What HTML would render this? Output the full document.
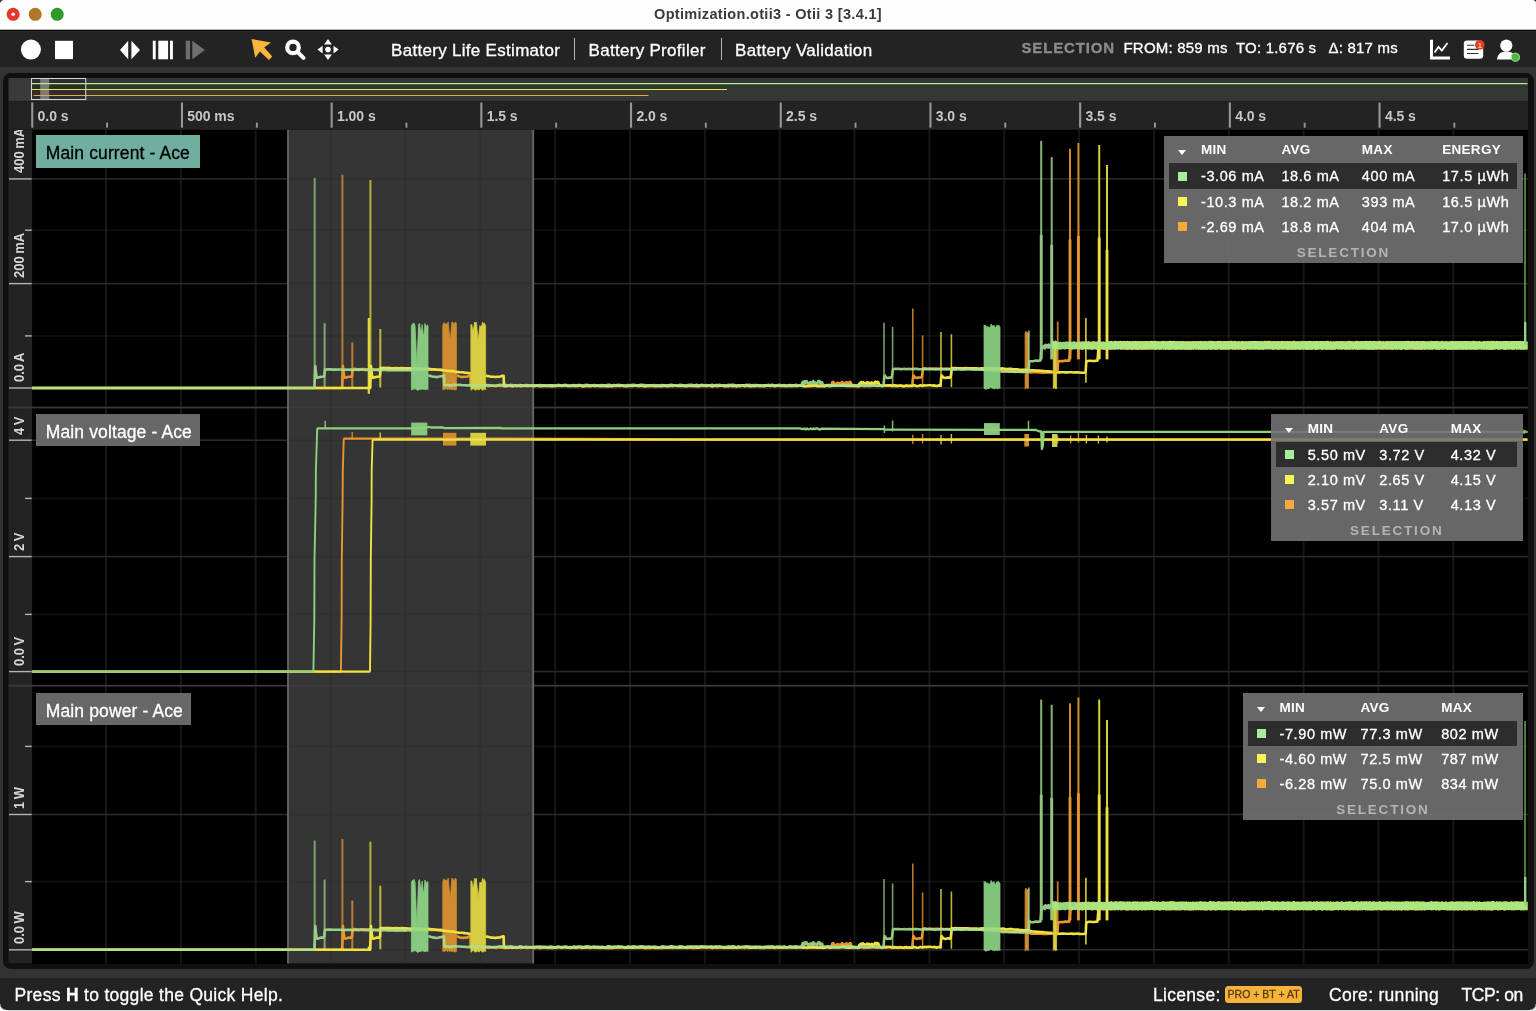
<!DOCTYPE html>
<html><head><meta charset="utf-8"><title>Optimization.otii3 - Otii 3 [3.4.1]</title>
<style>
html,body{margin:0;padding:0}
body{width:1536px;height:1011px;overflow:hidden;background:#333;font-family:"Liberation Sans",sans-serif;position:relative;color:#fff}
.abs{position:absolute}
#wrap{position:absolute;left:0;top:0;width:1536px;height:1011px;will-change:transform}
#titlebar{position:absolute;left:0;top:0;width:1536px;height:30px;background:#fdfdfd;box-sizing:border-box;border-bottom:1px solid #b6b6b6}
#title{position:absolute;left:0;top:6px;width:1536px;text-align:center;font-weight:bold;font-size:14.5px;line-height:16px;color:#3b3b3b;letter-spacing:0.32px}
.tl{position:absolute;top:8px;width:12.6px;height:12.6px;border-radius:50%}
#toolbar{position:absolute;left:0;top:30px;width:1536px;height:36.5px;background:#232323;border-top:1px solid #0a0a0a;box-sizing:border-box}
.nav{position:absolute;top:41px;font-size:17px;line-height:20px;color:#fff;white-space:nowrap;letter-spacing:0.3px}
.sep{position:absolute;top:37.5px;width:1.3px;height:22px;background:#b4b4b4}
.nav,.st,.sel,.clabel,.legend .v{-webkit-text-stroke:0.3px currentColor}
.sel{position:absolute;top:39px;font-size:15px;line-height:18px;color:#fff;white-space:nowrap;letter-spacing:0.2px}
#panel{position:absolute;left:3.4px;top:72.7px;width:1530.2px;height:896.2px;background:#101010;border-radius:8px}
#inner{position:absolute;left:8.5px;top:78px;width:1519.5px;height:885.5px;background:#000;overflow:hidden}
#status{position:absolute;left:0;top:978px;width:1536px;height:31.5px;background:#232323}
#bottomline{position:absolute;left:0;top:1009.5px;width:1536px;height:1.5px;background:#d8d8d8}
.st{position:absolute;top:985px;font-size:17.5px;line-height:20px;color:#fff;white-space:nowrap;letter-spacing:0.3px}
.tick{position:absolute;font-size:14px;font-weight:bold;color:#c8c8c8;line-height:14px;white-space:nowrap;letter-spacing:-0.05px}
.ylab{position:absolute;font-size:13px;font-weight:bold;color:#d6d6d6;line-height:14px;white-space:nowrap;transform-origin:0 0;transform:rotate(-90deg) scaleY(1.07);letter-spacing:0px;word-spacing:-1.1px}
#ywrap{position:absolute;left:8.5px;top:129.8px;width:23.2px;height:833.7px;overflow:hidden}
.clabel{position:absolute;height:32.2px;line-height:32.6px;padding-top:1.5px;font-size:17.5px;letter-spacing:0.12px;color:#fff;background:#676767;white-space:nowrap;padding-left:9.5px;box-sizing:border-box}
.legend{position:absolute;background:rgba(114,114,114,0.9);height:126.8px}
.legend .hd{position:absolute;top:6.3px;font-size:13.5px;font-weight:bold;line-height:16px;color:#fff;white-space:nowrap;letter-spacing:0.3px}
.legend .v{position:absolute;font-size:14.5px;line-height:18px;color:#fff;white-space:nowrap;letter-spacing:0.6px}
.legend .row{position:absolute;left:5.2px;height:25.2px;background:#2d2d2d}
.legend .sq{position:absolute;left:14px;width:9px;height:9px}
.legend .selt{position:absolute;left:0;width:100%;text-align:center;top:109.2px;font-size:13.5px;line-height:16px;font-weight:bold;color:#b4b4b4;letter-spacing:1.8px}
.caret{position:absolute;left:14.2px;top:14px;width:0;height:0;border-left:4.5px solid transparent;border-right:4.5px solid transparent;border-top:5px solid #fff}
</style></head>
<body>
<div id="wrap">
<div id="titlebar"><svg class="abs" style="left:0;top:0" width="80" height="30"><circle cx="13.15" cy="14.3" r="6.5" fill="#e8362a"/><circle cx="13.15" cy="14.3" r="1.8" fill="#fff"/><circle cx="35.2" cy="14.3" r="6.5" fill="#b0762a"/><circle cx="57.2" cy="14.3" r="6.5" fill="#2f9a2a"/></svg><div id="title">Optimization.otii3 - Otii 3 [3.4.1]</div><svg class="abs" style="left:0;top:0" width="8" height="8"><path d="M0 0H4.5A4.5 4.5 0 0 0 0 3.5Z" fill="#333"/></svg><svg class="abs" style="left:1528px;top:0" width="8" height="8"><path d="M8 0H5A3.2 3.2 0 0 1 8 2.6Z" fill="#333"/></svg></div>
<div id="toolbar"></div>
<svg class="abs" style="left:0;top:30px" width="360" height="37" viewBox="0 30 360 37">
<circle cx="30.9" cy="49.6" r="10" fill="#fff"/>
<rect x="55" y="40.8" width="18" height="18.3" fill="#fff"/>
<path d="M120 50L128.2 40.7V59.3Z M140 50L131.4 40.7V59.3Z" fill="#fff"/>
<rect x="152.8" y="40.7" width="2.9" height="18.6" fill="#fff"/><rect x="158.3" y="40.7" width="9.8" height="18.6" fill="#fff"/><rect x="170" y="40.7" width="2.9" height="18.6" fill="#fff"/>
<rect x="185.8" y="40.7" width="4.2" height="18.6" fill="#6f6f6f"/><path d="M192.3 40.7L205 50L192.3 59.3Z" fill="#6f6f6f"/>
<path d="M251.6 39L271 42.6L264.2 47.6L272.3 56.6L268.9 60.1L260 51.6L255.2 57.8Z" fill="#f9b43c"/>
<circle cx="293" cy="47.4" r="5.75" fill="none" stroke="#fff" stroke-width="4.2"/><path d="M297.4 51.8L303.5 57.9" stroke="#fff" stroke-width="4" stroke-linecap="round"/>
<g fill="#fff"><circle cx="328" cy="49.6" r="2.8"/><path d="M328 39L331.9 44.6H324.1Z"/><path d="M328 60.1L331.9 54.6H324.1Z"/><path d="M317.5 49.6L322.6 45.7V53.5Z"/><path d="M338.6 49.6L333.5 45.7V53.5Z"/></g>
</svg>
<div class="nav" style="left:391px">Battery Life Estimator</div><div class="sep" style="left:574px"></div><div class="nav" style="left:588.5px">Battery Profiler</div><div class="sep" style="left:720.5px"></div><div class="nav" style="left:735px">Battery Validation</div>
<div class="sel" style="left:1021.5px;color:#8c8c8c;font-weight:bold;letter-spacing:0.85px">SELECTION</div><div class="sel" style="left:1123.5px">FROM: 859 ms</div><div class="sel" style="left:1236px">TO: 1.676 s</div><div class="sel" style="left:1328.5px">Δ: 817 ms</div>
<svg class="abs" style="left:1420px;top:30px" width="116" height="37" viewBox="1420 30 116 37">
<path d="M1431.5 39.7V58H1450" fill="none" stroke="#fff" stroke-width="3"/>
<path d="M1434.5 52.5L1438.5 47L1441.8 50.5L1447.5 43" fill="none" stroke="#fff" stroke-width="1.8"/>
<rect x="1463.8" y="40.4" width="19.4" height="18.4" rx="3.2" fill="#fff"/>
<path d="M1467 45.3H1474.5M1467 49.4H1478.5M1467 53.5H1478.5" stroke="#333" stroke-width="1.1"/>
<circle cx="1479.8" cy="44.8" r="4.8" fill="#e8382c"/>
<text x="1479.8" y="47.6" font-size="7.5" font-weight="bold" fill="#ffd9a0" text-anchor="middle" font-family="Liberation Sans, sans-serif">1</text>
<circle cx="1506.3" cy="45.6" r="6.1" fill="#fff"/>
<path d="M1497 59.4C1497.5 54 1501 51.4 1506.3 51.4C1511.6 51.4 1515.5 54 1516.5 59.4Z" fill="#fff"/>
<circle cx="1515.4" cy="57.2" r="4.1" fill="#4cb848" stroke="#a8e4a0" stroke-width="0.9"/>
</svg>
<div id="panel"></div>
<div id="inner"></div>
<svg class="abs" style="left:0;top:0" width="1536" height="1011" viewBox="0 0 1536 1011">
<defs><clipPath id="c1"><rect x="31.7" y="129.8" width="1496.3" height="277.5"/></clipPath><clipPath id="c2"><rect x="31.7" y="408" width="1496.3" height="277.5"/></clipPath><clipPath id="c3"><rect x="31.7" y="686" width="1496.3" height="277.5"/></clipPath></defs>
<rect x="8.5" y="78" width="1519.5" height="23.2" fill="#3a3a3a"/><rect x="31.5" y="78" width="1496.5" height="23.2" fill="#353735"/><rect x="31.5" y="84" width="1496.5" height="4.2" fill="#2d3a2b"/><rect x="31.5" y="89.3" width="695.5" height="3" fill="#38382c"/><rect x="31.3" y="78.2" width="54.5" height="21.6" fill="#000" fill-opacity="0.17"/><rect x="40.2" y="78.5" width="9" height="21" fill="#8c8c8c" fill-opacity="0.8"/><path d="M31.5 83.6H1527.5" stroke="#b6e6a6" stroke-width="1.05"/><path d="M31.5 89.4H727" stroke="#ebe25c" stroke-width="1.05"/><path d="M33.6 95.4H648.5" stroke="#e8a644" stroke-width="1.05"/><rect x="31.5" y="78.5" width="54.2" height="21" fill="none" stroke="#d2d2d2" stroke-width="1.05"/>
<rect x="8.5" y="101.2" width="1519.5" height="28.6" fill="#232323"/><rect x="31.2" y="102.5" width="2.1" height="25.2" fill="#969696"/><rect x="106.1" y="122.6" width="1.9" height="5.1" fill="#969696"/><rect x="180.9" y="102.5" width="2.1" height="25.2" fill="#969696"/><rect x="255.9" y="122.6" width="1.9" height="5.1" fill="#969696"/><rect x="330.6" y="102.5" width="2.1" height="25.2" fill="#969696"/><rect x="405.5" y="122.6" width="1.9" height="5.1" fill="#969696"/><rect x="480.3" y="102.5" width="2.1" height="25.2" fill="#969696"/><rect x="555.2" y="122.6" width="1.9" height="5.1" fill="#969696"/><rect x="630" y="102.5" width="2.1" height="25.2" fill="#969696"/><rect x="704.9" y="122.6" width="1.9" height="5.1" fill="#969696"/><rect x="779.7" y="102.5" width="2.1" height="25.2" fill="#969696"/><rect x="854.6" y="122.6" width="1.9" height="5.1" fill="#969696"/><rect x="929.4" y="102.5" width="2.1" height="25.2" fill="#969696"/><rect x="1004.3" y="122.6" width="1.9" height="5.1" fill="#969696"/><rect x="1079.1" y="102.5" width="2.1" height="25.2" fill="#969696"/><rect x="1154" y="122.6" width="1.9" height="5.1" fill="#969696"/><rect x="1228.8" y="102.5" width="2.1" height="25.2" fill="#969696"/><rect x="1303.7" y="122.6" width="1.9" height="5.1" fill="#969696"/><rect x="1378.5" y="102.5" width="2.1" height="25.2" fill="#969696"/><rect x="1453.4" y="122.6" width="1.9" height="5.1" fill="#969696"/>
<rect x="8.5" y="129.8" width="23.2" height="833.7" fill="#232323"/><rect x="288.3" y="129.8" width="244.9" height="833.7" fill="#353535"/><rect x="30.2" y="129.8" width="2" height="833.7" fill="#2c2c2c" fill-opacity="0.52"/><rect x="105" y="129.8" width="2" height="833.7" fill="#2c2c2c" fill-opacity="0.52"/><rect x="179.9" y="129.8" width="2" height="833.7" fill="#2c2c2c" fill-opacity="0.52"/><rect x="254.7" y="129.8" width="2" height="833.7" fill="#2c2c2c" fill-opacity="0.52"/><rect x="329.6" y="129.8" width="2" height="833.7" fill="#2c2c2c" fill-opacity="0.52"/><rect x="404.4" y="129.8" width="2" height="833.7" fill="#2c2c2c" fill-opacity="0.52"/><rect x="479.3" y="129.8" width="2" height="833.7" fill="#2c2c2c" fill-opacity="0.52"/><rect x="554.1" y="129.8" width="2" height="833.7" fill="#2c2c2c" fill-opacity="0.52"/><rect x="629" y="129.8" width="2" height="833.7" fill="#2c2c2c" fill-opacity="0.52"/><rect x="703.9" y="129.8" width="2" height="833.7" fill="#2c2c2c" fill-opacity="0.52"/><rect x="778.7" y="129.8" width="2" height="833.7" fill="#2c2c2c" fill-opacity="0.52"/><rect x="853.5" y="129.8" width="2" height="833.7" fill="#2c2c2c" fill-opacity="0.52"/><rect x="928.4" y="129.8" width="2" height="833.7" fill="#2c2c2c" fill-opacity="0.52"/><rect x="1003.2" y="129.8" width="2" height="833.7" fill="#2c2c2c" fill-opacity="0.52"/><rect x="1078.1" y="129.8" width="2" height="833.7" fill="#2c2c2c" fill-opacity="0.52"/><rect x="1153" y="129.8" width="2" height="833.7" fill="#2c2c2c" fill-opacity="0.52"/><rect x="1227.8" y="129.8" width="2" height="833.7" fill="#2c2c2c" fill-opacity="0.52"/><rect x="1302.6" y="129.8" width="2" height="833.7" fill="#2c2c2c" fill-opacity="0.52"/><rect x="1377.5" y="129.8" width="2" height="833.7" fill="#2c2c2c" fill-opacity="0.52"/><rect x="1452.3" y="129.8" width="2" height="833.7" fill="#2c2c2c" fill-opacity="0.52"/><rect x="31.7" y="178.1" width="256.6" height="1.6" fill="#2c2c2c" fill-opacity="0.95"/><rect x="288.3" y="178.1" width="244.9" height="1.6" fill="#2f2f2f" fill-opacity="0.8"/><rect x="533.2" y="178.1" width="994.8" height="1.6" fill="#2c2c2c" fill-opacity="0.95"/><rect x="31.7" y="282.8" width="256.6" height="1.6" fill="#2c2c2c" fill-opacity="0.95"/><rect x="288.3" y="282.8" width="244.9" height="1.6" fill="#2f2f2f" fill-opacity="0.8"/><rect x="533.2" y="282.8" width="994.8" height="1.6" fill="#2c2c2c" fill-opacity="0.95"/><rect x="31.7" y="387.2" width="256.6" height="1.6" fill="#2c2c2c" fill-opacity="0.95"/><rect x="288.3" y="387.2" width="244.9" height="1.6" fill="#2f2f2f" fill-opacity="0.8"/><rect x="533.2" y="387.2" width="994.8" height="1.6" fill="#2c2c2c" fill-opacity="0.95"/><rect x="31.7" y="439.4" width="256.6" height="1.6" fill="#2c2c2c" fill-opacity="0.95"/><rect x="288.3" y="439.4" width="244.9" height="1.6" fill="#2f2f2f" fill-opacity="0.8"/><rect x="533.2" y="439.4" width="994.8" height="1.6" fill="#2c2c2c" fill-opacity="0.95"/><rect x="31.7" y="555.8" width="256.6" height="1.6" fill="#2c2c2c" fill-opacity="0.95"/><rect x="288.3" y="555.8" width="244.9" height="1.6" fill="#2f2f2f" fill-opacity="0.8"/><rect x="533.2" y="555.8" width="994.8" height="1.6" fill="#2c2c2c" fill-opacity="0.95"/><rect x="31.7" y="670.8" width="256.6" height="1.6" fill="#2c2c2c" fill-opacity="0.95"/><rect x="288.3" y="670.8" width="244.9" height="1.6" fill="#2f2f2f" fill-opacity="0.8"/><rect x="533.2" y="670.8" width="994.8" height="1.6" fill="#2c2c2c" fill-opacity="0.95"/><rect x="31.7" y="813.7" width="256.6" height="1.6" fill="#2c2c2c" fill-opacity="0.95"/><rect x="288.3" y="813.7" width="244.9" height="1.6" fill="#2f2f2f" fill-opacity="0.8"/><rect x="533.2" y="813.7" width="994.8" height="1.6" fill="#2c2c2c" fill-opacity="0.95"/><rect x="31.7" y="949" width="256.6" height="1.6" fill="#2c2c2c" fill-opacity="0.95"/><rect x="288.3" y="949" width="244.9" height="1.6" fill="#2f2f2f" fill-opacity="0.8"/><rect x="533.2" y="949" width="994.8" height="1.6" fill="#2c2c2c" fill-opacity="0.95"/><rect x="31.7" y="229.4" width="1496.3" height="1.6" fill="#2c2c2c" fill-opacity="0.38"/><rect x="31.7" y="335.1" width="1496.3" height="1.6" fill="#2c2c2c" fill-opacity="0.38"/><rect x="31.7" y="497.6" width="1496.3" height="1.6" fill="#2c2c2c" fill-opacity="0.38"/><rect x="31.7" y="613.6" width="1496.3" height="1.6" fill="#2c2c2c" fill-opacity="0.38"/><rect x="31.7" y="745.6" width="1496.3" height="1.6" fill="#2c2c2c" fill-opacity="0.38"/><rect x="31.7" y="880.8" width="1496.3" height="1.6" fill="#2c2c2c" fill-opacity="0.38"/><rect x="9" y="178.2" width="22.7" height="1.4" fill="#b4b4b4"/><rect x="9" y="282.9" width="22.7" height="1.4" fill="#b4b4b4"/><rect x="9" y="387.3" width="22.7" height="1.4" fill="#b4b4b4"/><rect x="9" y="439.5" width="22.7" height="1.4" fill="#b4b4b4"/><rect x="9" y="555.9" width="22.7" height="1.4" fill="#b4b4b4"/><rect x="9" y="670.9" width="22.7" height="1.4" fill="#b4b4b4"/><rect x="9" y="813.8" width="22.7" height="1.4" fill="#b4b4b4"/><rect x="9" y="949.1" width="22.7" height="1.4" fill="#b4b4b4"/><rect x="25" y="229.5" width="6.7" height="1.4" fill="#b4b4b4"/><rect x="25" y="335.2" width="6.7" height="1.4" fill="#b4b4b4"/><rect x="25" y="497.7" width="6.7" height="1.4" fill="#b4b4b4"/><rect x="25" y="613.7" width="6.7" height="1.4" fill="#b4b4b4"/><rect x="25" y="745.7" width="6.7" height="1.4" fill="#b4b4b4"/><rect x="25" y="880.9" width="6.7" height="1.4" fill="#b4b4b4"/><rect x="8.5" y="406.6" width="1519.5" height="1.8" fill="#3a3a3a"/><rect x="8.5" y="684.8" width="1519.5" height="1.8" fill="#3a3a3a"/>
<rect x="287.1" y="129.8" width="1.8" height="833.7" fill="#686868"/><rect x="532.3" y="129.8" width="1.8" height="833.7" fill="#686868"/>
<g clip-path="url(#c1)"><g opacity="1"><path d="M442.8 389.6L442.8 325.6L443.7 322.8L444.6 323L445.5 324.2L446.4 323.9L447.3 324L448.2 322L449.1 331.3L450 339.2L450.9 334.1L451.8 322.2L452.7 322.1L453.6 324.2L454.5 323.7L455.4 322L456.3 322.9L456.4 325.3L456.4 389.6L456.4 389.5L455.3 389.9L454.2 389.8L453.1 389.1L452 390L450.9 388.7L449.8 389.9L448.7 388.7L447.6 389.8L446.5 388.6L445.4 389.1L444.3 389.4L443.2 389.4Z" fill="#cf8d30" stroke="#cf8d30" stroke-width="0.8" stroke-linejoin="round"/><path d="M1025.1 388.5L1025.1 333.1L1026 331.1L1026.9 333.8L1027.8 332.2L1028.4 334.2L1028.4 388.5L1028.4 388.4L1027.3 388.3L1026.2 387.6L1025.1 389.2Z" fill="#cf8d30" stroke="#cf8d30" stroke-width="0.8" stroke-linejoin="round"/><path d="M342.4 388V174.8" stroke="#e8962e" stroke-width="2.1" stroke-opacity="0.68"/><path d="M352.3 387.5V342.5" stroke="#e8962e" stroke-width="2.0" stroke-opacity="0.75"/><path d="M912.8 387V308.6" stroke="#e8962e" stroke-width="1.6" stroke-opacity="0.8"/><path d="M922.6 387V335.2" stroke="#e8962e" stroke-width="1.6" stroke-opacity="0.8"/><path d="M1057.7 368.1V321.6" stroke="#e8962e" stroke-width="1.7" stroke-opacity="0.85"/><path d="M1070 359.3V148.7" stroke="#e8962e" stroke-width="2.0" stroke-opacity="0.9"/><path d="M1070 359.3V239.6" stroke="#e8962e" stroke-width="2.9" stroke-opacity="0.95"/><path d="M1078.4 359.3V142.9" stroke="#e8962e" stroke-width="2.0" stroke-opacity="0.9"/><path d="M1078.4 359.3V236.1" stroke="#e8962e" stroke-width="2.9" stroke-opacity="0.95"/><path d="M31.7 388L342.1 388L342.5 377.6L343 366.1L343.6 372.3L344.3 376.5L345 377.8L346.9 377.3L348.9 376.8L350.9 376.8L352 376L352.6 369.1L353.9 368.9L355.9 369L357.9 369.4L360 369.4L362 369.1L364 369.1L366 369.2L368 369.3L370.1 369.2L372.1 369.3L374.1 369.3L376.1 369.5L378.1 369.4L380.2 369.4L382.2 369.3L384.2 369.2L386.2 369.2L388.2 369.4L390.3 369.5L392.3 369.6L394.3 369.7L396.3 369.7L398.3 369.5L400.4 369.6L402.4 369.6L404.4 369.4L406.4 369.6L408.5 369.6L410.5 369.7L412.5 369.9L414.5 369.7L416.5 369.8L418.6 369.7L420.6 369.5L422.6 369.7L424.6 369.9L426.6 369.6L428.7 369.7L430.7 369.7L432.7 369.7L434.7 369.7L436.7 369.7L438.8 369.9L440.8 369.7L442.8 369.7M456.7 375.4L458.2 376L459.7 376.5L461.3 376.9L462.8 377L464.3 376.8L465.8 376.8L467.4 376.6L468.9 375.9L470.4 375.4L470.8 386L472.4 385.6L474.4 386.3L476.4 385.7L478.4 386.4L480.4 385.8L482.4 386.2L484.4 386.2L486.4 385.6L488.4 386.3L490.4 385.9L492.4 385.6L494.4 386.2L496.4 386.2L498.4 385.6L500.4 386L502.4 385.8L504.4 386.4L506.4 386.1L508.4 386.3L510.4 385.8L512.4 386.4L514.4 385.5L516.4 386.4L518.5 385.7L520.5 386.4L522.5 386.2L524.5 385.7L526.5 386.3L528.5 386.3L530.5 385.8L532.5 386.1L534.5 386.4L536.5 385.5L538.5 386.3L540.5 386.4L542.5 386.1L544.5 385.9L546.5 385.7L548.5 386.3L550.5 386.1L552.5 386.4L554.5 386L556.5 385.7L558.5 385.7L560.5 385.6L562.5 385.7L564.5 385.6L566.5 385.8L568.5 386L570.5 386.2L572.5 385.8L574.5 386.1L576.5 386.3L578.5 386L580.5 385.6L582.5 386.3L584.5 385.9L586.5 386.1L588.5 385.9L590.5 386.3L592.5 385.5L594.5 386.2L596.5 385.9L598.5 386L600.5 386.4L602.5 385.9L604.5 386.3L606.5 386.4L608.6 386.4L610.6 386.3L612.6 386.3L614.6 385.8L616.6 386L618.6 385.5L620.6 385.6L622.6 385.5L624.6 386.2L626.6 386L628.6 386.2L630.6 385.9L632.6 385.8L634.6 385.7L636.6 385.8L638.6 386.2L640.6 386L642.6 385.9L644.6 386.4L646.6 386.4L648.6 386L650.6 386.3L652.6 385.8L654.6 386.2L656.6 386.3L658.6 386.3L660.6 386.2L662.6 386.2L664.6 385.9L666.6 386L668.6 386.1L670.6 385.8L672.6 386.2L674.6 385.6L676.6 385.5L678.6 385.7L680.6 386L682.6 386L684.6 385.9L686.6 386.4L688.6 386L690.6 385.9L692.6 386.3L694.6 386.3L696.7 385.7L698.7 386.1L700.7 385.9L702.7 385.6L704.7 385.9L706.7 386.2L708.7 385.5L710.7 386.1L712.7 386.4L714.7 385.8L716.7 386.3L718.7 386.1L720.7 385.6L722.7 385.8L724.7 386.4L726.7 386L728.7 386L730.7 386L732.7 386.2L734.7 385.9L736.7 386.4L738.7 386.2L740.7 386.1L742.7 385.6L744.7 386.4L746.7 385.7L748.7 386.3L750.7 385.9L752.7 386.1L754.7 386L756.7 385.7L758.7 386.1L760.7 386.3L762.7 386.3L764.7 386.4L766.7 385.6L768.7 385.8L770.7 385.5L772.7 385.8L774.7 386.4L776.7 385.8L778.7 385.7L780.7 385.8L782.7 386L784.7 386.1L786.8 386L788.8 385.7L790.8 386.2L792.8 385.9L794.8 386L796.8 385.5L798.8 385.7L800.8 385.6L802.8 385.6L804.8 386.2L806.8 386.2L808.8 386L810.8 386.2L812.8 386L814.8 385.8L816.8 385.6L818.8 385.9L820.8 385.7L822.8 386.3L824.8 386.1L826.8 385.5L828.8 386.3L830.8 386L830.8 384.7L831.6 384.6L832.4 382.1L833.2 381.8L834 382.9L834.8 384.5L835.6 384L836.4 384.2L837.2 382.8L838 382.8L838.8 383.5L839.6 383.3L840.4 384.6L841.2 383.2L842 381.9L842.8 382.5L843.6 384.6L844.4 383.3L845.2 382.7L846 384.1L846.8 382.1L847.6 383.5L848.4 382.7L849.2 383.7L850 381.8L850.8 382.5L851.8 385.9L853.8 386.3L855.8 386L857.8 386.4L859.9 385.9L861.9 385.6L863.9 386.3L865.9 386L867.9 386L869.9 386.1L872 385.8L874 385.6L876 385.8L878 386L880 385.5L882 386.1L884.1 385.7L886.1 385.8L888.1 385.7L890.1 385.6L892.1 386.2L894.1 385.8L896.2 386.1L898.2 385.8L900.2 385.5L902.2 385.8L904.2 386.4L906.2 386L908.3 385.8L910.3 385.6L912.3 385.8L913 377.6L913.6 375.5L914.8 377.3L915.8 377.7L917.1 377.9L918.4 377.5L919.8 377.5L921.1 377.5L922 376.5L922.9 369.2L923.3 368.4L925.4 368.5L927.4 368.8L929.5 368.5L931.5 368.6L933.6 368.8L935.7 368.6L937.7 368.7L939.8 368.9L941.9 368.7L943.9 369L946 368.8L948 368.9L950.1 369L952.2 368.9L954.2 369L956.3 369.1L958.4 368.8L960.4 369.2L962.5 369.2L964.5 369.1L966.6 368.9L968.7 369L970.7 369L972.8 369.1L974.8 369.1L976.9 369.3L978.9 369.5L981 369.5L983 369.8L985.1 369.9L987.2 369.8L989.2 370.1L991.3 370L993.4 370.1L995.4 370.4L997.5 370.4L999.5 370.5L1001.6 370.5L1003.7 371L1005.7 371.1L1007.8 371.1L1009.9 371.2L1011.9 371.4L1014 371.6L1016 371.5L1018.1 371.5L1020.2 371.8L1022.2 371.9L1024.3 372.1M1029.3 372.2L1031.3 372.4L1033.3 372.3L1035.3 372.3L1037.3 372.3L1039.3 372.5L1041.3 372.3L1043.3 372.6L1045.4 372.4L1047.4 372.5L1049.4 372.5L1051.4 372.4L1053.4 372.4L1055.4 372.5L1057.4 372.7L1058.1 361.4L1059.8 361.3L1061.2 361L1062.5 361.1L1063.9 361L1065.2 360.5L1066.6 361L1067.9 360.4L1069.3 360.6L1070.4 347.2L1071.3 347.2L1072 347.3L1072.6 348.2L1073.2 346.7L1073.9 347.7L1074.5 346.7L1075.2 347.2L1075.8 344.9L1076.5 344.8L1077.1 346.5L1077.8 345.7L1079 345.4" fill="none" stroke="#e8962e" stroke-width="2.6" stroke-linejoin="round"/>
</g><path d="M1079 341.1L1079.9 341.9L1080.8 341.8L1081.7 341.7L1082.6 341.3L1083.5 341.3L1084.4 341.6L1085.3 341.7L1086.2 341.1L1087.1 341.4L1088 341.3L1088.9 341.2L1089.8 341.3L1090.7 341.7L1091.6 341.4L1092.5 341.6L1093.4 341.1L1094.3 341.6L1095.2 341.8L1096.1 341.9L1097 341.7L1097.9 341.2L1098.8 341.3L1099.7 341.5L1100.6 341.2L1101.5 341.8L1102.4 341.9L1103.3 341.1L1104.2 341.9L1105.1 341.8L1106 341.8L1106.9 341.8L1107.8 341.4L1108.7 341.7L1109.6 342L1110.5 341.2L1111.4 341.3L1112.3 341.5L1113.2 341.7L1114.1 341.4L1115 341.1L1115.9 341.6L1116.8 341.7L1117.7 341.5L1118.6 341.5L1119.5 341.1L1120.4 341.6L1121.3 341.5L1122.2 341.9L1123.1 341.9L1124 341.4L1124.9 341.9L1125.8 341.3L1126.7 341.9L1127.6 341.9L1128.5 341.4L1129.4 341.1L1130.3 342L1131.2 341.8L1132.1 341.5L1133 341.5L1133.9 341.8L1134.8 341.2L1135.7 341.4L1136.6 341.9L1137.5 341.9L1138.4 341.9L1139.3 342L1140.2 341.7L1141.1 341.2L1142 341.3L1142.9 341.2L1143.8 341.9L1144.7 341.4L1145.6 341.7L1146.5 341.6L1147.4 341.6L1148.3 341.3L1149.2 341.6L1150.1 341.3L1151 341.8L1151.9 341.4L1152.8 342L1153.7 341.8L1154.6 341.5L1155.5 341.4L1156.4 341.4L1157.3 342L1158.2 341.2L1159.1 341.5L1160 341.8L1160.9 341.4L1161.8 341.8L1162.7 341.1L1163.6 341.6L1164.5 341.8L1165.4 341.4L1166.3 341.2L1167.2 341.6L1168.1 341.3L1169 341.4L1169.9 341.4L1170.8 341.2L1171.7 341.7L1172.6 341.7L1173.5 341.2L1174.4 341.3L1175.3 341.3L1176.2 341.6L1177.1 341.6L1178 341.8L1178.9 341.8L1179.8 341.5L1180.7 341.9L1181.6 341.2L1182.5 341.4L1183.4 341.2L1184.3 341.7L1185.2 341.2L1186.1 342L1187 341.8L1187.9 341.7L1188.8 341.3L1189.7 341.6L1190.6 341.2L1191.5 341.5L1192.4 341.9L1193.3 341.7L1194.2 341.5L1195.1 341.4L1196 341.3L1196.9 341.9L1197.8 341.1L1198.7 341.8L1199.6 341.2L1200.5 341.4L1201.4 341.8L1202.3 342L1203.2 341.9L1204.1 341.7L1205 341.1L1205.9 341.6L1206.8 341.8L1207.7 341.5L1208.6 341.9L1209.5 341.4L1210.4 341.4L1211.3 341.5L1212.2 341.5L1213.1 341.3L1214 341.4L1214.9 341.8L1215.8 341.6L1216.7 341.9L1217.6 341.5L1218.5 341.4L1219.4 341.9L1220.3 341.9L1221.2 341.6L1222.1 341.7L1223 341.6L1223.9 341.7L1224.8 341.2L1225.7 341.9L1226.6 341.7L1227.5 341.4L1228.4 341.2L1229.3 341.1L1230.2 341.7L1231.1 342L1232 341.1L1232.9 341.2L1233.8 341.5L1234.7 341.6L1235.6 341.3L1236.5 342L1237.4 341.1L1238.3 341.4L1239.2 341.2L1240.1 341.8L1241 341.2L1241.9 341.2L1242.8 341.5L1243.7 341.8L1244.6 342L1245.5 341.5L1246.4 341.4L1247.3 341.5L1248.2 341.6L1249.1 341.9L1250 341.6L1250.9 341.1L1251.8 341.5L1252.7 341.6L1253.6 341.3L1254.5 341.9L1255.4 341.9L1256.3 342L1257.2 341.1L1258.1 341.5L1259 341.6L1259.9 341.6L1260.8 341.8L1261.7 341.1L1262.6 341.4L1263.5 341.7L1264.4 341.1L1265.3 341.5L1266.2 341.8L1267.1 341.7L1268 341.6L1268.9 341.5L1269.8 341.6L1270.7 341.3L1271.6 341.5L1272.5 341.3L1273.4 341.1L1274.3 341.5L1275.2 341.6L1276.1 341.1L1277 341.4L1277.9 341.4L1278.8 341.3L1279.7 341.9L1280.6 341.4L1281.5 341.6L1282.4 341.3L1283.3 341.2L1284.2 341.6L1285.1 341.3L1286 341.4L1286.9 341.6L1287.8 341.6L1288.7 341.1L1289.6 341.5L1290.5 341.9L1291.4 341.7L1292.3 341.5L1293.2 341.2L1294.1 341.9L1295 342L1295.9 341.3L1296.8 341.7L1297.7 341.2L1298.6 341.2L1299.5 341.5L1300.4 341.4L1301.3 341.7L1302.2 341.5L1303.1 341.6L1304 341.5L1304.9 341.8L1305.8 341.1L1306.7 341.8L1307.6 341.3L1308.5 341.5L1309.4 341.2L1310.3 341.5L1311.2 341.6L1312.1 341.7L1313 341.8L1313.9 341.2L1314.8 341.4L1315.7 341.9L1316.6 341.4L1317.5 341.9L1318.4 341.8L1319.3 341.6L1320.2 342L1321.1 341.7L1322 341.6L1322.9 341.1L1323.8 341.3L1324.7 341.6L1325.6 342L1326.5 341.6L1327.4 341.3L1328.3 341.3L1329.2 342L1330.1 341.8L1331 341.9L1331.9 341.6L1332.8 342L1333.7 341.3L1334.6 341.8L1335.5 341.4L1336.4 341.4L1337.3 341.9L1338.2 342L1339.1 341.9L1340 341.5L1340.9 341.1L1341.8 341.4L1342.7 341.1L1343.6 341.8L1344.5 342L1345.4 341.4L1346.3 341.2L1347.2 341.9L1348.1 341.1L1349 341.6L1349.9 342L1350.8 341.1L1351.7 341.2L1352.6 341.7L1353.5 341.9L1354.4 341.5L1355.3 341.5L1356.2 341.1L1357.1 341.3L1358 341.7L1358.9 341.8L1359.8 341.6L1360.7 341.2L1361.6 341.1L1362.5 341.7L1363.4 341.1L1364.3 342L1365.2 341.7L1366.1 341.3L1367 341.8L1367.9 341.2L1368.8 341.2L1369.7 341.9L1370.6 341.4L1371.5 341.5L1372.4 341.5L1373.3 341.6L1374.2 341.9L1375.1 341.7L1376 341.5L1376.9 341.8L1377.8 341.7L1378.7 341.9L1379.6 341.1L1380.5 341.9L1381.4 341.9L1382.3 341.6L1383.2 341.6L1384.1 341.2L1385 342L1385.9 341.7L1386.8 341.9L1387.7 341.8L1388.6 341.8L1389.5 341.3L1390.4 341.6L1391.3 341.2L1392.2 341.1L1393.1 341.3L1394 341.5L1394.9 341.5L1395.8 342L1396.7 341.1L1397.6 341.6L1398.5 341.2L1399.4 341.6L1400.3 341.9L1401.2 341.3L1402.1 341.1L1403 341.1L1403.9 341.5L1404.8 341.9L1405.7 341.3L1406.6 341.5L1407.5 341.4L1408.4 341.3L1409.3 341.5L1410.2 341.5L1411.1 341.1L1412 341.3L1412.9 341.1L1413.8 341.2L1414.7 341.8L1415.6 341.8L1416.5 341.4L1417.4 341.2L1418.3 341.3L1419.2 341.7L1420.1 341.1L1421 341.6L1421.9 342L1422.8 341.1L1423.7 341.4L1424.6 342L1425.5 341.6L1426.4 341.7L1427.3 341.9L1428.2 341.7L1429.1 341.9L1430 341.6L1430.9 341.1L1431.8 342L1432.7 341.1L1433.6 341.3L1434.5 341.1L1435.4 341.4L1436.3 341.9L1437.2 341.8L1438.1 341.2L1439 341.2L1439.9 342L1440.8 342L1441.7 341.1L1442.6 341.9L1443.5 341.4L1444.4 341.6L1445.3 341.2L1446.2 341.3L1447.1 342L1448 341.8L1448.9 341.8L1449.8 341.4L1450.7 341.2L1451.6 341.1L1452.5 341.4L1453.4 341.4L1454.3 341.8L1455.2 341.3L1456.1 341.9L1457 341.8L1457.9 341.8L1458.8 341.2L1459.7 341.4L1460.6 341.3L1461.5 341.1L1462.4 341.7L1463.3 341.6L1464.2 341.4L1465.1 341.1L1466 341.1L1466.9 341.4L1467.8 341.5L1468.7 341.8L1469.6 341.9L1470.5 341.4L1471.4 341.9L1472.3 341.7L1473.2 341.6L1474.1 341.7L1475 341.9L1475.9 341.6L1476.8 342L1477.7 342L1478.6 341.7L1479.5 341.1L1480.4 341.8L1481.3 342L1482.2 341.9L1483.1 341.5L1484 341.1L1484.9 341.3L1485.8 341.2L1486.7 341.2L1487.6 341.3L1488.5 341.5L1489.4 341.3L1490.3 341.3L1491.2 341.3L1492.1 341.4L1493 342L1493.9 341.4L1494.8 341.6L1495.7 341.5L1496.6 341.1L1497.5 341.7L1498.4 341.2L1499.3 341.3L1500.2 341.9L1501.1 341.6L1502 341.2L1502.9 341.8L1503.8 341.2L1504.7 341.5L1505.6 341.2L1506.5 341.6L1507.4 341.7L1508.3 341.6L1509.2 341.3L1510.1 341.4L1511 341.3L1511.9 341.4L1512.8 342L1513.7 341.5L1514.6 341.9L1515.5 341.3L1516.4 341.1L1517.3 341.2L1518.2 341.9L1519.1 341.2L1520 341.8L1520.9 341.7L1521.8 341.3L1522.7 341.9L1523.6 342L1524.5 341.2L1525.4 341.8L1526.3 341.8L1527.2 341.7L1527.4 341.5L1527.4 349.6L1527.2 350L1526.3 349.7L1525.4 349.4L1524.5 349.3L1523.6 349.9L1522.7 349.5L1521.8 349.5L1520.9 349.7L1520 349.5L1519.1 349.4L1518.2 349.5L1517.3 349.3L1516.4 349.4L1515.5 349.3L1514.6 349.8L1513.7 349.7L1512.8 349.5L1511.9 349.3L1511 349.7L1510.1 349.3L1509.2 349.5L1508.3 349.7L1507.4 349.4L1506.5 349.5L1505.6 349.7L1504.7 349.9L1503.8 349.8L1502.9 349.5L1502 349.2L1501.1 349.3L1500.2 349.9L1499.3 349.3L1498.4 349.9L1497.5 350.1L1496.6 349.3L1495.7 349.3L1494.8 349.5L1493.9 349.2L1493 350L1492.1 350.1L1491.2 350L1490.3 349.8L1489.4 349.4L1488.5 349.9L1487.6 349.6L1486.7 350L1485.8 349.3L1484.9 350L1484 349.4L1483.1 349.5L1482.2 349.6L1481.3 350L1480.4 349.3L1479.5 349.4L1478.6 349.4L1477.7 350L1476.8 349.3L1475.9 349.8L1475 349.6L1474.1 349.8L1473.2 349.9L1472.3 349.5L1471.4 349.9L1470.5 349.7L1469.6 349.7L1468.7 349.5L1467.8 349.5L1466.9 350L1466 349.7L1465.1 349.5L1464.2 349.8L1463.3 349.5L1462.4 350L1461.5 350.1L1460.6 349.2L1459.7 349.8L1458.8 349.6L1457.9 350L1457 349.9L1456.1 349.7L1455.2 349.9L1454.3 350L1453.4 349.3L1452.5 349.9L1451.6 349.6L1450.7 350.1L1449.8 350L1448.9 349.5L1448 349.9L1447.1 349.9L1446.2 349.6L1445.3 349.3L1444.4 349.9L1443.5 349.5L1442.6 349.5L1441.7 349.3L1440.8 349.6L1439.9 349.9L1439 350.1L1438.1 349.4L1437.2 349.4L1436.3 350.1L1435.4 349.6L1434.5 349.3L1433.6 349.7L1432.7 349.5L1431.8 349.8L1430.9 349.6L1430 349.3L1429.1 349.4L1428.2 349.5L1427.3 349.5L1426.4 349.5L1425.5 349.9L1424.6 349.8L1423.7 349.3L1422.8 349.7L1421.9 349.8L1421 349.9L1420.1 349.5L1419.2 349.8L1418.3 349.9L1417.4 350.1L1416.5 349.7L1415.6 350.1L1414.7 349.9L1413.8 349.6L1412.9 349.6L1412 349.3L1411.1 349.4L1410.2 349.8L1409.3 349.3L1408.4 350.1L1407.5 349.9L1406.6 349.4L1405.7 350L1404.8 350.1L1403.9 349.3L1403 349.3L1402.1 349.7L1401.2 349.4L1400.3 349.9L1399.4 349.5L1398.5 349.6L1397.6 350L1396.7 349.3L1395.8 350.1L1394.9 349.8L1394 349.6L1393.1 349.8L1392.2 350L1391.3 349.4L1390.4 349.7L1389.5 349.8L1388.6 349.6L1387.7 349.9L1386.8 349.9L1385.9 349.8L1385 349.4L1384.1 349.9L1383.2 349.5L1382.3 350.1L1381.4 349.8L1380.5 350L1379.6 349.3L1378.7 349.2L1377.8 349.9L1376.9 349.6L1376 349.4L1375.1 349.7L1374.2 349.9L1373.3 349.7L1372.4 349.9L1371.5 349.8L1370.6 349.5L1369.7 349.5L1368.8 349.4L1367.9 350L1367 349.6L1366.1 349.9L1365.2 349.7L1364.3 349.5L1363.4 349.5L1362.5 349.9L1361.6 349.5L1360.7 349.8L1359.8 349.5L1358.9 349.7L1358 350L1357.1 349.9L1356.2 349.6L1355.3 350L1354.4 349.3L1353.5 349.8L1352.6 349.3L1351.7 349.3L1350.8 350L1349.9 349.5L1349 349.8L1348.1 349.5L1347.2 349.4L1346.3 349.4L1345.4 349.4L1344.5 350.1L1343.6 349.6L1342.7 349.4L1341.8 349.8L1340.9 349.2L1340 349.3L1339.1 349.4L1338.2 350L1337.3 349.3L1336.4 349.3L1335.5 349.4L1334.6 349.5L1333.7 350L1332.8 349.8L1331.9 349.9L1331 349.6L1330.1 349.7L1329.2 349.3L1328.3 349.8L1327.4 349.6L1326.5 350L1325.6 350L1324.7 349.2L1323.8 349.3L1322.9 350L1322 350L1321.1 349.6L1320.2 349.3L1319.3 349.3L1318.4 349.9L1317.5 349.4L1316.6 350.1L1315.7 349.9L1314.8 349.4L1313.9 349.3L1313 349.5L1312.1 349.9L1311.2 349.7L1310.3 350L1309.4 349.6L1308.5 349.9L1307.6 349.9L1306.7 349.4L1305.8 349.9L1304.9 349.3L1304 349.6L1303.1 349.9L1302.2 349.4L1301.3 349.3L1300.4 350L1299.5 349.9L1298.6 349.5L1297.7 349.2L1296.8 349.7L1295.9 350.1L1295 349.7L1294.1 350.1L1293.2 349.7L1292.3 349.7L1291.4 350L1290.5 349.3L1289.6 349.4L1288.7 349.8L1287.8 350L1286.9 350.1L1286 349.5L1285.1 349.3L1284.2 349.5L1283.3 349.6L1282.4 349.7L1281.5 349.2L1280.6 349.7L1279.7 349.5L1278.8 349.8L1277.9 349.8L1277 349.4L1276.1 349.8L1275.2 349.2L1274.3 349.5L1273.4 350L1272.5 349.5L1271.6 349.3L1270.7 349.7L1269.8 349.2L1268.9 349.6L1268 349.5L1267.1 349.3L1266.2 349.4L1265.3 349.5L1264.4 349.6L1263.5 349.3L1262.6 350.1L1261.7 349.3L1260.8 349.4L1259.9 349.9L1259 349.7L1258.1 349.9L1257.2 349.5L1256.3 349.5L1255.4 349.8L1254.5 349.6L1253.6 349.5L1252.7 349.2L1251.8 349.7L1250.9 349.6L1250 349.8L1249.1 349.7L1248.2 349.3L1247.3 349.6L1246.4 350.1L1245.5 349.9L1244.6 349.7L1243.7 349.9L1242.8 350.1L1241.9 350L1241 349.7L1240.1 349.4L1239.2 350.1L1238.3 349.8L1237.4 349.3L1236.5 349.6L1235.6 350L1234.7 349.7L1233.8 349.5L1232.9 350L1232 349.4L1231.1 349.5L1230.2 349.3L1229.3 350.1L1228.4 349.6L1227.5 349.4L1226.6 349.2L1225.7 349.4L1224.8 349.5L1223.9 349.8L1223 349.2L1222.1 349.5L1221.2 350L1220.3 349.5L1219.4 349.6L1218.5 349.2L1217.6 349.5L1216.7 349.8L1215.8 350L1214.9 350.1L1214 349.4L1213.1 349.6L1212.2 349.6L1211.3 350L1210.4 349.7L1209.5 350.1L1208.6 349.2L1207.7 349.3L1206.8 349.9L1205.9 349.8L1205 349.8L1204.1 349.7L1203.2 349.5L1202.3 349.5L1201.4 349.9L1200.5 349.6L1199.6 349.6L1198.7 349.5L1197.8 349.2L1196.9 349.8L1196 349.3L1195.1 349.7L1194.2 349.3L1193.3 350.1L1192.4 349.5L1191.5 350L1190.6 350.1L1189.7 349.7L1188.8 349.8L1187.9 349.9L1187 349.8L1186.1 349.3L1185.2 349.8L1184.3 349.9L1183.4 349.5L1182.5 349.5L1181.6 349.9L1180.7 349.5L1179.8 349.8L1178.9 349.7L1178 349.7L1177.1 349.9L1176.2 349.8L1175.3 349.7L1174.4 349.5L1173.5 349.9L1172.6 349.6L1171.7 349.6L1170.8 349.9L1169.9 349.9L1169 350L1168.1 349.7L1167.2 349.7L1166.3 349.6L1165.4 349.9L1164.5 349.3L1163.6 349.8L1162.7 349.3L1161.8 349.2L1160.9 349.6L1160 350L1159.1 350.1L1158.2 349.3L1157.3 349.4L1156.4 349.7L1155.5 349.4L1154.6 349.5L1153.7 349.9L1152.8 349.6L1151.9 349.5L1151 349.5L1150.1 349.2L1149.2 349.9L1148.3 349.6L1147.4 349.4L1146.5 349.7L1145.6 349.8L1144.7 349.9L1143.8 349.3L1142.9 350L1142 349.6L1141.1 349.3L1140.2 349.5L1139.3 349.9L1138.4 349.9L1137.5 350L1136.6 349.7L1135.7 349.3L1134.8 349.6L1133.9 349.3L1133 350.1L1132.1 350L1131.2 349.7L1130.3 349.3L1129.4 349.5L1128.5 350L1127.6 350L1126.7 349.8L1125.8 350.1L1124.9 349.8L1124 349.3L1123.1 349.2L1122.2 349.2L1121.3 350.1L1120.4 349.7L1119.5 349.3L1118.6 349.2L1117.7 349.6L1116.8 349.3L1115.9 349.5L1115 349.7L1114.1 349.7L1113.2 349.4L1112.3 349.3L1111.4 350L1110.5 349.7L1109.6 350L1108.7 349.4L1107.8 349.8L1106.9 349.9L1106 349.8L1105.1 349.7L1104.2 349.9L1103.3 350L1102.4 349.8L1101.5 349.5L1100.6 349.8L1099.7 349.9L1098.8 349.7L1097.9 349.3L1097 349.8L1096.1 350.1L1095.2 349.2L1094.3 349.3L1093.4 349.8L1092.5 350L1091.6 349.8L1090.7 349.5L1089.8 349.2L1088.9 349.2L1088 349.4L1087.1 349.2L1086.2 349.6L1085.3 349.3L1084.4 349.3L1083.5 349.5L1082.6 349.9L1081.7 349.8L1080.8 349.5L1079.9 349.9L1079 349.8Z" fill="#e8a030" fill-opacity="1"/><g opacity="1"><path d="M470.9 389.6L470.9 324.5L471.8 324.7L472.7 329.9L473.6 329.9L474.5 322.1L475.4 323.1L476.3 322L477.2 330.7L478.1 340.5L479 333.6L479.9 325.6L480.8 326.5L481.7 326L482.6 322.1L483.5 323.7L484.4 323L485.3 325.4L485.6 325.3L485.6 389.6L485.6 388.8L484.5 389.3L483.4 389.8L482.3 390.2L481.2 388.8L480.1 388.5L479 390.2L477.9 388.9L476.8 389.6L475.7 390.1L474.6 389.8L473.5 388.9L472.4 388.8L471.3 390.3Z" fill="#d6cd40" stroke="#d6cd40" stroke-width="0.8" stroke-linejoin="round"/><path d="M1053.3 388.5L1053.3 340.7L1054.2 341.7L1055.1 340.8L1056 341L1056.6 341.5L1056.6 388.5L1056.6 387.9L1055.5 389L1054.4 387.5L1053.3 388.4Z" fill="#d6cd40" stroke="#d6cd40" stroke-width="0.8" stroke-linejoin="round"/><path d="M368.8 393.7V318" stroke="#efe343" stroke-width="2.2" stroke-opacity="0.95"/><path d="M370.4 388V180" stroke="#efe343" stroke-width="2.1" stroke-opacity="0.68"/><path d="M380.3 387.5V329" stroke="#efe343" stroke-width="2.0" stroke-opacity="0.75"/><path d="M941 387V332.1" stroke="#efe343" stroke-width="1.6" stroke-opacity="0.8"/><path d="M951.4 387V334.2" stroke="#efe343" stroke-width="1.6" stroke-opacity="0.8"/><path d="M1085.9 382.8V318" stroke="#efe343" stroke-width="1.7" stroke-opacity="0.85"/><path d="M1099.2 359.3V145" stroke="#efe343" stroke-width="2.0" stroke-opacity="0.9"/><path d="M1099.2 359.3V237.4" stroke="#efe343" stroke-width="2.9" stroke-opacity="0.95"/><path d="M1107 359.3V164.9" stroke="#efe343" stroke-width="2.0" stroke-opacity="0.9"/><path d="M1107 359.3V249.7" stroke="#efe343" stroke-width="2.9" stroke-opacity="0.95"/><path d="M31.7 388L370.1 388L370.5 377.6L371 366.1L371.6 372.3L372.3 376.5L373 377.8L374.9 377.3L376.9 376.8L378.9 376.8L380 376L380.6 367.9L381.9 368L383.9 367.9L385.9 368L387.9 367.9L389.9 368L391.9 368.2L393.9 368.3L395.9 368L397.9 368.3L399.9 368.3L401.9 368L403.9 368.3L406 368.2L408 368.4L410 368.3L412 368.6L414 368.4L416 368.3L418 368.5L420 368.5L422 368.5L424 368.8L426 368.6L428 368.7L430 369L432 369.3L434 369.2L436 369.6L438 369.7L440 369.8L442 370.1L444 370.3L446 370.7L448.1 370.7L450.1 371.1L452.2 371.1L454.3 371.4L456.4 371.9L458.4 372.1L460.5 372.3L462.6 372.2L464.7 372.6L466.8 372.8L468.8 373.1L470.9 373.3M485.9 375.4L487.5 376.1L489.1 376.2L490.7 376.7L492.3 376.7L493.9 376.8L495.6 377L497.2 376.7L498.8 376.7L500.4 376.5L502 375.9L503.6 375.7L504 385.6L505.6 385.9L507.6 385.7L509.6 385.5L511.6 386L513.6 386.1L515.6 385.3L517.6 385.8L519.7 385.2L521.7 385.3L523.7 385.8L525.7 385.7L527.7 385.6L529.7 385.5L531.7 385.6L533.7 385.6L535.7 385.5L537.7 385.2L539.7 385.6L541.7 385.7L543.8 385.4L545.8 385.9L547.8 385.8L549.8 385.2L551.8 385.6L553.8 385.6L555.8 386.1L557.8 385.7L559.8 385.6L561.8 386.1L563.8 385.5L565.8 385.5L567.8 386.1L569.9 385.5L571.9 385.7L573.9 385.5L575.9 385.8L577.9 385.5L579.9 385.4L581.9 386.1L583.9 386.1L585.9 385.5L587.9 385.2L589.9 385.9L591.9 385.7L593.9 385.6L596 385.8L598 385.8L600 385.8L602 385.8L604 385.6L606 385.8L608 385.8L610 385.4L612 386.1L614 385.6L616 385.4L618 385.8L620.1 385.9L622.1 385.4L624.1 385.9L626.1 385.9L628.1 385.7L630.1 385.5L632.1 386L634.1 385.8L636.1 385.8L638.1 385.3L640.1 385.7L642.1 385.3L644.1 386L646.2 385.8L648.2 385.5L650.2 385.3L652.2 385.7L654.2 385.9L656.2 386L658.2 385.6L660.2 385.9L662.2 385.4L664.2 385.3L666.2 385.9L668.2 385.9L670.3 385.4L672.3 385.5L674.3 385.4L676.3 385.8L678.3 386L680.3 385.8L682.3 385.4L684.3 385.9L686.3 385.8L688.3 385.7L690.3 385.7L692.3 385.7L694.3 385.3L696.4 386L698.4 386.1L700.4 385.2L702.4 385.3L704.4 385.2L706.4 385.7L708.4 385.2L710.4 385.2L712.4 385.9L714.4 385.4L716.4 385.3L718.4 385.5L720.5 385.6L722.5 385.8L724.5 385.8L726.5 385.9L728.5 386.1L730.5 385.6L732.5 385.8L734.5 385.4L736.5 386.1L738.5 385.3L740.5 385.5L742.5 385.3L744.5 385.3L746.6 385.3L748.6 385.6L750.6 386.1L752.6 385.4L754.6 386L756.6 385.8L758.6 385.5L760.6 385.6L762.6 385.7L764.6 385.2L766.6 385.5L768.6 385.8L770.6 385.9L772.7 385.3L774.7 385.7L776.7 385.4L778.7 385.8L780.7 385.9L782.7 385.6L784.7 385.4L786.7 386L788.7 385.4L790.7 385.3L792.7 385.4L794.7 385.3L796.8 386.1L798.8 385.5L800.8 385.3L802.8 386.1L804.8 385.9L806.8 385.9L808.8 385.6L810.8 385.7L812.8 385.7L814.8 385.4L816.8 386.1L818.8 386.1L820.8 386L822.9 386L824.9 386.1L826.9 385.2L828.9 385.3L830.9 386L832.9 385.6L834.9 385.8L836.9 385.8L838.9 385.8L840.9 385.5L842.9 385.6L844.9 385.8L847 385.9L849 385.8L851 386L853 385.6L855 385.4L857 385.8L859 386L859 384L859.8 383.4L860.6 382.7L861.4 382.2L862.2 383.4L863 382.1L863.8 382.7L864.6 383.3L865.4 383.4L866.2 383L867 382.4L867.8 383.3L868.6 382.4L869.4 383.2L870.2 383.8L871 382.9L871.8 382.4L872.6 384.4L873.4 383.3L874.2 383.3L875 381.8L875.8 381.7L876.6 383.4L877.4 381.8L878.2 382.1L879 383.8L880 385.7L882 386L884 385.4L886 385.5L888.1 385.3L890.1 385.4L892.1 385.5L894.1 385.4L896.1 385.6L898.1 386L900.2 385.6L902.2 386.1L904.2 386L906.2 385.4L908.2 386.1L910.2 386L912.3 386L914.3 385.3L916.3 386L918.3 386.1L920.3 385.3L922.4 386L924.4 385.3L926.4 385.5L928.4 385.3L930.4 385.2L932.4 385.6L934.5 385.4L936.5 386.1L938.5 385.4L940.5 385.6L941.2 377.6L941.8 375.5L943 377.3L944 377.7L945.5 377.9L947 377.6L948.4 377.4L949.9 377.7L950.8 376.5L951.7 369.2L951.5 368.2L953.6 368.1L955.6 368L957.7 368.3L959.8 368.3L961.8 368.3L963.9 368.2L965.9 368.1L968 368.3L970.1 368.3L972.1 368.4L974.2 368.4L976.2 368.4L978.3 368.5L980.4 368.4L982.4 368.2L984.5 368.5L986.6 368.4L988.6 368.6L990.7 368.4L992.8 368.4L994.8 368.5L996.9 368.6L998.9 368.6L1001 368.6L1003 368.4L1005.1 368.9L1007.1 369L1009.2 368.9L1011.2 368.9L1013.3 369.2L1015.4 369.4L1017.4 369.4L1019.5 369.7L1021.6 369.8L1023.6 369.9L1025.7 369.9L1027.8 370.1L1029.8 370.3L1031.9 370.2L1033.9 370.2L1036 370.6L1038.1 370.6L1040.1 370.8L1042.2 370.7L1044.2 371L1046.3 371.2L1048.4 371.4L1050.4 371.6L1052.5 371.5M1057.5 372.3L1059.5 372.4L1061.5 372.2L1063.5 372.2L1065.5 372.4L1067.5 372.4L1069.5 372.3L1071.5 372.3L1073.6 372.5L1075.6 372.4L1077.6 372.3L1079.6 372.5L1081.6 372.7L1083.6 372.7L1085.6 372.5L1086.3 361.4L1088 361L1089.4 360.7L1090.7 360.7L1092.1 361L1093.4 361L1094.8 360.9L1096.1 360.8L1097.5 360.4L1098.6 347.2L1099.5 345.4L1100.1 345.2L1100.8 347.5L1101.4 345.2L1102 347.2L1102.6 346.8L1103.3 345.6L1103.9 347.9L1104.5 347.8L1105.1 345.1L1105.8 347L1106.4 346.7L1107.6 345.4" fill="none" stroke="#efe343" stroke-width="2.6" stroke-linejoin="round"/>
</g><path d="M1107.6 341.1L1108.5 341.6L1109.4 341.2L1110.3 341.5L1111.2 340.8L1112.1 341.1L1113 341.4L1113.9 341.5L1114.8 340.8L1115.7 340.8L1116.6 340.9L1117.5 341.4L1118.4 341L1119.3 341.4L1120.2 340.8L1121.1 341.1L1122 341.2L1122.9 341L1123.8 341.1L1124.7 341L1125.6 341.5L1126.5 341L1127.4 340.8L1128.3 341.3L1129.2 341.1L1130.1 341L1131 341.4L1131.9 341.6L1132.8 340.9L1133.7 341L1134.6 341.4L1135.5 340.8L1136.4 341.2L1137.3 340.9L1138.2 341.3L1139.1 341.1L1140 341.3L1140.9 341.5L1141.8 341.6L1142.7 340.9L1143.6 341.5L1144.5 341.3L1145.4 340.9L1146.3 341.1L1147.2 341.3L1148.1 341.2L1149 341.5L1149.9 340.9L1150.8 340.9L1151.7 340.8L1152.6 341.1L1153.5 341.1L1154.4 341L1155.3 340.8L1156.2 341.1L1157.1 341.7L1158 341L1158.9 341.2L1159.8 341.5L1160.7 341.6L1161.6 341L1162.5 341.1L1163.4 340.8L1164.3 340.9L1165.2 341.6L1166.1 341.4L1167 341.1L1167.9 341.4L1168.8 341L1169.7 340.8L1170.6 340.8L1171.5 341L1172.4 340.9L1173.3 340.8L1174.2 340.9L1175.1 341.6L1176 341.6L1176.9 341.5L1177.8 341L1178.7 341.3L1179.6 341.4L1180.5 340.9L1181.4 341.5L1182.3 341L1183.2 341.3L1184.1 341.1L1185 341.7L1185.9 340.9L1186.8 341.2L1187.7 341.5L1188.6 341.3L1189.5 341.6L1190.4 341.5L1191.3 341.6L1192.2 341.2L1193.1 341L1194 341.3L1194.9 341.6L1195.8 341.4L1196.7 341.2L1197.6 341.1L1198.5 341.5L1199.4 341L1200.3 340.9L1201.2 340.8L1202.1 341.4L1203 340.9L1203.9 341.3L1204.8 341L1205.7 341.1L1206.6 341.6L1207.5 341.5L1208.4 341.6L1209.3 340.8L1210.2 340.7L1211.1 340.9L1212 340.8L1212.9 341.4L1213.8 340.8L1214.7 341.4L1215.6 341.5L1216.5 341.3L1217.4 340.8L1218.3 341L1219.2 340.9L1220.1 340.8L1221 341.3L1221.9 340.9L1222.8 341.4L1223.7 341L1224.6 341L1225.5 341.2L1226.4 341L1227.3 341.2L1228.2 341L1229.1 341.4L1230 341.1L1230.9 340.8L1231.8 340.8L1232.7 341.3L1233.6 341.6L1234.5 340.8L1235.4 341.1L1236.3 341.6L1237.2 341.4L1238.1 341.5L1239 341.1L1239.9 341.4L1240.8 341.4L1241.7 341.3L1242.6 341.1L1243.5 341.2L1244.4 341.5L1245.3 340.9L1246.2 341.6L1247.1 341.5L1248 341.6L1248.9 341.4L1249.8 341.1L1250.7 340.9L1251.6 341.3L1252.5 341.2L1253.4 340.9L1254.3 340.9L1255.2 341.1L1256.1 341L1257 341.3L1257.9 341.6L1258.8 341L1259.7 341L1260.6 341.5L1261.5 340.7L1262.4 341.2L1263.3 341.4L1264.2 340.8L1265.1 340.8L1266 341.1L1266.9 341.2L1267.8 340.8L1268.7 340.8L1269.6 340.9L1270.5 340.7L1271.4 341.4L1272.3 341.5L1273.2 341L1274.1 341.2L1275 341.6L1275.9 341.4L1276.8 341.3L1277.7 341L1278.6 341.6L1279.5 341.3L1280.4 341.5L1281.3 341L1282.2 340.7L1283.1 341.3L1284 341.4L1284.9 341.2L1285.8 341.3L1286.7 341.4L1287.6 340.8L1288.5 341.4L1289.4 340.9L1290.3 341.5L1291.2 341.2L1292.1 341.6L1293 340.9L1293.9 340.7L1294.8 340.7L1295.7 341.5L1296.6 341.2L1297.5 341.6L1298.4 341.6L1299.3 341.4L1300.2 341.3L1301.1 341.6L1302 341.1L1302.9 340.8L1303.8 341.4L1304.7 340.9L1305.6 341.2L1306.5 341.1L1307.4 341.5L1308.3 341L1309.2 340.8L1310.1 341L1311 340.9L1311.9 341.3L1312.8 341.5L1313.7 341L1314.6 341.1L1315.5 341.3L1316.4 340.9L1317.3 340.8L1318.2 341.4L1319.1 341.3L1320 340.9L1320.9 341.1L1321.8 341.1L1322.7 341.2L1323.6 341L1324.5 341.6L1325.4 341.3L1326.3 340.8L1327.2 341L1328.1 340.8L1329 341.3L1329.9 341.4L1330.8 340.8L1331.7 341.4L1332.6 341.4L1333.5 341.4L1334.4 341.6L1335.3 341.5L1336.2 341.2L1337.1 340.9L1338 340.9L1338.9 341.4L1339.8 341.6L1340.7 341.2L1341.6 341.1L1342.5 341.4L1343.4 341.5L1344.3 341.5L1345.2 341L1346.1 341.5L1347 340.9L1347.9 341.5L1348.8 340.8L1349.7 340.8L1350.6 341.3L1351.5 341.3L1352.4 341.4L1353.3 341.5L1354.2 341.3L1355.1 341.6L1356 340.8L1356.9 340.7L1357.8 341.3L1358.7 341.2L1359.6 341.4L1360.5 341.3L1361.4 340.9L1362.3 341.2L1363.2 341.2L1364.1 340.9L1365 341.1L1365.9 340.9L1366.8 340.7L1367.7 341.5L1368.6 341.5L1369.5 340.7L1370.4 340.8L1371.3 341.6L1372.2 340.9L1373.1 341L1374 340.9L1374.9 341.1L1375.8 341.5L1376.7 341.4L1377.6 341.3L1378.5 341.3L1379.4 340.7L1380.3 340.8L1381.2 341.4L1382.1 341.4L1383 341.2L1383.9 341.3L1384.8 341.4L1385.7 341.2L1386.6 341.2L1387.5 340.7L1388.4 341.2L1389.3 341.6L1390.2 340.9L1391.1 341.6L1392 341.3L1392.9 341.3L1393.8 341.1L1394.7 341.2L1395.6 341L1396.5 341.4L1397.4 341.3L1398.3 341L1399.2 341.1L1400.1 341.4L1401 341.1L1401.9 341.6L1402.8 341.4L1403.7 341.1L1404.6 341.2L1405.5 340.9L1406.4 340.8L1407.3 341L1408.2 340.8L1409.1 341.2L1410 341.4L1410.9 340.9L1411.8 341.6L1412.7 341.3L1413.6 340.9L1414.5 341.4L1415.4 341.2L1416.3 341.1L1417.2 341.2L1418.1 340.7L1419 341.6L1419.9 340.9L1420.8 341.6L1421.7 341.2L1422.6 340.8L1423.5 341.3L1424.4 341.1L1425.3 341.5L1426.2 341.6L1427.1 341.6L1428 341.2L1428.9 341.6L1429.8 341.2L1430.7 341.1L1431.6 340.7L1432.5 341.2L1433.4 341.4L1434.3 341.5L1435.2 341.1L1436.1 340.9L1437 340.8L1437.9 341.5L1438.8 341.2L1439.7 341.5L1440.6 341.5L1441.5 340.8L1442.4 340.8L1443.3 341.5L1444.2 341.6L1445.1 341.3L1446 340.9L1446.9 341.3L1447.8 341.5L1448.7 341.4L1449.6 341.3L1450.5 341.4L1451.4 341.1L1452.3 341L1453.2 341L1454.1 341.5L1455 341.3L1455.9 341.1L1456.8 341.2L1457.7 340.9L1458.6 341.2L1459.5 341.4L1460.4 341L1461.3 340.9L1462.2 341.3L1463.1 341.2L1464 341L1464.9 341L1465.8 341.6L1466.7 340.9L1467.6 341.1L1468.5 341.2L1469.4 341.1L1470.3 341.5L1471.2 340.9L1472.1 341.4L1473 340.8L1473.9 340.7L1474.8 341L1475.7 341.6L1476.6 341L1477.5 341.2L1478.4 341.4L1479.3 341.1L1480.2 341.6L1481.1 341.4L1482 341.5L1482.9 341.5L1483.8 341.1L1484.7 341.6L1485.6 341.5L1486.5 341.5L1487.4 341.1L1488.3 340.8L1489.2 341.3L1490.1 341.4L1491 340.8L1491.9 340.8L1492.8 341.2L1493.7 340.7L1494.6 341.1L1495.5 341.5L1496.4 340.7L1497.3 341L1498.2 341.6L1499.1 340.9L1500 341.2L1500.9 341.3L1501.8 341.5L1502.7 341.4L1503.6 341.3L1504.5 341L1505.4 341L1506.3 340.9L1507.2 341.1L1508.1 341.3L1509 341.5L1509.9 341.5L1510.8 341.2L1511.7 340.9L1512.6 341.3L1513.5 341.1L1514.4 340.8L1515.3 341.5L1516.2 341L1517.1 341L1518 341.1L1518.9 341.1L1519.8 341.5L1520.7 340.8L1521.6 341.6L1522.5 340.9L1523.4 341.2L1524.3 341.1L1525.2 341L1526.1 341.4L1527 341.5L1527.4 341.2L1527.4 349.2L1527 349.6L1526.1 349L1525.2 349.6L1524.3 349.4L1523.4 348.7L1522.5 349.3L1521.6 349.6L1520.7 349.5L1519.8 349.1L1518.9 349.5L1518 349L1517.1 349.5L1516.2 349.2L1515.3 348.7L1514.4 349.5L1513.5 348.9L1512.6 349.6L1511.7 349L1510.8 348.8L1509.9 348.9L1509 349L1508.1 349.6L1507.2 349.1L1506.3 349.4L1505.4 349.2L1504.5 349.2L1503.6 348.8L1502.7 349.2L1501.8 349L1500.9 348.9L1500 348.7L1499.1 349.4L1498.2 349L1497.3 348.8L1496.4 348.9L1495.5 349.4L1494.6 349.2L1493.7 349.5L1492.8 349.4L1491.9 349.2L1491 349.5L1490.1 349.4L1489.2 349.6L1488.3 349.2L1487.4 348.8L1486.5 349.6L1485.6 349.2L1484.7 349.2L1483.8 349.5L1482.9 349.3L1482 349.3L1481.1 349L1480.2 349.1L1479.3 349.3L1478.4 349L1477.5 349.1L1476.6 349.3L1475.7 349L1474.8 349.4L1473.9 348.9L1473 349.1L1472.1 348.8L1471.2 349.1L1470.3 349.6L1469.4 348.9L1468.5 349.2L1467.6 348.8L1466.7 349.2L1465.8 349.2L1464.9 349.1L1464 349.3L1463.1 349.5L1462.2 348.7L1461.3 348.7L1460.4 349.4L1459.5 348.8L1458.6 349.1L1457.7 348.8L1456.8 349.6L1455.9 349.1L1455 349.1L1454.1 348.9L1453.2 349.1L1452.3 349.4L1451.4 349.4L1450.5 349.2L1449.6 349.5L1448.7 349L1447.8 349.4L1446.9 349.3L1446 349.6L1445.1 348.8L1444.2 349.2L1443.3 349.5L1442.4 349.3L1441.5 349.5L1440.6 348.9L1439.7 348.8L1438.8 349.4L1437.9 349.6L1437 349L1436.1 348.8L1435.2 349.3L1434.3 349.1L1433.4 348.8L1432.5 349.5L1431.6 349L1430.7 349.4L1429.8 348.8L1428.9 349.4L1428 349.1L1427.1 348.8L1426.2 349L1425.3 349.3L1424.4 348.8L1423.5 349.3L1422.6 348.9L1421.7 349.3L1420.8 349.6L1419.9 348.7L1419 349.2L1418.1 349L1417.2 349.6L1416.3 349L1415.4 349.2L1414.5 349.3L1413.6 349.5L1412.7 349.6L1411.8 349.6L1410.9 349.1L1410 349.5L1409.1 348.8L1408.2 349.3L1407.3 349.5L1406.4 349.2L1405.5 348.9L1404.6 349L1403.7 348.8L1402.8 349.6L1401.9 349.3L1401 349.5L1400.1 349.3L1399.2 349.5L1398.3 348.8L1397.4 349.3L1396.5 349.2L1395.6 349.3L1394.7 348.8L1393.8 348.8L1392.9 349.4L1392 348.7L1391.1 348.8L1390.2 348.9L1389.3 349.2L1388.4 349.1L1387.5 349.2L1386.6 348.8L1385.7 349.2L1384.8 348.7L1383.9 349L1383 349L1382.1 349.5L1381.2 348.7L1380.3 348.9L1379.4 348.8L1378.5 349.1L1377.6 349.3L1376.7 349.2L1375.8 349.1L1374.9 349.2L1374 349.6L1373.1 349.2L1372.2 348.7L1371.3 348.8L1370.4 349.5L1369.5 349.3L1368.6 349.6L1367.7 349.4L1366.8 348.9L1365.9 349.5L1365 348.8L1364.1 349.5L1363.2 349.1L1362.3 349.1L1361.4 349.1L1360.5 348.9L1359.6 349.6L1358.7 349L1357.8 348.8L1356.9 349.4L1356 348.7L1355.1 349.5L1354.2 348.8L1353.3 349.5L1352.4 349.5L1351.5 348.7L1350.6 349.5L1349.7 349.1L1348.8 349.6L1347.9 348.9L1347 349.5L1346.1 349.6L1345.2 349L1344.3 348.7L1343.4 348.8L1342.5 348.7L1341.6 349.6L1340.7 349.4L1339.8 349.4L1338.9 348.7L1338 349.6L1337.1 349.1L1336.2 348.9L1335.3 349.6L1334.4 349.4L1333.5 348.7L1332.6 349.5L1331.7 349.3L1330.8 348.8L1329.9 349.4L1329 348.9L1328.1 349.5L1327.2 349.5L1326.3 348.7L1325.4 349.2L1324.5 349L1323.6 348.8L1322.7 349.4L1321.8 349.1L1320.9 349.6L1320 348.8L1319.1 348.8L1318.2 349.2L1317.3 349.5L1316.4 349.2L1315.5 349.2L1314.6 349.3L1313.7 348.7L1312.8 349.5L1311.9 349.2L1311 349.1L1310.1 348.8L1309.2 349.2L1308.3 348.8L1307.4 349.6L1306.5 349.4L1305.6 348.9L1304.7 348.9L1303.8 349.5L1302.9 348.9L1302 349L1301.1 349.2L1300.2 349.4L1299.3 348.9L1298.4 349.4L1297.5 349.1L1296.6 349.3L1295.7 349.6L1294.8 349.6L1293.9 348.9L1293 349.2L1292.1 349.5L1291.2 349.5L1290.3 349.1L1289.4 349.6L1288.5 349.4L1287.6 348.9L1286.7 349.2L1285.8 348.8L1284.9 349.1L1284 349.2L1283.1 349.5L1282.2 348.8L1281.3 348.7L1280.4 348.9L1279.5 349.6L1278.6 349.4L1277.7 349.4L1276.8 349L1275.9 349.2L1275 348.9L1274.1 349L1273.2 349.4L1272.3 349.6L1271.4 348.8L1270.5 348.8L1269.6 349.3L1268.7 349.2L1267.8 348.8L1266.9 349.3L1266 348.8L1265.1 348.7L1264.2 349L1263.3 349.5L1262.4 349.6L1261.5 349.3L1260.6 349.3L1259.7 349.1L1258.8 349.3L1257.9 349.1L1257 349.2L1256.1 349.6L1255.2 349.2L1254.3 349.5L1253.4 349.1L1252.5 349.5L1251.6 349.1L1250.7 348.8L1249.8 349L1248.9 348.9L1248 349.2L1247.1 348.8L1246.2 348.7L1245.3 349.5L1244.4 349.6L1243.5 349.5L1242.6 348.9L1241.7 348.9L1240.8 349.1L1239.9 348.7L1239 349.6L1238.1 349L1237.2 349.6L1236.3 349L1235.4 349.5L1234.5 349.5L1233.6 349.3L1232.7 349.3L1231.8 349L1230.9 349.2L1230 348.8L1229.1 348.9L1228.2 349.6L1227.3 348.9L1226.4 349.6L1225.5 349.5L1224.6 349.3L1223.7 349.1L1222.8 349.5L1221.9 349.2L1221 349.4L1220.1 349.3L1219.2 349.1L1218.3 349L1217.4 349.5L1216.5 349L1215.6 349.3L1214.7 348.8L1213.8 349.6L1212.9 349.1L1212 349.6L1211.1 348.8L1210.2 349.2L1209.3 349.5L1208.4 349L1207.5 349.6L1206.6 349.6L1205.7 349.6L1204.8 348.7L1203.9 349.6L1203 349.1L1202.1 349.4L1201.2 349.4L1200.3 349.2L1199.4 349.4L1198.5 349.6L1197.6 349.3L1196.7 349.5L1195.8 349.6L1194.9 348.7L1194 349.3L1193.1 349.6L1192.2 349.3L1191.3 349.6L1190.4 349.2L1189.5 349.5L1188.6 349.5L1187.7 349.5L1186.8 349.5L1185.9 349.5L1185 349.5L1184.1 349.4L1183.2 349.2L1182.3 349.3L1181.4 348.8L1180.5 349.3L1179.6 349.2L1178.7 349L1177.8 349.1L1176.9 349.2L1176 349.5L1175.1 349.6L1174.2 349.2L1173.3 349.2L1172.4 348.8L1171.5 349.3L1170.6 349L1169.7 349.1L1168.8 349.5L1167.9 348.8L1167 348.8L1166.1 349.6L1165.2 349.3L1164.3 349.1L1163.4 349.5L1162.5 348.7L1161.6 349.2L1160.7 349.2L1159.8 349.2L1158.9 349.2L1158 349.2L1157.1 348.9L1156.2 349L1155.3 349.2L1154.4 349.4L1153.5 348.7L1152.6 349.1L1151.7 349.3L1150.8 348.8L1149.9 349.6L1149 349.4L1148.1 349.1L1147.2 349.5L1146.3 349.5L1145.4 348.9L1144.5 348.9L1143.6 349.5L1142.7 349L1141.8 349.5L1140.9 349.4L1140 348.9L1139.1 348.9L1138.2 349.3L1137.3 349.3L1136.4 349.4L1135.5 349.6L1134.6 349.3L1133.7 349.3L1132.8 349.1L1131.9 349L1131 349.5L1130.1 349.2L1129.2 349.1L1128.3 349L1127.4 349.5L1126.5 349.5L1125.6 348.8L1124.7 349.1L1123.8 349.5L1122.9 349L1122 349.3L1121.1 349.5L1120.2 349L1119.3 348.9L1118.4 348.9L1117.5 349L1116.6 348.9L1115.7 349.3L1114.8 349.6L1113.9 348.8L1113 349L1112.1 349.5L1111.2 349.3L1110.3 349.1L1109.4 349.2L1108.5 349.3L1107.6 349Z" fill="#ece04a" fill-opacity="1"/><g opacity="0.89"><path d="M411.4 389.6L411.4 325.8L412.3 324L413.2 324L414.1 323L415 325.4L415.9 344.4L416.8 365L417.7 345.8L418.6 324.6L419.5 323.2L420.4 329.7L421.3 331.3L422.2 324.6L423.1 334.5L424 333.6L424.9 323.6L425.8 325.4L426.7 326.6L427.6 324.8L428 326.3L428 389.6L428 389.1L426.9 389.1L425.8 389.7L424.7 389.5L423.6 389.4L422.5 388.9L421.4 389.4L420.3 389.6L419.2 389.5L418.1 390.3L417 390.3L415.9 389.1L414.8 388.6L413.7 389.3L412.6 389.6L411.5 390Z" fill="#92dc8a" stroke="#92dc8a" stroke-width="0.8" stroke-linejoin="round"/><path d="M984 388.5L984 324.9L984.9 326L985.8 325.2L986.7 327.6L987.6 326.2L988.5 327.3L989.4 327.3L990.3 326.7L991.2 324L992.1 326L993 326L993.9 325L994.8 326.8L995.7 327.9L996.6 325.4L997.5 325.6L998.4 324.9L999.3 325.9L1000 326.9L1000 388.5L1000 388.1L998.9 388L997.8 388.9L996.7 388.4L995.6 388.4L994.5 388.9L993.4 388.6L992.3 388.3L991.2 387.6L990.1 387.6L989 388.8L987.9 388.1L986.8 389.2L985.7 389.2L984.6 388.4Z" fill="#92dc8a" stroke="#92dc8a" stroke-width="0.8" stroke-linejoin="round"/><path d="M314.7 388V178" stroke="#a8e294" stroke-width="2.1" stroke-opacity="0.68"/><path d="M324.6 387.5V323.2" stroke="#a8e294" stroke-width="2.0" stroke-opacity="0.75"/><path d="M884 387V322.7" stroke="#a8e294" stroke-width="1.6" stroke-opacity="0.8"/><path d="M892.6 387V326.9" stroke="#a8e294" stroke-width="1.6" stroke-opacity="0.8"/><path d="M1028.9 367.1V330.5" stroke="#a8e294" stroke-width="1.7" stroke-opacity="0.85"/><path d="M1041.2 359.3V140.9" stroke="#a8e294" stroke-width="2.0" stroke-opacity="0.9"/><path d="M1041.2 359.3V234.8" stroke="#a8e294" stroke-width="2.9" stroke-opacity="0.95"/><path d="M1051.7 359.3V157.1" stroke="#a8e294" stroke-width="2.0" stroke-opacity="0.9"/><path d="M1051.7 359.3V244.8" stroke="#a8e294" stroke-width="2.9" stroke-opacity="0.95"/><path d="M31.7 388L314.4 388L314.8 377.6L315.3 366.1L315.9 372.3L316.6 376.5L317.3 377.8L319.2 377.3L321.2 376.8L323.2 376.8L324.3 376L324.9 369.5L326.2 369.6L328.2 369.3L330.3 369.4L332.3 369.6L334.3 369.5L336.3 369.6L338.4 369.5L340.4 369.5L342.4 369.8L344.5 369.8L346.5 369.5L348.5 369.7L350.5 369.6L352.6 369.9L354.6 369.7L356.6 369.6L358.7 369.9L360.7 369.6L362.7 369.6L364.7 370L366.8 370L368.8 369.8L370.8 369.7L372.9 369.9L374.9 370L376.9 370L378.9 370.1L381 370.1L383 370L385 370L387.1 370.1L389.1 370.1L391.1 370.2L393.1 370.1L395.2 370.2L397.2 370.3L399.2 370L401.3 370.1L403.3 370.1L405.3 370.3L407.3 370L409.4 370.1L411.4 370.4M428.3 375.5L429.9 375.7L431.4 376.3L433 376.7L434.6 376.8L436.1 377.1L437.7 376.9L439.3 376.5L440.9 376.3L442.4 376L444 375.6L444.4 385.2L446 385.2L448 384.8L450 385.7L452 385L454 384.9L456 384.9L458 385L460 384.9L462 385.2L464 385.2L466 385.3L468 385.6L470 384.9L472 385.2L474 385.5L476 385.2L478 385.2L480 385.4L482 385.4L484 385.2L486 385.1L488 385.1L490 385.3L492 385.7L494 385.5L496 385.5L498 385.2L500 384.9L502 385L504 385L506 384.9L508 385.5L510 384.9L512 385.1L514 385.6L516 385.7L518 385.7L520 385L522 385.5L524 385.6L526 385.1L528 385.4L530 385.6L532 385.6L534 385.2L536 385.5L538 385.4L540 385L542 385.3L544 385.4L546 385.3L548 385.7L550 385.3L552 385.3L554 385.5L556 385.6L558 384.9L560 385.2L562 385.5L564 385.1L566 384.9L568 385.7L570 385.7L572 385.6L574 385L576 385.6L578 385L580 385.1L582 385.2L584 385.5L586 384.8L588 385L590 385.2L592 385.5L594 385.1L596 385.3L598 385.2L600 385.4L602 385.1L604 385.6L606 385.4L608 384.8L610 384.9L612 385.4L614 384.9L616 385.4L618 384.8L620 385L622 385.3L624 385.5L626 385.7L628 384.9L630 385.7L632 384.9L634 384.8L636 385.2L638 385.5L640 384.9L642 384.8L644 385L646 385.2L648 385.3L650 385.4L652 385.5L654 385.1L656 385.3L658 385.5L660 385.6L662 385.1L664 385.4L666 385.2L668 385.4L670 384.9L672 384.9L674 385.7L676 385.5L678 385.4L680 384.8L682 385L684 385.4L686 385.5L688 385.1L690 384.9L692 384.8L694 385.4L696 384.9L698 385.1L700 385.2L702 384.8L704 385.5L706 385L708 385.6L710 385.5L712 384.8L714 385.5L716 385L718 385.1L720 384.9L722 385.4L724 385.4L726 385.4L728 384.9L730 385.1L732 384.8L734 384.9L736 385.6L738 385.2L740 385.6L742 385.7L744 385.6L746 384.9L748 385L750 384.9L752 385.4L754 385.1L756 385L758 385.3L760 385.2L762 385.5L764 385.6L766 385.5L768 384.9L770 385.2L772 384.8L774 385.3L776 385.4L778 385L780 384.9L782 385.7L784 385.1L786 385.6L788 385.6L790 384.9L792 385.7L794 385.5L796 384.8L798 385.3L800 385.6L802 385.5L802 383.4L802.8 381.9L803.6 383.9L804.4 381.3L805.2 383L806 381.1L806.8 381.3L807.6 383.3L808.4 383.4L809.2 382.7L810 383.9L810.8 382.1L811.6 384.1L812.4 384.2L813.2 381.1L814 383.3L814.8 382.3L815.6 382.8L816.4 383.2L817.2 384L818 381.3L818.8 381.1L819.6 381.1L820.4 383.8L821.2 383.5L822 382.2L823 384.8L825 385.2L827 385.1L829 385.1L831.1 385.5L833.1 385.2L835.1 385.4L837.1 385.5L839.1 385.6L841.1 385.4L843.2 384.8L845.2 385.3L847.2 385.1L849.2 385.1L851.2 384.8L853.2 385.3L855.3 385.4L857.3 385.4L859.3 385.4L861.3 384.9L863.3 384.9L865.4 385.4L867.4 385.4L869.4 385.2L871.4 385.2L873.4 385.1L875.4 385.5L877.5 385.7L879.5 385.5L881.5 385.6L883.5 385.2L884.2 377.6L884.8 375.5L886 377.3L887 378L888.4 377.9L889.7 377.6L891.1 377.6L892 376.5L892.9 369.2L894.5 368.8L896.5 368.9L898.6 368.8L900.6 369.1L902.6 369L904.7 368.9L906.7 369.2L908.7 368.8L910.8 369.2L912.8 368.9L914.8 368.8L916.9 368.9L918.9 369.1L920.9 369.2L923 369.1L925 368.9L927 369.2L929.1 369L931.1 369.3L933.1 369L935.2 369.4L937.2 369.3L939.2 369L941.3 369.1L943.3 369L945.4 369.1L947.4 369.1L949.4 369.2L951.5 369.4L953.5 369.3L955.5 369.4L957.6 369.2L959.6 369.2L961.6 369.4L963.7 369.5L965.7 369.2L967.7 369.2L969.8 369.3L971.8 369.4L973.8 369.2L975.9 369.4L977.9 369.5L979.9 369.5L982 369.5L984 369.7M1000.5 371.4L1002.5 371.7L1004.5 371.5L1006.5 371.5L1008.5 371.8L1010.5 371.6L1012.5 371.6L1014.5 371.9L1016.6 371.8L1018.6 371.8L1020.6 371.9L1022.6 371.8L1024.6 371.8L1026.6 371.8L1028.6 372L1029.3 361.4L1031 361.3L1032.4 361.2L1033.7 361.1L1035.1 360.8L1036.4 360.6L1037.8 361L1039.1 360.5L1040.5 360.4L1041.6 347.2L1042.5 347.3L1043.1 346.6L1043.7 347.9L1044.3 345.8L1045 348.3L1045.6 344.8L1046.2 345.4L1046.8 346L1047.4 347.3L1048 344.9L1048.6 344.7L1049.3 347.6L1049.9 345.3L1050.5 345L1051.1 345.6L1052.3 345.4" fill="none" stroke="#a8e294" stroke-width="2.6" stroke-linejoin="round"/>
</g><path d="M1052.3 341.5L1053.2 341.3L1054.1 341.8L1055 341.8L1055.9 341.9L1056.8 341.3L1057.7 342.1L1058.6 341.8L1059.5 341.9L1060.4 341.5L1061.3 342L1062.2 342.2L1063.1 341.6L1064 342L1064.9 341.7L1065.8 341.6L1066.7 341.5L1067.6 341.4L1068.5 341.7L1069.4 341.4L1070.3 341.6L1071.2 341.9L1072.1 341.4L1073 341.5L1073.9 341.3L1074.8 341.3L1075.7 341.7L1076.6 341.9L1077.5 341.8L1078.4 342.2L1079.3 341.8L1080.2 341.8L1081.1 341.5L1082 341.6L1082.9 342L1083.8 341.9L1084.7 341.3L1085.6 341.7L1086.5 341.7L1087.4 341.8L1088.3 341.2L1089.2 342L1090.1 341.7L1091 342.2L1091.9 341.8L1092.8 341.4L1093.7 341.5L1094.6 341.5L1095.5 341.5L1096.4 341.6L1097.3 341.8L1098.2 341.6L1099.1 341.4L1100 341.5L1100.9 341.6L1101.8 341.9L1102.7 341.4L1103.6 342L1104.5 341.7L1105.4 342.1L1106.3 341.5L1107.2 341.8L1108.1 342.2L1109 341.3L1109.9 341.8L1110.8 341.6L1111.7 342L1112.6 341.9L1113.5 341.4L1114.4 341.8L1115.3 341.5L1116.2 341.6L1117.1 341.4L1118 341.6L1118.9 341.6L1119.8 341.4L1120.7 341.9L1121.6 341.3L1122.5 341.4L1123.4 341.3L1124.3 341.9L1125.2 341.5L1126.1 342L1127 342L1127.9 341.8L1128.8 341.5L1129.7 341.9L1130.6 342L1131.5 341.5L1132.4 341.5L1133.3 341.5L1134.2 341.9L1135.1 341.8L1136 342.1L1136.9 342.1L1137.8 341.3L1138.7 342.1L1139.6 341.4L1140.5 341.6L1141.4 341.4L1142.3 341.5L1143.2 341.8L1144.1 341.8L1145 342L1145.9 341.7L1146.8 342L1147.7 341.9L1148.6 341.3L1149.5 342.1L1150.4 341.4L1151.3 341.8L1152.2 341.3L1153.1 341.3L1154 342L1154.9 342.2L1155.8 341.6L1156.7 341.8L1157.6 341.7L1158.5 341.3L1159.4 342.1L1160.3 342.1L1161.2 342.1L1162.1 342.2L1163 341.5L1163.9 341.4L1164.8 341.8L1165.7 341.3L1166.6 341.9L1167.5 341.3L1168.4 341.8L1169.3 341.6L1170.2 342.1L1171.1 341.8L1172 341.3L1172.9 341.6L1173.8 341.5L1174.7 341.5L1175.6 341.3L1176.5 341.3L1177.4 341.4L1178.3 342.1L1179.2 341.7L1180.1 341.3L1181 341.7L1181.9 342.1L1182.8 341.5L1183.7 342.2L1184.6 342.1L1185.5 342.1L1186.4 341.8L1187.3 341.9L1188.2 341.4L1189.1 341.4L1190 341.8L1190.9 341.7L1191.8 341.9L1192.7 341.3L1193.6 342.1L1194.5 341.8L1195.4 341.5L1196.3 341.5L1197.2 341.3L1198.1 341.9L1199 341.8L1199.9 342.1L1200.8 341.6L1201.7 341.4L1202.6 341.9L1203.5 341.8L1204.4 341.5L1205.3 341.7L1206.2 341.3L1207.1 341.9L1208 341.3L1208.9 341.3L1209.8 341.3L1210.7 341.3L1211.6 341.4L1212.5 341.7L1213.4 341.2L1214.3 341.5L1215.2 341.8L1216.1 341.6L1217 341.7L1217.9 341.7L1218.8 342L1219.7 341.6L1220.6 342L1221.5 341.5L1222.4 342.1L1223.3 341.9L1224.2 341.9L1225.1 341.7L1226 342.1L1226.9 341.6L1227.8 341.4L1228.7 341.8L1229.6 341.5L1230.5 341.3L1231.4 341.4L1232.3 341.8L1233.2 341.7L1234.1 341.4L1235 341.4L1235.9 341.9L1236.8 341.5L1237.7 341.7L1238.6 341.8L1239.5 341.4L1240.4 342.1L1241.3 341.7L1242.2 341.9L1243.1 342.2L1244 341.9L1244.9 341.5L1245.8 341.7L1246.7 341.7L1247.6 341.7L1248.5 341.3L1249.4 341.6L1250.3 341.9L1251.2 341.6L1252.1 341.3L1253 341.6L1253.9 341.5L1254.8 341.8L1255.7 341.3L1256.6 341.5L1257.5 341.3L1258.4 341.8L1259.3 341.4L1260.2 341.5L1261.1 341.9L1262 342.1L1262.9 341.8L1263.8 342L1264.7 341.4L1265.6 341.9L1266.5 341.9L1267.4 341.5L1268.3 341.8L1269.2 341.7L1270.1 341.7L1271 341.5L1271.9 342.1L1272.8 342L1273.7 341.9L1274.6 341.3L1275.5 341.5L1276.4 342.1L1277.3 341.2L1278.2 341.7L1279.1 341.3L1280 342.1L1280.9 341.8L1281.8 342.1L1282.7 341.9L1283.6 341.4L1284.5 341.4L1285.4 342.1L1286.3 341.5L1287.2 341.7L1288.1 342.1L1289 342.1L1289.9 341.3L1290.8 341.7L1291.7 341.3L1292.6 341.9L1293.5 341.3L1294.4 342L1295.3 341.9L1296.2 342.2L1297.1 341.6L1298 341.3L1298.9 341.7L1299.8 341.5L1300.7 342L1301.6 341.5L1302.5 342.1L1303.4 341.6L1304.3 341.3L1305.2 341.6L1306.1 341.8L1307 341.5L1307.9 342L1308.8 341.7L1309.7 341.6L1310.6 341.3L1311.5 341.7L1312.4 341.9L1313.3 341.6L1314.2 341.3L1315.1 341.7L1316 342.1L1316.9 341.9L1317.8 341.7L1318.7 341.6L1319.6 342L1320.5 341.6L1321.4 341.8L1322.3 342.2L1323.2 341.6L1324.1 342L1325 341.3L1325.9 341.6L1326.8 342.2L1327.7 342L1328.6 341.5L1329.5 342.1L1330.4 341.5L1331.3 341.9L1332.2 342.1L1333.1 342L1334 341.3L1334.9 341.9L1335.8 341.9L1336.7 341.9L1337.6 341.8L1338.5 341.6L1339.4 341.6L1340.3 341.8L1341.2 341.6L1342.1 341.6L1343 341.8L1343.9 341.6L1344.8 342.1L1345.7 342L1346.6 341.8L1347.5 341.9L1348.4 341.7L1349.3 341.8L1350.2 341.8L1351.1 341.7L1352 341.4L1352.9 341.5L1353.8 341.9L1354.7 342L1355.6 342L1356.5 342L1357.4 341.4L1358.3 341.3L1359.2 341.4L1360.1 341.8L1361 341.6L1361.9 341.5L1362.8 341.6L1363.7 341.3L1364.6 341.6L1365.5 341.6L1366.4 341.7L1367.3 341.6L1368.2 341.3L1369.1 341.6L1370 341.7L1370.9 341.5L1371.8 342.1L1372.7 342L1373.6 341.8L1374.5 341.3L1375.4 341.6L1376.3 341.4L1377.2 341.4L1378.1 341.6L1379 342L1379.9 341.3L1380.8 341.3L1381.7 341.6L1382.6 341.5L1383.5 341.8L1384.4 341.9L1385.3 341.8L1386.2 341.6L1387.1 342.1L1388 341.3L1388.9 341.6L1389.8 341.9L1390.7 341.3L1391.6 341.3L1392.5 341.4L1393.4 341.5L1394.3 341.9L1395.2 341.6L1396.1 341.7L1397 341.7L1397.9 341.5L1398.8 341.8L1399.7 341.6L1400.6 341.4L1401.5 341.8L1402.4 342.2L1403.3 342L1404.2 341.5L1405.1 341.9L1406 341.3L1406.9 341.3L1407.8 341.8L1408.7 341.5L1409.6 341.7L1410.5 342.2L1411.4 341.3L1412.3 341.6L1413.2 342L1414.1 341.3L1415 342L1415.9 341.7L1416.8 341.4L1417.7 341.5L1418.6 341.5L1419.5 341.7L1420.4 341.4L1421.3 341.6L1422.2 341.7L1423.1 341.7L1424 342L1424.9 341.3L1425.8 341.9L1426.7 341.6L1427.6 341.5L1428.5 341.7L1429.4 341.7L1430.3 342L1431.2 341.8L1432.1 341.4L1433 342L1433.9 341.4L1434.8 341.6L1435.7 341.9L1436.6 341.9L1437.5 341.9L1438.4 342L1439.3 341.9L1440.2 341.4L1441.1 342L1442 341.4L1442.9 341.7L1443.8 342L1444.7 342.1L1445.6 342.1L1446.5 341.8L1447.4 341.6L1448.3 341.7L1449.2 341.9L1450.1 341.9L1451 341.2L1451.9 341.4L1452.8 341.5L1453.7 341.7L1454.6 341.4L1455.5 341.7L1456.4 341.4L1457.3 341.6L1458.2 341.9L1459.1 341.4L1460 341.4L1460.9 341.6L1461.8 341.4L1462.7 341.9L1463.6 341.7L1464.5 341.3L1465.4 341.4L1466.3 341.3L1467.2 341.5L1468.1 342.2L1469 342L1469.9 341.8L1470.8 341.6L1471.7 341.6L1472.6 341.3L1473.5 341.4L1474.4 341.5L1475.3 341.9L1476.2 341.4L1477.1 341.7L1478 342.1L1478.9 341.4L1479.8 341.3L1480.7 342.1L1481.6 342.1L1482.5 341.8L1483.4 341.6L1484.3 341.7L1485.2 342L1486.1 341.4L1487 341.4L1487.9 341.3L1488.8 341.4L1489.7 342L1490.6 341.9L1491.5 341.7L1492.4 341.4L1493.3 341.2L1494.2 341.4L1495.1 341.8L1496 341.7L1496.9 341.7L1497.8 341.7L1498.7 341.6L1499.6 342L1500.5 341.4L1501.4 341.4L1502.3 341.4L1503.2 341.2L1504.1 341.6L1505 341.6L1505.9 341.3L1506.8 341.8L1507.7 341.6L1508.6 341.7L1509.5 341.4L1510.4 341.7L1511.3 342.2L1512.2 341.9L1513.1 341.3L1514 342.1L1514.9 341.7L1515.8 341.2L1516.7 341.6L1517.6 342.1L1518.5 341.4L1519.4 341.3L1520.3 341.6L1521.2 342.1L1522.1 341.3L1523 342.1L1523.9 341.5L1524.8 342L1525.7 341.7L1526.6 341.9L1527.4 341.7L1527.4 349.3L1526.6 349L1525.7 349.1L1524.8 349.5L1523.9 349.6L1523 349.5L1522.1 349.6L1521.2 349.6L1520.3 349.2L1519.4 349.3L1518.5 349.6L1517.6 349.2L1516.7 349.8L1515.8 349L1514.9 349L1514 349.5L1513.1 349.7L1512.2 349.6L1511.3 349.7L1510.4 349L1509.5 349.4L1508.6 349.2L1507.7 349.3L1506.8 349.3L1505.9 349.5L1505 349.8L1504.1 349.7L1503.2 349.1L1502.3 349.4L1501.4 349.1L1500.5 349.5L1499.6 349.3L1498.7 349.5L1497.8 349.4L1496.9 348.9L1496 348.9L1495.1 349L1494.2 349.2L1493.3 349.1L1492.4 349.4L1491.5 348.9L1490.6 349.8L1489.7 349L1488.8 349.6L1487.9 349.4L1487 349.7L1486.1 348.9L1485.2 349.5L1484.3 349.3L1483.4 349.6L1482.5 348.9L1481.6 349.4L1480.7 349.2L1479.8 349L1478.9 349.3L1478 349.6L1477.1 349.4L1476.2 349.7L1475.3 349.7L1474.4 349.4L1473.5 348.9L1472.6 349.3L1471.7 349.2L1470.8 349.6L1469.9 349.4L1469 349.1L1468.1 349.7L1467.2 349.6L1466.3 349.7L1465.4 349.4L1464.5 349.1L1463.6 349.7L1462.7 349.6L1461.8 349.2L1460.9 349.7L1460 348.9L1459.1 349.5L1458.2 349.8L1457.3 349.1L1456.4 349.2L1455.5 349.5L1454.6 349.6L1453.7 349.7L1452.8 349.5L1451.9 349.6L1451 349.5L1450.1 349.2L1449.2 349.4L1448.3 349.7L1447.4 349.7L1446.5 349.2L1445.6 349.1L1444.7 349.1L1443.8 349.2L1442.9 349.4L1442 349.3L1441.1 349.4L1440.2 349.3L1439.3 349.6L1438.4 349.7L1437.5 349.4L1436.6 349.5L1435.7 349.7L1434.8 349.1L1433.9 349.1L1433 349.3L1432.1 349.5L1431.2 349.6L1430.3 349.4L1429.4 349.4L1428.5 349.4L1427.6 349.5L1426.7 348.9L1425.8 349.4L1424.9 349.5L1424 349.8L1423.1 348.9L1422.2 349.2L1421.3 349.4L1420.4 349.7L1419.5 349.6L1418.6 349.2L1417.7 349.1L1416.8 348.9L1415.9 349.4L1415 349.3L1414.1 348.9L1413.2 349.1L1412.3 349.5L1411.4 349L1410.5 349L1409.6 349.4L1408.7 348.9L1407.8 349.2L1406.9 349.8L1406 349L1405.1 349.7L1404.2 349.1L1403.3 349.1L1402.4 349.7L1401.5 349.7L1400.6 349.7L1399.7 348.9L1398.8 349.3L1397.9 349.6L1397 349.1L1396.1 349.4L1395.2 349.1L1394.3 348.9L1393.4 349.7L1392.5 349.6L1391.6 349.4L1390.7 349.8L1389.8 349.1L1388.9 349.3L1388 349.6L1387.1 349.2L1386.2 349.3L1385.3 349.1L1384.4 349L1383.5 349.5L1382.6 349.8L1381.7 348.9L1380.8 349.5L1379.9 349.5L1379 349.1L1378.1 349.5L1377.2 349.6L1376.3 349.6L1375.4 349.1L1374.5 349L1373.6 349.6L1372.7 349.3L1371.8 349.7L1370.9 349.8L1370 349.8L1369.1 349.8L1368.2 349.4L1367.3 349.4L1366.4 349.1L1365.5 349L1364.6 349.4L1363.7 348.9L1362.8 349.8L1361.9 349.1L1361 349.6L1360.1 349.7L1359.2 349.4L1358.3 349.7L1357.4 349.5L1356.5 349L1355.6 349L1354.7 348.9L1353.8 349.2L1352.9 349.8L1352 349.1L1351.1 349.3L1350.2 349.2L1349.3 349.7L1348.4 349.4L1347.5 349.6L1346.6 349.3L1345.7 349.6L1344.8 349.3L1343.9 349.3L1343 349L1342.1 349.3L1341.2 349.3L1340.3 349.2L1339.4 349L1338.5 349L1337.6 349L1336.7 348.9L1335.8 349.3L1334.9 349.2L1334 349.2L1333.1 349.4L1332.2 349.8L1331.3 349.6L1330.4 349.7L1329.5 349.7L1328.6 349.2L1327.7 349.6L1326.8 349.5L1325.9 349.3L1325 349.5L1324.1 349.2L1323.2 349.7L1322.3 349.5L1321.4 349.8L1320.5 349L1319.6 349.6L1318.7 349.2L1317.8 349.1L1316.9 349.7L1316 349.7L1315.1 349.5L1314.2 349.5L1313.3 349L1312.4 349.2L1311.5 349.8L1310.6 349.2L1309.7 349.6L1308.8 349.5L1307.9 349.5L1307 349.6L1306.1 349.5L1305.2 349.7L1304.3 349.3L1303.4 349.2L1302.5 349.6L1301.6 349.4L1300.7 349.5L1299.8 349L1298.9 349.4L1298 349.6L1297.1 348.9L1296.2 348.9L1295.3 349.3L1294.4 349.1L1293.5 349.3L1292.6 349.3L1291.7 348.9L1290.8 349.4L1289.9 349.6L1289 349.4L1288.1 349L1287.2 349L1286.3 349.5L1285.4 349.4L1284.5 349.2L1283.6 349L1282.7 349.4L1281.8 349.6L1280.9 349.2L1280 349.3L1279.1 348.9L1278.2 349.5L1277.3 349.3L1276.4 349.2L1275.5 349L1274.6 349.4L1273.7 349.4L1272.8 349.8L1271.9 348.9L1271 349.7L1270.1 348.9L1269.2 349.1L1268.3 349.1L1267.4 349.2L1266.5 349.3L1265.6 348.9L1264.7 349.3L1263.8 349.6L1262.9 349.8L1262 349.5L1261.1 349.4L1260.2 349.4L1259.3 349.5L1258.4 349.4L1257.5 349L1256.6 349L1255.7 349L1254.8 349.4L1253.9 349.3L1253 348.9L1252.1 349.7L1251.2 349.3L1250.3 349.3L1249.4 349.5L1248.5 349.4L1247.6 349L1246.7 349.3L1245.8 349.3L1244.9 348.9L1244 349L1243.1 349.7L1242.2 349.2L1241.3 349.6L1240.4 349L1239.5 349.3L1238.6 349L1237.7 349.3L1236.8 349.1L1235.9 349.6L1235 348.9L1234.1 349.1L1233.2 348.9L1232.3 349.2L1231.4 349L1230.5 349.2L1229.6 349.5L1228.7 349L1227.8 349.8L1226.9 349.6L1226 349L1225.1 349.7L1224.2 349.2L1223.3 349.7L1222.4 349.3L1221.5 349.8L1220.6 349.4L1219.7 349L1218.8 349.2L1217.9 349.6L1217 348.9L1216.1 349.4L1215.2 348.9L1214.3 349.1L1213.4 349.1L1212.5 349.3L1211.6 349.7L1210.7 348.9L1209.8 349L1208.9 348.9L1208 349.4L1207.1 349.7L1206.2 349.5L1205.3 349.7L1204.4 349.3L1203.5 349.5L1202.6 349.5L1201.7 349.2L1200.8 349.8L1199.9 349.5L1199 349.3L1198.1 349.7L1197.2 349L1196.3 349.3L1195.4 349L1194.5 348.9L1193.6 349.2L1192.7 349.3L1191.8 349.1L1190.9 349.5L1190 349.6L1189.1 349.5L1188.2 349L1187.3 349.7L1186.4 349.1L1185.5 349.8L1184.6 349.1L1183.7 349.3L1182.8 349L1181.9 349.4L1181 349.4L1180.1 349.8L1179.2 349.5L1178.3 349L1177.4 349.8L1176.5 349L1175.6 349.7L1174.7 349.6L1173.8 349.1L1172.9 349.1L1172 349.4L1171.1 349.6L1170.2 349.5L1169.3 349.3L1168.4 349.2L1167.5 349.2L1166.6 349.7L1165.7 349.2L1164.8 349.2L1163.9 349.2L1163 349.2L1162.1 349.2L1161.2 349.7L1160.3 349.5L1159.4 349L1158.5 349.8L1157.6 349L1156.7 349.7L1155.8 349.8L1154.9 349.7L1154 348.9L1153.1 349.1L1152.2 349.4L1151.3 349.3L1150.4 349.5L1149.5 349.1L1148.6 348.9L1147.7 349.2L1146.8 349.1L1145.9 349.3L1145 349L1144.1 349.6L1143.2 349.3L1142.3 349.7L1141.4 349.7L1140.5 349.5L1139.6 348.9L1138.7 349.1L1137.8 349.6L1136.9 349.2L1136 349.6L1135.1 349.3L1134.2 349.7L1133.3 349.1L1132.4 349.6L1131.5 349.5L1130.6 349.7L1129.7 349.3L1128.8 349.2L1127.9 348.9L1127 348.9L1126.1 349.2L1125.2 349.1L1124.3 349.4L1123.4 349.2L1122.5 349.8L1121.6 349.1L1120.7 349.6L1119.8 349L1118.9 349.6L1118 349.6L1117.1 349.6L1116.2 349.1L1115.3 349.6L1114.4 349.3L1113.5 349.3L1112.6 349.7L1111.7 349L1110.8 349.6L1109.9 349.2L1109 349.2L1108.1 349.3L1107.2 349.2L1106.3 349.4L1105.4 349.3L1104.5 349.4L1103.6 349L1102.7 349.3L1101.8 349.1L1100.9 349.5L1100 349L1099.1 349L1098.2 348.9L1097.3 349.2L1096.4 349.2L1095.5 349.2L1094.6 349.3L1093.7 349L1092.8 349.3L1091.9 349.4L1091 349.4L1090.1 349.5L1089.2 349.2L1088.3 349.5L1087.4 349.1L1086.5 349L1085.6 348.9L1084.7 349L1083.8 349.2L1082.9 349.8L1082 349.5L1081.1 349.3L1080.2 349.1L1079.3 349.5L1078.4 349.4L1077.5 349.3L1076.6 349.3L1075.7 349.3L1074.8 349.7L1073.9 349.1L1073 349.3L1072.1 349.7L1071.2 349.7L1070.3 349.4L1069.4 349.1L1068.5 349.3L1067.6 348.9L1066.7 349.1L1065.8 349.6L1064.9 349.5L1064 349.5L1063.1 349L1062.2 349.2L1061.3 349.4L1060.4 349.8L1059.5 349.6L1058.6 349.7L1057.7 349.2L1056.8 348.9L1055.9 349.7L1055 349.7L1054.1 349.1L1053.2 348.9L1052.3 349.4Z" fill="#a6e784" fill-opacity="0.93"/><path d="M1525 345V173.4" stroke="#5f9c4e" stroke-width="1.6"/><path d="M1525.2 345V322" stroke="#8fd47c" stroke-width="2.4"/></g>
<g clip-path="url(#c2)"><rect x="443" y="432.8" width="13.4" height="12.8" fill="#cf8d30"/><rect x="1024.3" y="434" width="4.7" height="12.5" fill="#cf8d30"/><path d="M340.9 671.6L341.6 620L341.8 560L342.6 500L342.8 470L343.8 438.6" fill="none" stroke="#e8962e" stroke-width="1.9" stroke-linejoin="round"/><path d="M31.7 671.6H341.3M343.6 438.6H456.5L700 439.5H1527.4" fill="none" stroke="#e8962e" stroke-width="2.4"/><path d="M352.2 432V438.6M912.8 434.8V444M922.6 434V443.5M1057.6 435.5V443.5M1070.7 435.5V443.5M1078.4 433V442.5" stroke="#e8962e" stroke-width="1.4" stroke-opacity="0.85" fill="none"/><rect x="470.3" y="432.8" width="15.7" height="12.8" fill="#d6cd40"/><rect x="1052" y="434" width="5.4" height="13" fill="#c3cf52"/><path d="M370 671.6L370.6 620L370.8 560L371.6 500L371.7 470L372.6 439.6" fill="none" stroke="#efe343" stroke-width="1.9" stroke-linejoin="round"/><path d="M31.7 671.6H370.4M372.4 439.6H1527.4" fill="none" stroke="#efe343" stroke-width="2.4"/><path d="M380.2 432.5V439.6M941 435V444.5M951.4 434V443.5M1086.4 435V443.5M1098.4 435.5V443.5M1107 436.5V442.5" stroke="#efe343" stroke-width="1.4" stroke-opacity="0.85" fill="none"/><rect x="411.2" y="422.6" width="16.1" height="12.8" fill="#84c67c"/><rect x="984" y="423.1" width="15.8" height="11.9" fill="#84c67c"/><path d="M313.4 671.6L314.3 620L314.5 560L315.7 500L315.9 470L317.2 428.4" fill="none" stroke="#8ed07c" stroke-width="1.9" stroke-linejoin="round"/><path d="M31.7 671.6H313.8M317 428.4L411.2 428.4L427.3 427.6L428.5 426.9L431 427.5L443 427.4L444.5 428.2L500 428L503 428.3L800 428.4L802 429L803 428.9L804.3 428.6L805.6 429.4L806.9 428.5L808.2 429.3L809.5 429L810.8 428.5L812.1 429.2L813.4 428.5L814.7 429.1L816 428.5L817.3 428.5L818.6 429.1L819.9 429.7L821.2 428.6L884 429.2L885.2 429.7L1028.9 429.8L1036 430L1039 431.3L1041.2 431.5L1041.9 449L1042.8 446L1043.6 431.8L1527.4 431.8" fill="none" stroke="#8ed07c" stroke-width="2.3" stroke-linejoin="round"/>
<path d="M325.2 421V428.4M884.4 425.5V433M892.6 420.5V431.5M1028.5 420.8V429.8" stroke="#8ed07c" stroke-width="1.5" stroke-opacity="0.9" fill="none"/><path d="M1523.5 429.3L1528 431.8L1523.5 434.3Z" fill="#7cc06c"/></g>
<g clip-path="url(#c3)"><g opacity="1"><path d="M442.8 951.5L442.8 882.1L443.7 879.1L444.6 879.3L445.5 880.6L446.4 880.2L447.3 880.4L448.2 878.2L449.1 888.3L450 896.8L450.9 891.3L451.8 878.4L452.7 878.3L453.6 880.6L454.5 880L455.4 878.2L456.3 879.2L456.4 881.8L456.4 951.5L456.4 951.4L455.3 951.9L454.2 951.7L453.1 951L452 952L450.9 950.5L449.8 951.8L448.7 950.5L447.6 951.7L446.5 950.5L445.4 950.9L444.3 951.4L443.2 951.3Z" fill="#cf8d30" stroke="#cf8d30" stroke-width="0.8" stroke-linejoin="round"/><path d="M1025.1 950.4L1025.1 890.3L1026 888.1L1026.9 891L1027.8 889.2L1028.4 891.4L1028.4 950.4L1028.4 950.3L1027.3 950.1L1026.2 949.4L1025.1 951.1Z" fill="#cf8d30" stroke="#cf8d30" stroke-width="0.8" stroke-linejoin="round"/><path d="M342.4 949.8V838.9" stroke="#e8962e" stroke-width="2.1" stroke-opacity="0.68"/><path d="M352.3 949.2V900.5" stroke="#e8962e" stroke-width="2.0" stroke-opacity="0.75"/><path d="M912.8 948.7V863.6" stroke="#e8962e" stroke-width="1.6" stroke-opacity="0.8"/><path d="M922.6 948.7V892.5" stroke="#e8962e" stroke-width="1.6" stroke-opacity="0.8"/><path d="M1057.7 929.3V881.5" stroke="#e8962e" stroke-width="1.7" stroke-opacity="0.85"/><path d="M1070 920.2V703.3" stroke="#e8962e" stroke-width="2.0" stroke-opacity="0.9"/><path d="M1070 920.2V797" stroke="#e8962e" stroke-width="2.9" stroke-opacity="0.95"/><path d="M1078.4 920.2V697.4" stroke="#e8962e" stroke-width="2.0" stroke-opacity="0.9"/><path d="M1078.4 920.2V793.3" stroke="#e8962e" stroke-width="2.9" stroke-opacity="0.95"/><path d="M31.7 949.8L342.1 949.8L342.5 938.5L343 926L343.6 932.8L344.3 937.3L345 938.7L346.9 938.2L348.9 937.6L350.9 937.6L352 936.8L352.6 929.3L353.9 929.1L355.9 929.2L357.9 929.6L360 929.6L362 929.3L364 929.3L366 929.4L368 929.6L370.1 929.4L372.1 929.5L374.1 929.5L376.1 929.7L378.1 929.6L380.2 929.6L382.2 929.5L384.2 929.4L386.2 929.4L388.2 929.6L390.3 929.7L392.3 929.8L394.3 929.9L396.3 930L398.3 929.8L400.4 929.9L402.4 929.9L404.4 929.6L406.4 929.8L408.5 929.8L410.5 930L412.5 930.1L414.5 930L416.5 930.1L418.6 929.9L420.6 929.7L422.6 929.9L424.6 930.2L426.6 929.9L428.7 929.9L430.7 930L432.7 929.9L434.7 930L436.7 930L438.8 930.2L440.8 929.9L442.8 930M456.7 936.1L458.2 936.7L459.7 937.4L461.3 937.8L462.8 937.9L464.3 937.7L465.8 937.6L467.4 937.5L468.9 936.6L470.4 936.1L470.8 947.6L472.4 947.2L474.4 947.9L476.4 947.3L478.4 948L480.4 947.4L482.4 947.8L484.4 947.9L486.4 947.2L488.4 948L490.4 947.6L492.4 947.2L494.4 947.8L496.4 947.9L498.4 947.2L500.4 947.7L502.4 947.4L504.4 948.1L506.4 947.7L508.4 947.9L510.4 947.4L512.4 948L514.4 947.1L516.4 948.1L518.5 947.4L520.5 948.1L522.5 947.8L524.5 947.3L526.5 947.9L528.5 947.9L530.5 947.4L532.5 947.7L534.5 948.1L536.5 947.1L538.5 947.9L540.5 948.1L542.5 947.7L544.5 947.5L546.5 947.3L548.5 948L550.5 947.8L552.5 948.1L554.5 947.6L556.5 947.3L558.5 947.3L560.5 947.2L562.5 947.3L564.5 947.2L566.5 947.4L568.5 947.6L570.5 947.9L572.5 947.4L574.5 947.8L576.5 948L578.5 947.6L580.5 947.2L582.5 948L584.5 947.5L586.5 947.7L588.5 947.6L590.5 948L592.5 947.1L594.5 947.8L596.5 947.5L598.5 947.7L600.5 948.1L602.5 947.5L604.5 948L606.5 948L608.6 948.1L610.6 947.9L612.6 948L614.6 947.5L616.6 947.6L618.6 947.1L620.6 947.1L622.6 947.1L624.6 947.9L626.6 947.6L628.6 947.8L630.6 947.5L632.6 947.5L634.6 947.3L636.6 947.4L638.6 947.8L640.6 947.7L642.6 947.6L644.6 948.1L646.6 948.1L648.6 947.7L650.6 948L652.6 947.4L654.6 947.9L656.6 948L658.6 947.9L660.6 947.9L662.6 947.9L664.6 947.6L666.6 947.6L668.6 947.8L670.6 947.4L672.6 947.9L674.6 947.2L676.6 947.1L678.6 947.4L680.6 947.7L682.6 947.6L684.6 947.5L686.6 948L688.6 947.7L690.6 947.6L692.6 947.9L694.6 948L696.7 947.3L698.7 947.7L700.7 947.6L702.7 947.2L704.7 947.5L706.7 947.8L708.7 947.1L710.7 947.7L712.7 948.1L714.7 947.4L716.7 948L718.7 947.8L720.7 947.2L722.7 947.4L724.7 948.1L726.7 947.6L728.7 947.7L730.7 947.6L732.7 947.9L734.7 947.5L736.7 948L738.7 947.8L740.7 947.7L742.7 947.1L744.7 948L746.7 947.3L748.7 947.9L750.7 947.5L752.7 947.7L754.7 947.6L756.7 947.3L758.7 947.7L760.7 948L762.7 948L764.7 948L766.7 947.2L768.7 947.4L770.7 947.1L772.7 947.4L774.7 948.1L776.7 947.4L778.7 947.3L780.7 947.4L782.7 947.6L784.7 947.7L786.8 947.6L788.8 947.3L790.8 947.8L792.8 947.6L794.8 947.6L796.8 947.1L798.8 947.3L800.8 947.1L802.8 947.2L804.8 947.8L806.8 947.9L808.8 947.6L810.8 947.8L812.8 947.7L814.8 947.4L816.8 947.2L818.8 947.5L820.8 947.3L822.8 948L824.8 947.7L826.8 947.1L828.8 947.9L830.8 947.7L830.8 946.2L831.6 946.2L832.4 943.4L833.2 943.1L834 944.3L834.8 946L835.6 945.4L836.4 945.7L837.2 944.2L838 944.1L838.8 945L839.6 944.7L840.4 946.1L841.2 944.6L842 943.2L842.8 943.9L843.6 946.1L844.4 944.7L845.2 944L846 945.6L846.8 943.4L847.6 944.9L848.4 944.1L849.2 945.1L850 943.1L850.8 943.8L851.8 947.5L853.8 948L855.8 947.6L857.8 948.1L859.9 947.5L861.9 947.2L863.9 947.9L865.9 947.6L867.9 947.6L869.9 947.7L872 947.4L874 947.1L876 947.4L878 947.6L880 947.1L882 947.8L884.1 947.3L886.1 947.4L888.1 947.3L890.1 947.2L892.1 947.9L894.1 947.5L896.2 947.7L898.2 947.4L900.2 947.1L902.2 947.5L904.2 948.1L906.2 947.6L908.3 947.4L910.3 947.2L912.3 947.4L913 938.5L913.6 936.2L914.8 938.2L915.8 938.6L917.1 938.9L918.4 938.4L919.8 938.4L921.1 938.4L922 937.3L922.9 929.4L923.3 928.6L925.4 928.6L927.4 929L929.5 928.7L931.5 928.7L933.6 929L935.7 928.8L937.7 928.9L939.8 929.1L941.9 928.8L943.9 929.2L946 929L948 929.1L950.1 929.2L952.2 929.1L954.2 929.1L956.3 929.3L958.4 929L960.4 929.4L962.5 929.4L964.5 929.2L966.6 929.1L968.7 929.2L970.7 929.2L972.8 929.3L974.8 929.3L976.9 929.5L978.9 929.7L981 929.7L983 930.1L985.1 930.2L987.2 930L989.2 930.4L991.3 930.3L993.4 930.4L995.4 930.7L997.5 930.7L999.5 930.8L1001.6 930.9L1003.7 931.3L1005.7 931.4L1007.8 931.5L1009.9 931.6L1011.9 931.8L1014 932L1016 931.9L1018.1 931.9L1020.2 932.3L1022.2 932.3L1024.3 932.5M1029.3 932.6L1031.3 933.8L1033.3 933.6L1035.3 933.6L1037.3 933.7L1039.3 933.8L1041.3 933.6L1043.3 934L1045.4 933.8L1047.4 933.9L1049.4 933.8L1051.4 933.7L1053.4 933.8L1055.4 933.8L1057.4 934L1058.1 922.4L1059.8 922.3L1061.2 922L1062.5 922.1L1063.9 922L1065.2 921.5L1066.6 922L1067.9 921.4L1069.3 921.6L1070.4 907.8L1071.3 907.8L1072 907.9L1072.6 908.8L1073.2 907.3L1073.9 908.3L1074.5 907.2L1075.2 907.7L1075.8 905.4L1076.5 905.3L1077.1 907L1077.8 906.2L1079 905.9" fill="none" stroke="#e8962e" stroke-width="2.6" stroke-linejoin="round"/>
</g><path d="M1079 901.5L1079.9 902.3L1080.8 902.3L1081.7 902.1L1082.6 901.7L1083.5 901.7L1084.4 902.1L1085.3 902.1L1086.2 901.5L1087.1 901.8L1088 901.7L1088.9 901.6L1089.8 901.7L1090.7 902.2L1091.6 901.8L1092.5 902.1L1093.4 901.5L1094.3 902L1095.2 902.3L1096.1 902.3L1097 902.1L1097.9 901.6L1098.8 901.7L1099.7 901.9L1100.6 901.6L1101.5 902.2L1102.4 902.3L1103.3 901.5L1104.2 902.3L1105.1 902.2L1106 902.2L1106.9 902.2L1107.8 901.8L1108.7 902.1L1109.6 902.4L1110.5 901.6L1111.4 901.7L1112.3 901.9L1113.2 902.1L1114.1 901.8L1115 901.5L1115.9 902L1116.8 902.1L1117.7 901.9L1118.6 901.9L1119.5 901.5L1120.4 902L1121.3 901.9L1122.2 902.3L1123.1 902.3L1124 901.8L1124.9 902.4L1125.8 901.7L1126.7 902.3L1127.6 902.3L1128.5 901.8L1129.4 901.5L1130.3 902.4L1131.2 902.2L1132.1 901.9L1133 902L1133.9 902.2L1134.8 901.6L1135.7 901.8L1136.6 902.3L1137.5 902.3L1138.4 902.3L1139.3 902.4L1140.2 902.1L1141.1 901.6L1142 901.7L1142.9 901.6L1143.8 902.3L1144.7 901.8L1145.6 902.1L1146.5 902L1147.4 902.1L1148.3 901.7L1149.2 902L1150.1 901.7L1151 902.2L1151.9 901.8L1152.8 902.4L1153.7 902.2L1154.6 901.9L1155.5 901.8L1156.4 901.8L1157.3 902.4L1158.2 901.6L1159.1 901.9L1160 902.3L1160.9 901.8L1161.8 902.3L1162.7 901.5L1163.6 902L1164.5 902.2L1165.4 901.8L1166.3 901.6L1167.2 902L1168.1 901.7L1169 901.8L1169.9 901.8L1170.8 901.6L1171.7 902.1L1172.6 902.1L1173.5 901.5L1174.4 901.7L1175.3 901.7L1176.2 902L1177.1 902L1178 902.3L1178.9 902.3L1179.8 901.9L1180.7 902.3L1181.6 901.6L1182.5 901.8L1183.4 901.6L1184.3 902.1L1185.2 901.6L1186.1 902.4L1187 902.2L1187.9 902.1L1188.8 901.7L1189.7 902L1190.6 901.6L1191.5 901.9L1192.4 902.3L1193.3 902.1L1194.2 901.9L1195.1 901.8L1196 901.7L1196.9 902.3L1197.8 901.5L1198.7 902.2L1199.6 901.6L1200.5 901.8L1201.4 902.2L1202.3 902.4L1203.2 902.3L1204.1 902.1L1205 901.5L1205.9 902L1206.8 902.2L1207.7 901.9L1208.6 902.4L1209.5 901.8L1210.4 901.8L1211.3 901.9L1212.2 901.9L1213.1 901.7L1214 901.8L1214.9 902.2L1215.8 902L1216.7 902.3L1217.6 901.9L1218.5 901.8L1219.4 902.3L1220.3 902.4L1221.2 902L1222.1 902.1L1223 902L1223.9 902.1L1224.8 901.5L1225.7 902.3L1226.6 902.1L1227.5 901.8L1228.4 901.6L1229.3 901.5L1230.2 902.1L1231.1 902.4L1232 901.5L1232.9 901.6L1233.8 901.9L1234.7 902L1235.6 901.7L1236.5 902.4L1237.4 901.5L1238.3 901.8L1239.2 901.6L1240.1 902.2L1241 901.6L1241.9 901.6L1242.8 901.9L1243.7 902.2L1244.6 902.4L1245.5 902L1246.4 901.8L1247.3 901.9L1248.2 902.1L1249.1 902.3L1250 902L1250.9 901.5L1251.8 901.9L1252.7 902L1253.6 901.7L1254.5 902.3L1255.4 902.3L1256.3 902.4L1257.2 901.5L1258.1 901.9L1259 902L1259.9 902L1260.8 902.2L1261.7 901.5L1262.6 901.8L1263.5 902.1L1264.4 901.5L1265.3 901.9L1266.2 902.2L1267.1 902.1L1268 902L1268.9 901.9L1269.8 902L1270.7 901.7L1271.6 902L1272.5 901.7L1273.4 901.5L1274.3 901.9L1275.2 902L1276.1 901.5L1277 901.8L1277.9 901.8L1278.8 901.7L1279.7 902.3L1280.6 901.8L1281.5 902L1282.4 901.7L1283.3 901.6L1284.2 902L1285.1 901.7L1286 901.8L1286.9 902.1L1287.8 902L1288.7 901.5L1289.6 901.9L1290.5 902.3L1291.4 902.1L1292.3 901.9L1293.2 901.6L1294.1 902.3L1295 902.4L1295.9 901.7L1296.8 902.1L1297.7 901.6L1298.6 901.6L1299.5 901.9L1300.4 901.8L1301.3 902.1L1302.2 901.9L1303.1 902L1304 902L1304.9 902.2L1305.8 901.5L1306.7 902.2L1307.6 901.7L1308.5 901.9L1309.4 901.6L1310.3 901.9L1311.2 902L1312.1 902.1L1313 902.2L1313.9 901.5L1314.8 901.8L1315.7 902.3L1316.6 901.8L1317.5 902.4L1318.4 902.2L1319.3 902.1L1320.2 902.4L1321.1 902.1L1322 902L1322.9 901.5L1323.8 901.7L1324.7 902L1325.6 902.4L1326.5 902L1327.4 901.7L1328.3 901.7L1329.2 902.4L1330.1 902.2L1331 902.3L1331.9 902L1332.8 902.4L1333.7 901.7L1334.6 902.2L1335.5 901.8L1336.4 901.8L1337.3 902.3L1338.2 902.4L1339.1 902.3L1340 902L1340.9 901.5L1341.8 901.8L1342.7 901.5L1343.6 902.3L1344.5 902.4L1345.4 901.8L1346.3 901.6L1347.2 902.3L1348.1 901.5L1349 902L1349.9 902.4L1350.8 901.5L1351.7 901.6L1352.6 902.1L1353.5 902.3L1354.4 901.9L1355.3 901.9L1356.2 901.5L1357.1 901.7L1358 902.1L1358.9 902.3L1359.8 902L1360.7 901.6L1361.6 901.5L1362.5 902.1L1363.4 901.5L1364.3 902.4L1365.2 902.1L1366.1 901.7L1367 902.2L1367.9 901.6L1368.8 901.6L1369.7 902.3L1370.6 901.8L1371.5 901.9L1372.4 902L1373.3 902L1374.2 902.3L1375.1 902.1L1376 901.9L1376.9 902.2L1377.8 902.1L1378.7 902.3L1379.6 901.5L1380.5 902.3L1381.4 902.3L1382.3 902L1383.2 902L1384.1 901.6L1385 902.4L1385.9 902.1L1386.8 902.3L1387.7 902.2L1388.6 902.2L1389.5 901.7L1390.4 902L1391.3 901.6L1392.2 901.5L1393.1 901.7L1394 901.9L1394.9 901.9L1395.8 902.4L1396.7 901.5L1397.6 902L1398.5 901.6L1399.4 902L1400.3 902.3L1401.2 901.7L1402.1 901.5L1403 901.5L1403.9 901.9L1404.8 902.3L1405.7 901.7L1406.6 901.9L1407.5 901.8L1408.4 901.7L1409.3 901.9L1410.2 901.9L1411.1 901.5L1412 901.7L1412.9 901.5L1413.8 901.6L1414.7 902.2L1415.6 902.2L1416.5 901.8L1417.4 901.6L1418.3 901.7L1419.2 902.1L1420.1 901.5L1421 902L1421.9 902.4L1422.8 901.5L1423.7 901.8L1424.6 902.4L1425.5 902L1426.4 902.1L1427.3 902.3L1428.2 902.2L1429.1 902.3L1430 902L1430.9 901.5L1431.8 902.4L1432.7 901.5L1433.6 901.7L1434.5 901.5L1435.4 901.8L1436.3 902.3L1437.2 902.2L1438.1 901.6L1439 901.6L1439.9 902.4L1440.8 902.4L1441.7 901.5L1442.6 902.3L1443.5 901.8L1444.4 902L1445.3 901.6L1446.2 901.7L1447.1 902.4L1448 902.2L1448.9 902.2L1449.8 901.8L1450.7 901.6L1451.6 901.5L1452.5 901.8L1453.4 901.8L1454.3 902.2L1455.2 901.7L1456.1 902.3L1457 902.3L1457.9 902.2L1458.8 901.6L1459.7 901.8L1460.6 901.7L1461.5 901.5L1462.4 902.1L1463.3 902L1464.2 901.9L1465.1 901.5L1466 901.5L1466.9 901.8L1467.8 901.9L1468.7 902.2L1469.6 902.3L1470.5 901.9L1471.4 902.3L1472.3 902.1L1473.2 902L1474.1 902.1L1475 902.3L1475.9 902L1476.8 902.4L1477.7 902.4L1478.6 902.2L1479.5 901.5L1480.4 902.2L1481.3 902.4L1482.2 902.3L1483.1 901.9L1484 901.5L1484.9 901.7L1485.8 901.6L1486.7 901.6L1487.6 901.7L1488.5 901.9L1489.4 901.7L1490.3 901.7L1491.2 901.7L1492.1 901.8L1493 902.4L1493.9 901.8L1494.8 902L1495.7 901.9L1496.6 901.5L1497.5 902.1L1498.4 901.6L1499.3 901.7L1500.2 902.3L1501.1 902L1502 901.6L1502.9 902.2L1503.8 901.6L1504.7 901.9L1505.6 901.6L1506.5 902L1507.4 902.1L1508.3 902L1509.2 901.7L1510.1 901.8L1511 901.7L1511.9 901.8L1512.8 902.4L1513.7 901.9L1514.6 902.3L1515.5 901.7L1516.4 901.5L1517.3 901.6L1518.2 902.3L1519.1 901.6L1520 902.2L1520.9 902.1L1521.8 901.7L1522.7 902.3L1523.6 902.4L1524.5 901.6L1525.4 902.2L1526.3 902.3L1527.2 902.1L1527.4 902L1527.4 910.3L1527.2 910.7L1526.3 910.3L1525.4 910L1524.5 909.9L1523.6 910.6L1522.7 910.2L1521.8 910.1L1520.9 910.4L1520 910.1L1519.1 910.1L1518.2 910.1L1517.3 910L1516.4 910.1L1515.5 909.9L1514.6 910.5L1513.7 910.4L1512.8 910.1L1511.9 909.9L1511 910.4L1510.1 909.9L1509.2 910.1L1508.3 910.4L1507.4 910L1506.5 910.1L1505.6 910.4L1504.7 910.6L1503.8 910.4L1502.9 910.2L1502 909.8L1501.1 910L1500.2 910.6L1499.3 909.9L1498.4 910.5L1497.5 910.7L1496.6 910L1495.7 910L1494.8 910.2L1493.9 909.8L1493 910.7L1492.1 910.8L1491.2 910.7L1490.3 910.5L1489.4 910L1488.5 910.5L1487.6 910.3L1486.7 910.7L1485.8 909.9L1484.9 910.6L1484 910.1L1483.1 910.2L1482.2 910.2L1481.3 910.7L1480.4 910L1479.5 910L1478.6 910L1477.7 910.7L1476.8 909.9L1475.9 910.5L1475 910.2L1474.1 910.5L1473.2 910.6L1472.3 910.2L1471.4 910.6L1470.5 910.3L1469.6 910.3L1468.7 910.2L1467.8 910.2L1466.9 910.7L1466 910.4L1465.1 910.2L1464.2 910.4L1463.3 910.1L1462.4 910.7L1461.5 910.7L1460.6 909.9L1459.7 910.5L1458.8 910.2L1457.9 910.7L1457 910.6L1456.1 910.3L1455.2 910.5L1454.3 910.7L1453.4 909.9L1452.5 910.5L1451.6 910.2L1450.7 910.8L1449.8 910.6L1448.9 910.1L1448 910.5L1447.1 910.5L1446.2 910.3L1445.3 909.9L1444.4 910.6L1443.5 910.1L1442.6 910.1L1441.7 909.9L1440.8 910.2L1439.9 910.5L1439 910.8L1438.1 910L1437.2 910.1L1436.3 910.8L1435.4 910.2L1434.5 909.9L1433.6 910.3L1432.7 910.2L1431.8 910.4L1430.9 910.2L1430 910L1429.1 910L1428.2 910.1L1427.3 910.1L1426.4 910.1L1425.5 910.6L1424.6 910.5L1423.7 909.9L1422.8 910.4L1421.9 910.4L1421 910.6L1420.1 910.2L1419.2 910.5L1418.3 910.6L1417.4 910.7L1416.5 910.4L1415.6 910.8L1414.7 910.5L1413.8 910.3L1412.9 910.2L1412 909.9L1411.1 910.1L1410.2 910.5L1409.3 909.9L1408.4 910.7L1407.5 910.6L1406.6 910.1L1405.7 910.6L1404.8 910.7L1403.9 909.9L1403 909.9L1402.1 910.4L1401.2 910.1L1400.3 910.6L1399.4 910.2L1398.5 910.3L1397.6 910.7L1396.7 909.9L1395.8 910.8L1394.9 910.5L1394 910.3L1393.1 910.5L1392.2 910.6L1391.3 910L1390.4 910.3L1389.5 910.5L1388.6 910.3L1387.7 910.5L1386.8 910.5L1385.9 910.5L1385 910L1384.1 910.6L1383.2 910.1L1382.3 910.8L1381.4 910.5L1380.5 910.6L1379.6 910L1378.7 909.9L1377.8 910.6L1376.9 910.2L1376 910.1L1375.1 910.4L1374.2 910.6L1373.3 910.4L1372.4 910.6L1371.5 910.5L1370.6 910.1L1369.7 910.1L1368.8 910.1L1367.9 910.7L1367 910.3L1366.1 910.6L1365.2 910.4L1364.3 910.1L1363.4 910.1L1362.5 910.6L1361.6 910.1L1360.7 910.5L1359.8 910.1L1358.9 910.4L1358 910.7L1357.1 910.6L1356.2 910.2L1355.3 910.7L1354.4 909.9L1353.5 910.5L1352.6 910L1351.7 909.9L1350.8 910.7L1349.9 910.2L1349 910.5L1348.1 910.1L1347.2 910.1L1346.3 910.1L1345.4 910.1L1344.5 910.8L1343.6 910.2L1342.7 910.1L1341.8 910.4L1340.9 909.9L1340 909.9L1339.1 910L1338.2 910.7L1337.3 909.9L1336.4 910L1335.5 910L1334.6 910.2L1333.7 910.6L1332.8 910.5L1331.9 910.6L1331 910.2L1330.1 910.4L1329.2 909.9L1328.3 910.5L1327.4 910.3L1326.5 910.7L1325.6 910.6L1324.7 909.9L1323.8 909.9L1322.9 910.6L1322 910.7L1321.1 910.2L1320.2 909.9L1319.3 910L1318.4 910.6L1317.5 910L1316.6 910.8L1315.7 910.6L1314.8 910L1313.9 910L1313 910.1L1312.1 910.6L1311.2 910.3L1310.3 910.6L1309.4 910.2L1308.5 910.6L1307.6 910.6L1306.7 910L1305.8 910.6L1304.9 910L1304 910.2L1303.1 910.5L1302.2 910.1L1301.3 910L1300.4 910.6L1299.5 910.6L1298.6 910.2L1297.7 909.8L1296.8 910.3L1295.9 910.7L1295 910.3L1294.1 910.8L1293.2 910.4L1292.3 910.4L1291.4 910.7L1290.5 910L1289.6 910.1L1288.7 910.4L1287.8 910.7L1286.9 910.7L1286 910.1L1285.1 909.9L1284.2 910.2L1283.3 910.2L1282.4 910.4L1281.5 909.8L1280.6 910.4L1279.7 910.1L1278.8 910.4L1277.9 910.4L1277 910L1276.1 910.4L1275.2 909.8L1274.3 910.2L1273.4 910.7L1272.5 910.1L1271.6 909.9L1270.7 910.4L1269.8 909.9L1268.9 910.3L1268 910.1L1267.1 910L1266.2 910.1L1265.3 910.1L1264.4 910.3L1263.5 910L1262.6 910.8L1261.7 910L1260.8 910.1L1259.9 910.5L1259 910.3L1258.1 910.5L1257.2 910.2L1256.3 910.1L1255.4 910.4L1254.5 910.2L1253.6 910.2L1252.7 909.9L1251.8 910.4L1250.9 910.2L1250 910.4L1249.1 910.4L1248.2 909.9L1247.3 910.3L1246.4 910.7L1245.5 910.5L1244.6 910.4L1243.7 910.6L1242.8 910.7L1241.9 910.7L1241 910.4L1240.1 910L1239.2 910.7L1238.3 910.5L1237.4 910L1236.5 910.2L1235.6 910.6L1234.7 910.4L1233.8 910.2L1232.9 910.7L1232 910.1L1231.1 910.1L1230.2 910L1229.3 910.8L1228.4 910.3L1227.5 910L1226.6 909.9L1225.7 910L1224.8 910.2L1223.9 910.5L1223 909.9L1222.1 910.1L1221.2 910.6L1220.3 910.1L1219.4 910.2L1218.5 909.9L1217.6 910.2L1216.7 910.5L1215.8 910.7L1214.9 910.8L1214 910.1L1213.1 910.2L1212.2 910.3L1211.3 910.7L1210.4 910.4L1209.5 910.7L1208.6 909.9L1207.7 910L1206.8 910.6L1205.9 910.4L1205 910.4L1204.1 910.4L1203.2 910.2L1202.3 910.1L1201.4 910.6L1200.5 910.3L1199.6 910.2L1198.7 910.1L1197.8 909.9L1196.9 910.5L1196 909.9L1195.1 910.3L1194.2 909.9L1193.3 910.7L1192.4 910.2L1191.5 910.7L1190.6 910.8L1189.7 910.4L1188.8 910.5L1187.9 910.5L1187 910.5L1186.1 909.9L1185.2 910.5L1184.3 910.6L1183.4 910.1L1182.5 910.1L1181.6 910.6L1180.7 910.2L1179.8 910.5L1178.9 910.3L1178 910.3L1177.1 910.5L1176.2 910.4L1175.3 910.3L1174.4 910.1L1173.5 910.6L1172.6 910.3L1171.7 910.3L1170.8 910.6L1169.9 910.5L1169 910.7L1168.1 910.3L1167.2 910.4L1166.3 910.2L1165.4 910.5L1164.5 910L1163.6 910.5L1162.7 909.9L1161.8 909.9L1160.9 910.3L1160 910.7L1159.1 910.7L1158.2 910L1157.3 910L1156.4 910.3L1155.5 910.1L1154.6 910.2L1153.7 910.6L1152.8 910.2L1151.9 910.1L1151 910.1L1150.1 909.8L1149.2 910.5L1148.3 910.2L1147.4 910L1146.5 910.4L1145.6 910.5L1144.7 910.6L1143.8 910L1142.9 910.6L1142 910.3L1141.1 909.9L1140.2 910.2L1139.3 910.6L1138.4 910.6L1137.5 910.7L1136.6 910.3L1135.7 909.9L1134.8 910.3L1133.9 909.9L1133 910.7L1132.1 910.6L1131.2 910.3L1130.3 909.9L1129.4 910.2L1128.5 910.7L1127.6 910.6L1126.7 910.4L1125.8 910.8L1124.9 910.5L1124 909.9L1123.1 909.9L1122.2 909.8L1121.3 910.7L1120.4 910.4L1119.5 910L1118.6 909.8L1117.7 910.2L1116.8 910L1115.9 910.2L1115 910.4L1114.1 910.4L1113.2 910L1112.3 910L1111.4 910.7L1110.5 910.4L1109.6 910.6L1108.7 910L1107.8 910.5L1106.9 910.5L1106 910.5L1105.1 910.4L1104.2 910.6L1103.3 910.7L1102.4 910.5L1101.5 910.2L1100.6 910.4L1099.7 910.6L1098.8 910.4L1097.9 909.9L1097 910.4L1096.1 910.8L1095.2 909.9L1094.3 909.9L1093.4 910.4L1092.5 910.6L1091.6 910.4L1090.7 910.2L1089.8 909.8L1088.9 909.9L1088 910.1L1087.1 909.9L1086.2 910.3L1085.3 909.9L1084.4 910L1083.5 910.2L1082.6 910.6L1081.7 910.4L1080.8 910.1L1079.9 910.6L1079 910.5Z" fill="#e8a030" fill-opacity="1"/><g opacity="1"><path d="M470.9 951.5L470.9 880.9L471.8 881.1L472.7 886.7L473.6 886.7L474.5 878.3L475.4 879.4L476.3 878.2L477.2 887.6L478.1 898.3L479 890.8L479.9 882.1L480.8 883L481.7 882.5L482.6 878.3L483.5 880L484.4 879.3L485.3 881.8L485.6 881.8L485.6 951.5L485.6 950.7L484.5 951.2L483.4 951.8L482.3 952.2L481.2 950.7L480.1 950.4L479 952.2L477.9 950.8L476.8 951.5L475.7 952.1L474.6 951.8L473.5 950.8L472.4 950.6L471.3 952.3Z" fill="#d6cd40" stroke="#d6cd40" stroke-width="0.8" stroke-linejoin="round"/><path d="M1053.3 950.3L1053.3 901.1L1054.2 902.1L1055.1 901.2L1056 901.4L1056.6 901.9L1056.6 950.3L1056.6 949.7L1055.5 950.9L1054.4 949.3L1053.3 950.2Z" fill="#d6cd40" stroke="#d6cd40" stroke-width="0.8" stroke-linejoin="round"/><path d="M368.8 950.9V946.4" stroke="#efe343" stroke-width="2.2" stroke-opacity="0.95"/><path d="M370.4 949.8V841.7" stroke="#efe343" stroke-width="2.1" stroke-opacity="0.68"/><path d="M380.3 949.2V885.7" stroke="#efe343" stroke-width="2.0" stroke-opacity="0.75"/><path d="M941 948.7V889.1" stroke="#efe343" stroke-width="1.6" stroke-opacity="0.8"/><path d="M951.4 948.7V891.4" stroke="#efe343" stroke-width="1.6" stroke-opacity="0.8"/><path d="M1085.9 944.4V877.7" stroke="#efe343" stroke-width="1.7" stroke-opacity="0.85"/><path d="M1099.2 920.2V699.5" stroke="#efe343" stroke-width="2.0" stroke-opacity="0.9"/><path d="M1099.2 920.2V794.6" stroke="#efe343" stroke-width="2.9" stroke-opacity="0.95"/><path d="M1107 920.2V720" stroke="#efe343" stroke-width="2.0" stroke-opacity="0.9"/><path d="M1107 920.2V807.3" stroke="#efe343" stroke-width="2.9" stroke-opacity="0.95"/><path d="M31.7 949.8L370.1 949.8L370.5 938.5L371 926L371.6 932.8L372.3 937.3L373 938.7L374.9 938.2L376.9 937.6L378.9 937.6L380 936.8L380.6 928L381.9 928.1L383.9 928L385.9 928.1L387.9 928L389.9 928.1L391.9 928.4L393.9 928.4L395.9 928.1L397.9 928.4L399.9 928.4L401.9 928.1L403.9 928.4L406 928.3L408 928.5L410 928.5L412 928.7L414 928.5L416 928.5L418 928.7L420 928.6L422 928.7L424 929L426 928.7L428 928.8L430 929.1L432 929.5L434 929.4L436 929.8L438 929.9L440 930.1L442 930.4L444 930.6L446 931L448.1 931.1L450.1 931.5L452.2 931.5L454.3 931.8L456.4 932.3L458.4 932.6L460.5 932.8L462.6 932.7L464.7 933.1L466.8 933.3L468.8 933.7L470.9 933.8M485.9 936.1L487.5 936.9L489.1 937L490.7 937.6L492.3 937.6L493.9 937.7L495.6 937.9L497.2 937.5L498.8 937.6L500.4 937.3L502 936.6L503.6 936.4L504 947.2L505.6 947.6L507.6 947.3L509.6 947.1L511.6 947.6L513.6 947.7L515.6 946.9L517.6 947.4L519.7 946.8L521.7 946.8L523.7 947.4L525.7 947.3L527.7 947.2L529.7 947.1L531.7 947.2L533.7 947.2L535.7 947.1L537.7 946.8L539.7 947.2L541.7 947.3L543.8 947L545.8 947.5L547.8 947.5L549.8 946.8L551.8 947.2L553.8 947.2L555.8 947.7L557.8 947.3L559.8 947.2L561.8 947.7L563.8 947.1L565.8 947.1L567.8 947.7L569.9 947.1L571.9 947.3L573.9 947.1L575.9 947.4L577.9 947L579.9 947L581.9 947.7L583.9 947.7L585.9 947.1L587.9 946.8L589.9 947.5L591.9 947.3L593.9 947.2L596 947.4L598 947.4L600 947.4L602 947.4L604 947.2L606 947.5L608 947.4L610 947L612 947.7L614 947.2L616 947L618 947.4L620.1 947.5L622.1 946.9L624.1 947.5L626.1 947.6L628.1 947.3L630.1 947L632.1 947.7L634.1 947.4L636.1 947.4L638.1 946.9L640.1 947.3L642.1 946.9L644.1 947.6L646.2 947.4L648.2 947.1L650.2 946.9L652.2 947.3L654.2 947.5L656.2 947.6L658.2 947.2L660.2 947.6L662.2 946.9L664.2 946.9L666.2 947.6L668.2 947.5L670.3 946.9L672.3 947.1L674.3 946.9L676.3 947.4L678.3 947.6L680.3 947.5L682.3 946.9L684.3 947.5L686.3 947.4L688.3 947.3L690.3 947.3L692.3 947.3L694.3 946.8L696.4 947.6L698.4 947.8L700.4 946.8L702.4 946.9L704.4 946.8L706.4 947.3L708.4 946.8L710.4 946.8L712.4 947.5L714.4 947L716.4 946.9L718.4 947.1L720.5 947.2L722.5 947.5L724.5 947.4L726.5 947.5L728.5 947.7L730.5 947.2L732.5 947.5L734.5 946.9L736.5 947.7L738.5 946.8L740.5 947.1L742.5 946.8L744.5 946.8L746.6 946.8L748.6 947.2L750.6 947.7L752.6 947L754.6 947.6L756.6 947.5L758.6 947.1L760.6 947.2L762.6 947.3L764.6 946.8L766.6 947.1L768.6 947.4L770.6 947.5L772.7 946.9L774.7 947.3L776.7 947L778.7 947.4L780.7 947.6L782.7 947.2L784.7 946.9L786.7 947.6L788.7 947L790.7 946.8L792.7 946.9L794.7 946.9L796.8 947.8L798.8 947.1L800.8 946.9L802.8 947.7L804.8 947.5L806.8 947.5L808.8 947.2L810.8 947.3L812.8 947.3L814.8 947L816.8 947.8L818.8 947.7L820.8 947.6L822.9 947.6L824.9 947.7L826.9 946.8L828.9 946.9L830.9 947.7L832.9 947.2L834.9 947.4L836.9 947.4L838.9 947.4L840.9 947.1L842.9 947.2L844.9 947.4L847 947.6L849 947.4L851 947.6L853 947.2L855 947L857 947.4L859 947.7L859 945.5L859.8 944.8L860.6 944.1L861.4 943.5L862.2 944.8L863 943.4L863.8 944L864.6 944.6L865.4 944.8L866.2 944.4L867 943.7L867.8 944.7L868.6 943.8L869.4 944.5L870.2 945.3L871 944.3L871.8 943.8L872.6 945.9L873.4 944.7L874.2 944.7L875 943.1L875.8 942.9L876.6 944.8L877.4 943.1L878.2 943.4L879 945.2L880 947.3L882 947.6L884 946.9L886 947.1L888.1 946.9L890.1 947L892.1 947.1L894.1 947L896.1 947.2L898.1 947.7L900.2 947.2L902.2 947.8L904.2 947.6L906.2 947L908.2 947.7L910.2 947.7L912.3 947.7L914.3 946.9L916.3 947.6L918.3 947.7L920.3 946.9L922.4 947.6L924.4 946.9L926.4 947.1L928.4 946.9L930.4 946.8L932.4 947.2L934.5 946.9L936.5 947.7L938.5 947L940.5 947.2L941.2 938.5L941.8 936.2L943 938.2L944 938.6L945.5 938.9L947 938.5L948.4 938.3L949.9 938.7L950.8 937.3L951.7 929.4L951.5 928.3L953.6 928.2L955.6 928.1L957.7 928.4L959.8 928.4L961.8 928.4L963.9 928.3L965.9 928.3L968 928.4L970.1 928.5L972.1 928.5L974.2 928.5L976.2 928.5L978.3 928.7L980.4 928.5L982.4 928.3L984.5 928.6L986.6 928.5L988.6 928.8L990.7 928.6L992.8 928.6L994.8 928.6L996.9 928.7L998.9 928.8L1001 928.7L1003 928.6L1005.1 929.1L1007.1 929.2L1009.2 929L1011.2 929.1L1013.3 929.4L1015.4 929.6L1017.4 929.6L1019.5 929.9L1021.6 930L1023.6 930.2L1025.7 930.2L1027.8 930.4L1029.8 930.6L1031.9 931.5L1033.9 931.5L1036 931.9L1038.1 931.8L1040.1 932.1L1042.2 932L1044.2 932.3L1046.3 932.5L1048.4 932.7L1050.4 932.9L1052.5 932.8M1057.5 933.6L1059.5 933.7L1061.5 933.5L1063.5 933.6L1065.5 933.7L1067.5 933.8L1069.5 933.7L1071.5 933.6L1073.6 933.9L1075.6 933.7L1077.6 933.6L1079.6 933.9L1081.6 934L1083.6 934L1085.6 933.8L1086.3 922.4L1088 922L1089.4 921.7L1090.7 921.7L1092.1 922L1093.4 922L1094.8 921.9L1096.1 921.8L1097.5 921.4L1098.6 907.8L1099.5 905.9L1100.1 905.7L1100.8 908.1L1101.4 905.8L1102 907.8L1102.6 907.3L1103.3 906.1L1103.9 908.5L1104.5 908.4L1105.1 905.6L1105.8 907.6L1106.4 907.3L1107.6 905.9" fill="none" stroke="#efe343" stroke-width="2.6" stroke-linejoin="round"/>
</g><path d="M1107.6 901.5L1108.5 902.1L1109.4 901.6L1110.3 901.9L1111.2 901.1L1112.1 901.5L1113 901.8L1113.9 902L1114.8 901.2L1115.7 901.2L1116.6 901.3L1117.5 901.8L1118.4 901.4L1119.3 901.8L1120.2 901.1L1121.1 901.5L1122 901.6L1122.9 901.4L1123.8 901.5L1124.7 901.4L1125.6 901.9L1126.5 901.4L1127.4 901.2L1128.3 901.7L1129.2 901.5L1130.1 901.4L1131 901.8L1131.9 902L1132.8 901.3L1133.7 901.3L1134.6 901.8L1135.5 901.2L1136.4 901.6L1137.3 901.3L1138.2 901.7L1139.1 901.5L1140 901.7L1140.9 902L1141.8 902L1142.7 901.3L1143.6 901.9L1144.5 901.7L1145.4 901.3L1146.3 901.5L1147.2 901.7L1148.1 901.6L1149 901.9L1149.9 901.3L1150.8 901.3L1151.7 901.1L1152.6 901.5L1153.5 901.5L1154.4 901.4L1155.3 901.2L1156.2 901.5L1157.1 902.1L1158 901.4L1158.9 901.6L1159.8 901.9L1160.7 902L1161.6 901.4L1162.5 901.5L1163.4 901.2L1164.3 901.3L1165.2 902L1166.1 901.8L1167 901.5L1167.9 901.8L1168.8 901.4L1169.7 901.2L1170.6 901.2L1171.5 901.3L1172.4 901.3L1173.3 901.2L1174.2 901.3L1175.1 902L1176 902L1176.9 901.9L1177.8 901.4L1178.7 901.7L1179.6 901.8L1180.5 901.3L1181.4 901.9L1182.3 901.4L1183.2 901.7L1184.1 901.5L1185 902.1L1185.9 901.3L1186.8 901.6L1187.7 901.9L1188.6 901.7L1189.5 902L1190.4 901.9L1191.3 902L1192.2 901.6L1193.1 901.4L1194 901.7L1194.9 902L1195.8 901.9L1196.7 901.6L1197.6 901.5L1198.5 901.9L1199.4 901.4L1200.3 901.3L1201.2 901.2L1202.1 901.8L1203 901.3L1203.9 901.7L1204.8 901.4L1205.7 901.5L1206.6 902L1207.5 901.9L1208.4 902L1209.3 901.2L1210.2 901.1L1211.1 901.3L1212 901.2L1212.9 901.8L1213.8 901.1L1214.7 901.8L1215.6 902L1216.5 901.7L1217.4 901.2L1218.3 901.3L1219.2 901.3L1220.1 901.2L1221 901.7L1221.9 901.3L1222.8 901.8L1223.7 901.4L1224.6 901.4L1225.5 901.6L1226.4 901.4L1227.3 901.6L1228.2 901.4L1229.1 901.8L1230 901.4L1230.9 901.2L1231.8 901.2L1232.7 901.7L1233.6 902L1234.5 901.1L1235.4 901.5L1236.3 902L1237.2 901.8L1238.1 901.9L1239 901.5L1239.9 901.8L1240.8 901.9L1241.7 901.7L1242.6 901.5L1243.5 901.5L1244.4 901.9L1245.3 901.3L1246.2 902L1247.1 901.9L1248 902L1248.9 901.8L1249.8 901.5L1250.7 901.3L1251.6 901.7L1252.5 901.6L1253.4 901.3L1254.3 901.3L1255.2 901.5L1256.1 901.4L1257 901.7L1257.9 902L1258.8 901.4L1259.7 901.4L1260.6 901.9L1261.5 901.1L1262.4 901.6L1263.3 901.9L1264.2 901.2L1265.1 901.2L1266 901.5L1266.9 901.5L1267.8 901.1L1268.7 901.1L1269.6 901.3L1270.5 901.1L1271.4 901.8L1272.3 901.9L1273.2 901.4L1274.1 901.6L1275 902L1275.9 901.8L1276.8 901.7L1277.7 901.3L1278.6 902L1279.5 901.7L1280.4 901.9L1281.3 901.4L1282.2 901.1L1283.1 901.7L1284 901.8L1284.9 901.6L1285.8 901.7L1286.7 901.8L1287.6 901.2L1288.5 901.8L1289.4 901.3L1290.3 901.9L1291.2 901.5L1292.1 902L1293 901.3L1293.9 901.1L1294.8 901.1L1295.7 901.9L1296.6 901.6L1297.5 902L1298.4 902L1299.3 901.8L1300.2 901.7L1301.1 902L1302 901.5L1302.9 901.2L1303.8 901.8L1304.7 901.3L1305.6 901.6L1306.5 901.5L1307.4 901.9L1308.3 901.4L1309.2 901.2L1310.1 901.4L1311 901.3L1311.9 901.7L1312.8 901.9L1313.7 901.4L1314.6 901.5L1315.5 901.7L1316.4 901.3L1317.3 901.1L1318.2 901.8L1319.1 901.7L1320 901.3L1320.9 901.5L1321.8 901.5L1322.7 901.6L1323.6 901.4L1324.5 902L1325.4 901.7L1326.3 901.2L1327.2 901.4L1328.1 901.2L1329 901.7L1329.9 901.8L1330.8 901.1L1331.7 901.8L1332.6 901.8L1333.5 901.8L1334.4 902L1335.3 901.9L1336.2 901.6L1337.1 901.3L1338 901.3L1338.9 901.8L1339.8 902L1340.7 901.6L1341.6 901.5L1342.5 901.8L1343.4 901.9L1344.3 901.9L1345.2 901.4L1346.1 901.9L1347 901.3L1347.9 901.9L1348.8 901.2L1349.7 901.1L1350.6 901.7L1351.5 901.7L1352.4 901.8L1353.3 901.9L1354.2 901.7L1355.1 902L1356 901.2L1356.9 901.1L1357.8 901.7L1358.7 901.6L1359.6 901.8L1360.5 901.7L1361.4 901.3L1362.3 901.6L1363.2 901.6L1364.1 901.3L1365 901.5L1365.9 901.2L1366.8 901.1L1367.7 901.9L1368.6 901.9L1369.5 901.1L1370.4 901.2L1371.3 902.1L1372.2 901.3L1373.1 901.4L1374 901.3L1374.9 901.5L1375.8 901.9L1376.7 901.8L1377.6 901.7L1378.5 901.7L1379.4 901.1L1380.3 901.2L1381.2 901.8L1382.1 901.8L1383 901.6L1383.9 901.7L1384.8 901.8L1385.7 901.6L1386.6 901.5L1387.5 901.1L1388.4 901.6L1389.3 902L1390.2 901.2L1391.1 902L1392 901.7L1392.9 901.7L1393.8 901.5L1394.7 901.6L1395.6 901.4L1396.5 901.8L1397.4 901.7L1398.3 901.4L1399.2 901.5L1400.1 901.9L1401 901.5L1401.9 902L1402.8 901.8L1403.7 901.5L1404.6 901.5L1405.5 901.3L1406.4 901.2L1407.3 901.4L1408.2 901.2L1409.1 901.6L1410 901.8L1410.9 901.3L1411.8 902L1412.7 901.7L1413.6 901.3L1414.5 901.8L1415.4 901.6L1416.3 901.5L1417.2 901.6L1418.1 901.1L1419 902L1419.9 901.3L1420.8 902L1421.7 901.6L1422.6 901.2L1423.5 901.7L1424.4 901.5L1425.3 901.9L1426.2 902L1427.1 902L1428 901.6L1428.9 902L1429.8 901.6L1430.7 901.5L1431.6 901.1L1432.5 901.6L1433.4 901.8L1434.3 901.9L1435.2 901.5L1436.1 901.3L1437 901.2L1437.9 901.9L1438.8 901.6L1439.7 901.9L1440.6 901.9L1441.5 901.2L1442.4 901.2L1443.3 901.9L1444.2 902L1445.1 901.7L1446 901.3L1446.9 901.7L1447.8 901.9L1448.7 901.8L1449.6 901.7L1450.5 901.9L1451.4 901.5L1452.3 901.4L1453.2 901.4L1454.1 901.9L1455 901.7L1455.9 901.5L1456.8 901.6L1457.7 901.3L1458.6 901.6L1459.5 901.8L1460.4 901.4L1461.3 901.3L1462.2 901.7L1463.1 901.6L1464 901.4L1464.9 901.4L1465.8 902L1466.7 901.2L1467.6 901.5L1468.5 901.6L1469.4 901.5L1470.3 901.9L1471.2 901.3L1472.1 901.8L1473 901.2L1473.9 901.1L1474.8 901.3L1475.7 902.1L1476.6 901.4L1477.5 901.6L1478.4 901.8L1479.3 901.5L1480.2 902L1481.1 901.8L1482 901.9L1482.9 901.9L1483.8 901.5L1484.7 902L1485.6 901.9L1486.5 901.9L1487.4 901.5L1488.3 901.2L1489.2 901.7L1490.1 901.8L1491 901.2L1491.9 901.1L1492.8 901.6L1493.7 901.1L1494.6 901.5L1495.5 901.9L1496.4 901.1L1497.3 901.4L1498.2 902L1499.1 901.3L1500 901.6L1500.9 901.7L1501.8 901.9L1502.7 901.8L1503.6 901.7L1504.5 901.3L1505.4 901.4L1506.3 901.3L1507.2 901.5L1508.1 901.7L1509 901.9L1509.9 901.9L1510.8 901.6L1511.7 901.2L1512.6 901.7L1513.5 901.5L1514.4 901.2L1515.3 901.9L1516.2 901.3L1517.1 901.3L1518 901.5L1518.9 901.5L1519.8 901.9L1520.7 901.2L1521.6 902.1L1522.5 901.3L1523.4 901.6L1524.3 901.5L1525.2 901.4L1526.1 901.8L1527 901.9L1527.4 901.6L1527.4 909.8L1527 910.3L1526.1 909.6L1525.2 910.3L1524.3 910L1523.4 909.3L1522.5 909.9L1521.6 910.2L1520.7 910.2L1519.8 909.7L1518.9 910.1L1518 909.7L1517.1 910.2L1516.2 909.8L1515.3 909.3L1514.4 910.1L1513.5 909.6L1512.6 910.3L1511.7 909.6L1510.8 909.4L1509.9 909.6L1509 909.7L1508.1 910.3L1507.2 909.7L1506.3 910L1505.4 909.9L1504.5 909.8L1503.6 909.5L1502.7 909.8L1501.8 909.7L1500.9 909.6L1500 909.4L1499.1 910.1L1498.2 909.6L1497.3 909.4L1496.4 909.5L1495.5 910.1L1494.6 909.8L1493.7 910.1L1492.8 910L1491.9 909.8L1491 910.2L1490.1 910L1489.2 910.2L1488.3 909.8L1487.4 909.4L1486.5 910.2L1485.6 909.8L1484.7 909.8L1483.8 910.2L1482.9 909.9L1482 909.9L1481.1 909.6L1480.2 909.8L1479.3 909.9L1478.4 909.6L1477.5 909.7L1476.6 910L1475.7 909.6L1474.8 910L1473.9 909.5L1473 909.8L1472.1 909.4L1471.2 909.8L1470.3 910.2L1469.4 909.5L1468.5 909.8L1467.6 909.5L1466.7 909.8L1465.8 909.8L1464.9 909.7L1464 910L1463.1 910.1L1462.2 909.3L1461.3 909.3L1460.4 910.1L1459.5 909.4L1458.6 909.7L1457.7 909.5L1456.8 910.2L1455.9 909.7L1455 909.8L1454.1 909.6L1453.2 909.7L1452.3 910.1L1451.4 910.1L1450.5 909.9L1449.6 910.2L1448.7 909.6L1447.8 910.1L1446.9 909.9L1446 910.2L1445.1 909.5L1444.2 909.8L1443.3 910.1L1442.4 909.9L1441.5 910.2L1440.6 909.5L1439.7 909.5L1438.8 910L1437.9 910.2L1437 909.6L1436.1 909.4L1435.2 910L1434.3 909.8L1433.4 909.4L1432.5 910.1L1431.6 909.7L1430.7 910L1429.8 909.5L1428.9 910.1L1428 909.7L1427.1 909.4L1426.2 909.7L1425.3 909.9L1424.4 909.4L1423.5 909.9L1422.6 909.5L1421.7 909.9L1420.8 910.3L1419.9 909.3L1419 909.9L1418.1 909.6L1417.2 910.2L1416.3 909.7L1415.4 909.9L1414.5 909.9L1413.6 910.1L1412.7 910.3L1411.8 910.3L1410.9 909.7L1410 910.1L1409.1 909.4L1408.2 909.9L1407.3 910.2L1406.4 909.9L1405.5 909.5L1404.6 909.6L1403.7 909.4L1402.8 910.3L1401.9 910L1401 910.2L1400.1 909.9L1399.2 910.2L1398.3 909.5L1397.4 909.9L1396.5 909.8L1395.6 909.9L1394.7 909.5L1393.8 909.4L1392.9 910.1L1392 909.3L1391.1 909.5L1390.2 909.5L1389.3 909.9L1388.4 909.7L1387.5 909.8L1386.6 909.5L1385.7 909.8L1384.8 909.4L1383.9 909.7L1383 909.6L1382.1 910.2L1381.2 909.4L1380.3 909.5L1379.4 909.4L1378.5 909.7L1377.6 910L1376.7 909.8L1375.8 909.7L1374.9 909.9L1374 910.2L1373.1 909.8L1372.2 909.3L1371.3 909.5L1370.4 910.2L1369.5 909.9L1368.6 910.2L1367.7 910L1366.8 909.5L1365.9 910.1L1365 909.4L1364.1 910.1L1363.2 909.8L1362.3 909.8L1361.4 909.7L1360.5 909.6L1359.6 910.3L1358.7 909.6L1357.8 909.4L1356.9 910.1L1356 909.3L1355.1 910.1L1354.2 909.4L1353.3 910.2L1352.4 910.2L1351.5 909.3L1350.6 910.2L1349.7 909.8L1348.8 910.3L1347.9 909.5L1347 910.1L1346.1 910.2L1345.2 909.7L1344.3 909.3L1343.4 909.4L1342.5 909.4L1341.6 910.3L1340.7 910L1339.8 910L1338.9 909.4L1338 910.3L1337.1 909.7L1336.2 909.6L1335.3 910.2L1334.4 910.1L1333.5 909.3L1332.6 910.2L1331.7 909.9L1330.8 909.4L1329.9 910L1329 909.5L1328.1 910.1L1327.2 910.1L1326.3 909.4L1325.4 909.8L1324.5 909.7L1323.6 909.4L1322.7 910L1321.8 909.8L1320.9 910.3L1320 909.4L1319.1 909.5L1318.2 909.8L1317.3 910.1L1316.4 909.9L1315.5 909.9L1314.6 909.9L1313.7 909.3L1312.8 910.1L1311.9 909.8L1311 909.7L1310.1 909.4L1309.2 909.8L1308.3 909.4L1307.4 910.3L1306.5 910L1305.6 909.5L1304.7 909.5L1303.8 910.2L1302.9 909.5L1302 909.6L1301.1 909.9L1300.2 910L1299.3 909.5L1298.4 910L1297.5 909.8L1296.6 910L1295.7 910.3L1294.8 910.3L1293.9 909.5L1293 909.8L1292.1 910.1L1291.2 910.1L1290.3 909.8L1289.4 910.3L1288.5 910.1L1287.6 909.5L1286.7 909.8L1285.8 909.5L1284.9 909.8L1284 909.8L1283.1 910.1L1282.2 909.4L1281.3 909.4L1280.4 909.6L1279.5 910.2L1278.6 910L1277.7 910L1276.8 909.6L1275.9 909.9L1275 909.6L1274.1 909.7L1273.2 910L1272.3 910.2L1271.4 909.4L1270.5 909.4L1269.6 909.9L1268.7 909.8L1267.8 909.4L1266.9 909.9L1266 909.4L1265.1 909.3L1264.2 909.6L1263.3 910.1L1262.4 910.2L1261.5 910L1260.6 910L1259.7 909.7L1258.8 909.9L1257.9 909.8L1257 909.8L1256.1 910.2L1255.2 909.8L1254.3 910.1L1253.4 909.7L1252.5 910.2L1251.6 909.7L1250.7 909.5L1249.8 909.7L1248.9 909.5L1248 909.8L1247.1 909.4L1246.2 909.4L1245.3 910.2L1244.4 910.2L1243.5 910.1L1242.6 909.5L1241.7 909.5L1240.8 909.8L1239.9 909.4L1239 910.3L1238.1 909.7L1237.2 910.3L1236.3 909.7L1235.4 910.2L1234.5 910.2L1233.6 909.9L1232.7 909.9L1231.8 909.6L1230.9 909.9L1230 909.4L1229.1 909.5L1228.2 910.2L1227.3 909.6L1226.4 910.3L1225.5 910.1L1224.6 909.9L1223.7 909.7L1222.8 910.1L1221.9 909.8L1221 910.1L1220.1 909.9L1219.2 909.8L1218.3 909.6L1217.4 910.1L1216.5 909.6L1215.6 909.9L1214.7 909.5L1213.8 910.2L1212.9 909.7L1212 910.3L1211.1 909.4L1210.2 909.8L1209.3 910.1L1208.4 909.7L1207.5 910.3L1206.6 910.2L1205.7 910.3L1204.8 909.4L1203.9 910.2L1203 909.7L1202.1 910L1201.2 910L1200.3 909.8L1199.4 910L1198.5 910.2L1197.6 910L1196.7 910.1L1195.8 910.2L1194.9 909.4L1194 909.9L1193.1 910.2L1192.2 909.9L1191.3 910.3L1190.4 909.8L1189.5 910.2L1188.6 910.1L1187.7 910.1L1186.8 910.1L1185.9 910.2L1185 910.1L1184.1 910.1L1183.2 909.8L1182.3 909.9L1181.4 909.4L1180.5 909.9L1179.6 909.8L1178.7 909.7L1177.8 909.8L1176.9 909.8L1176 910.1L1175.1 910.3L1174.2 909.8L1173.3 909.9L1172.4 909.4L1171.5 910L1170.6 909.6L1169.7 909.7L1168.8 910.2L1167.9 909.5L1167 909.4L1166.1 910.2L1165.2 909.9L1164.3 909.7L1163.4 910.2L1162.5 909.4L1161.6 909.9L1160.7 909.8L1159.8 909.8L1158.9 909.9L1158 909.8L1157.1 909.6L1156.2 909.6L1155.3 909.8L1154.4 910L1153.5 909.4L1152.6 909.7L1151.7 909.9L1150.8 909.4L1149.9 910.3L1149 910.1L1148.1 909.7L1147.2 910.1L1146.3 910.2L1145.4 909.6L1144.5 909.6L1143.6 910.1L1142.7 909.6L1141.8 910.2L1140.9 910L1140 909.5L1139.1 909.6L1138.2 909.9L1137.3 910L1136.4 910.1L1135.5 910.3L1134.6 909.9L1133.7 909.9L1132.8 909.8L1131.9 909.6L1131 910.1L1130.1 909.9L1129.2 909.8L1128.3 909.6L1127.4 910.2L1126.5 910.2L1125.6 909.4L1124.7 909.7L1123.8 910.1L1122.9 909.6L1122 910L1121.1 910.2L1120.2 909.6L1119.3 909.6L1118.4 909.5L1117.5 909.6L1116.6 909.6L1115.7 909.9L1114.8 910.2L1113.9 909.4L1113 909.7L1112.1 910.2L1111.2 909.9L1110.3 909.7L1109.4 909.8L1108.5 910L1107.6 909.6Z" fill="#ece04a" fill-opacity="1"/><g opacity="0.89"><path d="M411.4 951.5L411.4 882.3L412.3 880.4L413.2 880.4L414.1 879.3L415 881.9L415.9 902.5L416.8 924.8L417.7 904L418.6 881L419.5 879.5L420.4 886.5L421.3 888.3L422.2 881L423.1 891.8L424 890.7L424.9 880L425.8 881.9L426.7 883.2L427.6 881.2L428 882.9L428 951.5L428 951L426.9 951L425.8 951.6L424.7 951.5L423.6 951.3L422.5 950.8L421.4 951.3L420.3 951.6L419.2 951.4L418.1 952.3L417 952.3L415.9 951L414.8 950.4L413.7 951.2L412.6 951.6L411.5 952Z" fill="#92dc8a" stroke="#92dc8a" stroke-width="0.8" stroke-linejoin="round"/><path d="M984 950.4L984 881.3L984.9 882.5L985.8 881.7L986.7 884.3L987.6 882.8L988.5 883.9L989.4 884L990.3 883.3L991.2 880.4L992.1 882.6L993 882.6L993.9 881.5L994.8 883.4L995.7 884.6L996.6 881.9L997.5 882L998.4 881.3L999.3 882.4L1000 883.5L1000 950.4L1000 949.9L998.9 949.8L997.8 950.7L996.7 950.2L995.6 950.3L994.5 950.8L993.4 950.4L992.3 950.1L991.2 949.4L990.1 949.4L989 950.7L987.9 949.9L986.8 951.1L985.7 951.1L984.6 950.2Z" fill="#92dc8a" stroke="#92dc8a" stroke-width="0.8" stroke-linejoin="round"/><path d="M314.7 949.8V840.6" stroke="#a8e294" stroke-width="2.1" stroke-opacity="0.68"/><path d="M324.6 949.2V879.5" stroke="#a8e294" stroke-width="2.0" stroke-opacity="0.75"/><path d="M884 948.7V878.9" stroke="#a8e294" stroke-width="1.6" stroke-opacity="0.8"/><path d="M892.6 948.7V883.5" stroke="#a8e294" stroke-width="1.6" stroke-opacity="0.8"/><path d="M1028.9 927.1V887.4" stroke="#a8e294" stroke-width="1.7" stroke-opacity="0.85"/><path d="M1041.2 920.2V699.6" stroke="#a8e294" stroke-width="2.0" stroke-opacity="0.9"/><path d="M1041.2 920.2V794.7" stroke="#a8e294" stroke-width="2.9" stroke-opacity="0.95"/><path d="M1051.7 920.2V704.8" stroke="#a8e294" stroke-width="2.0" stroke-opacity="0.9"/><path d="M1051.7 920.2V797.9" stroke="#a8e294" stroke-width="2.9" stroke-opacity="0.95"/><path d="M31.7 949.8L314.4 949.8L314.8 938.5L315.3 926L315.9 932.8L316.6 937.3L317.3 938.7L319.2 938.2L321.2 937.6L323.2 937.6L324.3 936.8L324.9 929.7L326.2 929.8L328.2 929.5L330.3 929.6L332.3 929.8L334.3 929.8L336.3 929.8L338.4 929.7L340.4 929.7L342.4 930L344.5 930.1L346.5 929.7L348.5 929.9L350.5 929.8L352.6 930.2L354.6 930L356.6 929.9L358.7 930.1L360.7 929.8L362.7 929.9L364.7 930.3L366.8 930.3L368.8 930.1L370.8 929.9L372.9 930.2L374.9 930.3L376.9 930.2L378.9 930.4L381 930.3L383 930.3L385 930.3L387.1 930.4L389.1 930.4L391.1 930.5L393.1 930.4L395.2 930.5L397.2 930.6L399.2 930.3L401.3 930.4L403.3 930.4L405.3 930.6L407.3 930.3L409.4 930.3L411.4 930.7M428.3 936.2L429.9 936.5L431.4 937.1L433 937.6L434.6 937.6L436.1 938L437.7 937.8L439.3 937.4L440.9 937.2L442.4 936.7L444 936.3L444.4 946.8L446 946.7L448 946.3L450 947.3L452 946.5L454 946.5L456 946.4L458 946.5L460 946.5L462 946.8L464 946.7L466 946.9L468 947.2L470 946.4L472 946.7L474 947.1L476 946.8L478 946.8L480 946.9L482 947L484 946.8L486 946.7L488 946.7L490 946.8L492 947.3L494 947.1L496 947.1L498 946.7L500 946.4L502 946.5L504 946.5L506 946.5L508 947L510 946.4L512 946.6L514 947.2L516 947.3L518 947.3L520 946.5L522 947.1L524 947.2L526 946.7L528 947L530 947.2L532 947.1L534 946.8L536 947.1L538 947L540 946.6L542 946.8L544 947L546 946.8L548 947.3L550 946.9L552 946.9L554 947.1L556 947.2L558 946.4L560 946.8L562 947.1L564 946.7L566 946.5L568 947.3L570 947.3L572 947.2L574 946.6L576 947.1L578 946.6L580 946.6L582 946.7L584 947.1L586 946.3L588 946.5L590 946.8L592 947.1L594 946.6L596 946.9L598 946.7L600 947L602 946.7L604 947.2L606 947L608 946.3L610 946.4L612 947L614 946.4L616 947L618 946.3L620 946.5L622 946.9L624 947L626 947.3L628 946.4L630 947.3L632 946.5L634 946.3L636 946.7L638 947.1L640 946.4L642 946.3L644 946.6L646 946.8L648 946.9L650 947L652 947.1L654 946.6L656 946.9L658 947.1L660 947.2L662 946.6L664 947L666 946.8L668 947L670 946.4L672 946.4L674 947.3L676 947.1L678 947L680 946.3L682 946.5L684 947L686 947.1L688 946.6L690 946.5L692 946.4L694 947L696 946.4L698 946.6L700 946.8L702 946.3L704 947.1L706 946.6L708 947.2L710 947.1L712 946.4L714 947.1L716 946.5L718 946.7L720 946.4L722 946.9L724 947L726 947L728 946.4L730 946.7L732 946.3L734 946.4L736 947.2L738 946.7L740 947.2L742 947.3L744 947.2L746 946.4L748 946.5L750 946.5L752 947L754 946.7L756 946.5L758 946.9L760 946.7L762 947.1L764 947.2L766 947L768 946.4L770 946.7L772 946.4L774 946.8L776 947L778 946.5L780 946.5L782 947.3L784 946.6L786 947.2L788 947.2L790 946.4L792 947.3L794 947.1L796 946.3L798 946.9L800 947.2L802 947.1L802 944.8L802.8 943.1L803.6 945.3L804.4 942.6L805.2 944.4L806 942.4L806.8 942.6L807.6 944.7L808.4 944.8L809.2 944L810 945.3L810.8 943.4L811.6 945.5L812.4 945.6L813.2 942.3L814 944.7L814.8 943.6L815.6 944.1L816.4 944.6L817.2 945.4L818 942.6L818.8 942.4L819.6 942.4L820.4 945.3L821.2 944.9L822 943.6L823 946.3L825 946.8L827 946.6L829 946.6L831.1 947L833.1 946.8L835.1 947L837.1 947.1L839.1 947.2L841.1 947L843.2 946.3L845.2 946.8L847.2 946.6L849.2 946.6L851.2 946.3L853.2 946.9L855.3 947L857.3 947L859.3 947L861.3 946.4L863.3 946.4L865.4 947L867.4 947L869.4 946.8L871.4 946.7L873.4 946.7L875.4 947.1L877.5 947.3L879.5 947.1L881.5 947.2L883.5 946.7L884.2 938.5L884.8 936.2L886 938.2L887 938.9L888.4 938.8L889.7 938.5L891.1 938.6L892 937.3L892.9 929.4L894.5 929L896.5 929.1L898.6 929L900.6 929.3L902.6 929.2L904.7 929L906.7 929.4L908.7 929L910.8 929.4L912.8 929.1L914.8 929L916.9 929.1L918.9 929.3L920.9 929.5L923 929.3L925 929.1L927 929.4L929.1 929.1L931.1 929.5L933.1 929.2L935.2 929.6L937.2 929.5L939.2 929.2L941.3 929.3L943.3 929.2L945.4 929.3L947.4 929.3L949.4 929.4L951.5 929.6L953.5 929.5L955.5 929.6L957.6 929.4L959.6 929.4L961.6 929.6L963.7 929.7L965.7 929.3L967.7 929.4L969.8 929.6L971.8 929.6L973.8 929.5L975.9 929.6L977.9 929.7L979.9 929.7L982 929.8L984 929.9M1000.5 931.8L1002.5 932.1L1004.5 931.9L1006.5 931.9L1008.5 932.2L1010.5 932.1L1012.5 932L1014.5 932.3L1016.6 932.2L1018.6 932.2L1020.6 932.3L1022.6 932.2L1024.6 932.2L1026.6 932.3L1028.6 932.5L1029.3 920.9L1031 922.3L1032.4 922.2L1033.7 922.1L1035.1 921.8L1036.4 921.6L1037.8 922L1039.1 921.5L1040.5 921.4L1041.6 907.8L1042.5 907.9L1043.1 907.2L1043.7 908.5L1044.3 906.3L1045 908.9L1045.6 905.3L1046.2 905.9L1046.8 906.5L1047.4 907.9L1048 905.4L1048.6 905.2L1049.3 908.2L1049.9 905.8L1050.5 905.5L1051.1 906.1L1052.3 905.9" fill="none" stroke="#a8e294" stroke-width="2.6" stroke-linejoin="round"/>
</g><path d="M1052.3 901.9L1053.2 901.7L1054.1 902.2L1055 902.2L1055.9 902.3L1056.8 901.7L1057.7 902.5L1058.6 902.2L1059.5 902.3L1060.4 901.9L1061.3 902.4L1062.2 902.6L1063.1 902L1064 902.4L1064.9 902.1L1065.8 902L1066.7 901.9L1067.6 901.8L1068.5 902.1L1069.4 901.8L1070.3 902L1071.2 902.3L1072.1 901.8L1073 901.9L1073.9 901.7L1074.8 901.7L1075.7 902.1L1076.6 902.3L1077.5 902.3L1078.4 902.6L1079.3 902.2L1080.2 902.2L1081.1 901.9L1082 902L1082.9 902.4L1083.8 902.3L1084.7 901.7L1085.6 902.1L1086.5 902.2L1087.4 902.2L1088.3 901.6L1089.2 902.4L1090.1 902.1L1091 902.6L1091.9 902.2L1092.8 901.8L1093.7 901.9L1094.6 901.9L1095.5 901.9L1096.4 902L1097.3 902.2L1098.2 902L1099.1 901.8L1100 901.9L1100.9 902L1101.8 902.3L1102.7 901.8L1103.6 902.5L1104.5 902.1L1105.4 902.6L1106.3 901.9L1107.2 902.3L1108.1 902.6L1109 901.7L1109.9 902.2L1110.8 902L1111.7 902.4L1112.6 902.3L1113.5 901.8L1114.4 902.2L1115.3 901.9L1116.2 902L1117.1 901.8L1118 902L1118.9 902.1L1119.8 901.8L1120.7 902.3L1121.6 901.7L1122.5 901.8L1123.4 901.7L1124.3 902.3L1125.2 901.9L1126.1 902.4L1127 902.4L1127.9 902.2L1128.8 901.9L1129.7 902.3L1130.6 902.5L1131.5 901.9L1132.4 901.9L1133.3 901.9L1134.2 902.3L1135.1 902.2L1136 902.5L1136.9 902.5L1137.8 901.7L1138.7 902.6L1139.6 901.8L1140.5 902L1141.4 901.8L1142.3 901.9L1143.2 902.2L1144.1 902.2L1145 902.4L1145.9 902.2L1146.8 902.4L1147.7 902.3L1148.6 901.7L1149.5 902.6L1150.4 901.8L1151.3 902.2L1152.2 901.7L1153.1 901.7L1154 902.5L1154.9 902.6L1155.8 902L1156.7 902.2L1157.6 902.2L1158.5 901.7L1159.4 902.5L1160.3 902.6L1161.2 902.5L1162.1 902.6L1163 901.9L1163.9 901.8L1164.8 902.2L1165.7 901.7L1166.6 902.4L1167.5 901.7L1168.4 902.3L1169.3 902.1L1170.2 902.5L1171.1 902.2L1172 901.7L1172.9 902L1173.8 901.9L1174.7 901.9L1175.6 901.7L1176.5 901.7L1177.4 901.8L1178.3 902.5L1179.2 902.1L1180.1 901.6L1181 902.1L1181.9 902.5L1182.8 901.9L1183.7 902.6L1184.6 902.5L1185.5 902.5L1186.4 902.2L1187.3 902.3L1188.2 901.8L1189.1 901.8L1190 902.2L1190.9 902.1L1191.8 902.3L1192.7 901.7L1193.6 902.5L1194.5 902.2L1195.4 901.9L1196.3 901.9L1197.2 901.7L1198.1 902.3L1199 902.2L1199.9 902.5L1200.8 902L1201.7 901.8L1202.6 902.3L1203.5 902.3L1204.4 901.9L1205.3 902.1L1206.2 901.7L1207.1 902.3L1208 901.7L1208.9 901.7L1209.8 901.7L1210.7 901.7L1211.6 901.8L1212.5 902.1L1213.4 901.6L1214.3 901.9L1215.2 902.3L1216.1 902L1217 902.2L1217.9 902.1L1218.8 902.5L1219.7 902.1L1220.6 902.4L1221.5 901.9L1222.4 902.5L1223.3 902.3L1224.2 902.3L1225.1 902.1L1226 902.5L1226.9 902L1227.8 901.8L1228.7 902.2L1229.6 901.9L1230.5 901.7L1231.4 901.8L1232.3 902.2L1233.2 902.1L1234.1 901.8L1235 901.8L1235.9 902.4L1236.8 901.9L1237.7 902.1L1238.6 902.2L1239.5 901.8L1240.4 902.6L1241.3 902.2L1242.2 902.3L1243.1 902.6L1244 902.3L1244.9 901.9L1245.8 902.1L1246.7 902.1L1247.6 902.1L1248.5 901.7L1249.4 902L1250.3 902.3L1251.2 902L1252.1 901.7L1253 902L1253.9 901.9L1254.8 902.2L1255.7 901.7L1256.6 902L1257.5 901.7L1258.4 902.2L1259.3 901.8L1260.2 901.9L1261.1 902.3L1262 902.5L1262.9 902.2L1263.8 902.4L1264.7 901.8L1265.6 902.3L1266.5 902.4L1267.4 901.9L1268.3 902.2L1269.2 902.1L1270.1 902.1L1271 901.9L1271.9 902.5L1272.8 902.4L1273.7 902.4L1274.6 901.7L1275.5 901.9L1276.4 902.5L1277.3 901.6L1278.2 902.1L1279.1 901.7L1280 902.5L1280.9 902.2L1281.8 902.5L1282.7 902.3L1283.6 901.8L1284.5 901.8L1285.4 902.5L1286.3 902L1287.2 902.1L1288.1 902.5L1289 902.5L1289.9 901.7L1290.8 902.1L1291.7 901.7L1292.6 902.3L1293.5 901.7L1294.4 902.4L1295.3 902.3L1296.2 902.6L1297.1 902L1298 901.7L1298.9 902.1L1299.8 901.9L1300.7 902.4L1301.6 901.9L1302.5 902.5L1303.4 902.1L1304.3 901.7L1305.2 902L1306.1 902.2L1307 901.9L1307.9 902.4L1308.8 902.1L1309.7 902L1310.6 901.7L1311.5 902.1L1312.4 902.3L1313.3 902L1314.2 901.7L1315.1 902.1L1316 902.5L1316.9 902.4L1317.8 902.1L1318.7 902.1L1319.6 902.4L1320.5 902.1L1321.4 902.2L1322.3 902.6L1323.2 902L1324.1 902.4L1325 901.6L1325.9 902L1326.8 902.6L1327.7 902.5L1328.6 901.9L1329.5 902.6L1330.4 901.9L1331.3 902.3L1332.2 902.6L1333.1 902.5L1334 901.7L1334.9 902.4L1335.8 902.3L1336.7 902.3L1337.6 902.3L1338.5 902L1339.4 902L1340.3 902.2L1341.2 902L1342.1 902.1L1343 902.2L1343.9 902L1344.8 902.5L1345.7 902.4L1346.6 902.2L1347.5 902.4L1348.4 902.1L1349.3 902.2L1350.2 902.2L1351.1 902.1L1352 901.8L1352.9 901.9L1353.8 902.3L1354.7 902.5L1355.6 902.5L1356.5 902.4L1357.4 901.8L1358.3 901.7L1359.2 901.8L1360.1 902.2L1361 902L1361.9 902L1362.8 902L1363.7 901.7L1364.6 902L1365.5 902.1L1366.4 902.2L1367.3 902L1368.2 901.7L1369.1 902L1370 902.1L1370.9 901.9L1371.8 902.6L1372.7 902.5L1373.6 902.3L1374.5 901.6L1375.4 902L1376.3 901.8L1377.2 901.8L1378.1 902.1L1379 902.4L1379.9 901.7L1380.8 901.7L1381.7 902L1382.6 901.9L1383.5 902.2L1384.4 902.3L1385.3 902.2L1386.2 902L1387.1 902.5L1388 901.7L1388.9 902L1389.8 902.3L1390.7 901.7L1391.6 901.7L1392.5 901.8L1393.4 901.9L1394.3 902.3L1395.2 902L1396.1 902.2L1397 902.1L1397.9 901.9L1398.8 902.2L1399.7 902L1400.6 901.8L1401.5 902.2L1402.4 902.6L1403.3 902.4L1404.2 902L1405.1 902.3L1406 901.7L1406.9 901.7L1407.8 902.2L1408.7 901.9L1409.6 902.1L1410.5 902.6L1411.4 901.7L1412.3 902L1413.2 902.4L1414.1 901.7L1415 902.4L1415.9 902.1L1416.8 901.8L1417.7 901.9L1418.6 901.9L1419.5 902.1L1420.4 901.8L1421.3 902L1422.2 902.1L1423.1 902.1L1424 902.4L1424.9 901.7L1425.8 902.3L1426.7 902L1427.6 901.9L1428.5 902.1L1429.4 902.1L1430.3 902.4L1431.2 902.2L1432.1 901.8L1433 902.5L1433.9 901.8L1434.8 902L1435.7 902.3L1436.6 902.4L1437.5 902.3L1438.4 902.5L1439.3 902.4L1440.2 901.8L1441.1 902.4L1442 901.8L1442.9 902.1L1443.8 902.4L1444.7 902.5L1445.6 902.5L1446.5 902.2L1447.4 902L1448.3 902.1L1449.2 902.4L1450.1 902.3L1451 901.6L1451.9 901.8L1452.8 901.9L1453.7 902.1L1454.6 901.8L1455.5 902.2L1456.4 901.8L1457.3 902L1458.2 902.4L1459.1 901.8L1460 901.8L1460.9 902L1461.8 901.8L1462.7 902.4L1463.6 902.1L1464.5 901.7L1465.4 901.8L1466.3 901.7L1467.2 901.9L1468.1 902.6L1469 902.4L1469.9 902.2L1470.8 902L1471.7 902L1472.6 901.7L1473.5 901.8L1474.4 901.9L1475.3 902.3L1476.2 901.8L1477.1 902.1L1478 902.6L1478.9 901.8L1479.8 901.7L1480.7 902.5L1481.6 902.6L1482.5 902.2L1483.4 902L1484.3 902.1L1485.2 902.4L1486.1 901.8L1487 901.8L1487.9 901.7L1488.8 901.8L1489.7 902.5L1490.6 902.3L1491.5 902.1L1492.4 901.8L1493.3 901.6L1494.2 901.8L1495.1 902.2L1496 902.1L1496.9 902.1L1497.8 902.1L1498.7 902L1499.6 902.5L1500.5 901.8L1501.4 901.8L1502.3 901.9L1503.2 901.6L1504.1 902L1505 902L1505.9 901.7L1506.8 902.2L1507.7 902L1508.6 902.1L1509.5 901.8L1510.4 902.1L1511.3 902.6L1512.2 902.3L1513.1 901.7L1514 902.5L1514.9 902.1L1515.8 901.6L1516.7 902L1517.6 902.5L1518.5 901.8L1519.4 901.7L1520.3 902L1521.2 902.5L1522.1 901.7L1523 902.5L1523.9 901.9L1524.8 902.4L1525.7 902.1L1526.6 902.3L1527.4 902.1L1527.4 910L1526.6 909.6L1525.7 909.7L1524.8 910.2L1523.9 910.2L1523 910.2L1522.1 910.2L1521.2 910.3L1520.3 909.9L1519.4 909.9L1518.5 910.2L1517.6 909.8L1516.7 910.4L1515.8 909.6L1514.9 909.7L1514 910.2L1513.1 910.3L1512.2 910.3L1511.3 910.3L1510.4 909.7L1509.5 910L1508.6 909.8L1507.7 909.9L1506.8 909.9L1505.9 910.1L1505 910.4L1504.1 910.3L1503.2 909.7L1502.3 910.1L1501.4 909.7L1500.5 910.2L1499.6 909.9L1498.7 910.2L1497.8 910L1496.9 909.6L1496 909.6L1495.1 909.6L1494.2 909.8L1493.3 909.7L1492.4 910.1L1491.5 909.5L1490.6 910.4L1489.7 909.6L1488.8 910.3L1487.9 910L1487 910.4L1486.1 909.5L1485.2 910.1L1484.3 910L1483.4 910.3L1482.5 909.5L1481.6 910L1480.7 909.8L1479.8 909.6L1478.9 909.9L1478 910.3L1477.1 910L1476.2 910.3L1475.3 910.4L1474.4 910.1L1473.5 909.5L1472.6 910L1471.7 909.8L1470.8 910.2L1469.9 910L1469 909.7L1468.1 910.3L1467.2 910.2L1466.3 910.3L1465.4 910.1L1464.5 909.8L1463.6 910.3L1462.7 910.3L1461.8 909.8L1460.9 910.4L1460 909.5L1459.1 910.2L1458.2 910.4L1457.3 909.7L1456.4 909.9L1455.5 910.2L1454.6 910.3L1453.7 910.4L1452.8 910.1L1451.9 910.2L1451 910.1L1450.1 909.8L1449.2 910.1L1448.3 910.4L1447.4 910.3L1446.5 909.8L1445.6 909.7L1444.7 909.7L1443.8 909.9L1442.9 910.1L1442 909.9L1441.1 910L1440.2 909.9L1439.3 910.3L1438.4 910.3L1437.5 910L1436.6 910.1L1435.7 910.3L1434.8 909.8L1433.9 909.7L1433 909.9L1432.1 910.1L1431.2 910.3L1430.3 910.1L1429.4 910.1L1428.5 910L1427.6 910.2L1426.7 909.5L1425.8 910.1L1424.9 910.2L1424 910.4L1423.1 909.5L1422.2 909.8L1421.3 910.1L1420.4 910.3L1419.5 910.2L1418.6 909.8L1417.7 909.8L1416.8 909.6L1415.9 910L1415 909.9L1414.1 909.5L1413.2 909.7L1412.3 910.1L1411.4 909.6L1410.5 909.7L1409.6 910.1L1408.7 909.6L1407.8 909.8L1406.9 910.4L1406 909.7L1405.1 910.3L1404.2 909.7L1403.3 909.7L1402.4 910.4L1401.5 910.4L1400.6 910.3L1399.7 909.6L1398.8 909.9L1397.9 910.3L1397 909.7L1396.1 910L1395.2 909.7L1394.3 909.5L1393.4 910.4L1392.5 910.3L1391.6 910.1L1390.7 910.4L1389.8 909.8L1388.9 910L1388 910.3L1387.1 909.8L1386.2 910L1385.3 909.8L1384.4 909.7L1383.5 910.1L1382.6 910.4L1381.7 909.5L1380.8 910.1L1379.9 910.2L1379 909.7L1378.1 910.1L1377.2 910.2L1376.3 910.2L1375.4 909.7L1374.5 909.6L1373.6 910.2L1372.7 910L1371.8 910.4L1370.9 910.5L1370 910.4L1369.1 910.4L1368.2 910.1L1367.3 910.1L1366.4 909.7L1365.5 909.6L1364.6 910.1L1363.7 909.6L1362.8 910.5L1361.9 909.7L1361 910.2L1360.1 910.3L1359.2 910.1L1358.3 910.3L1357.4 910.1L1356.5 909.6L1355.6 909.6L1354.7 909.6L1353.8 909.8L1352.9 910.4L1352 909.8L1351.1 909.9L1350.2 909.8L1349.3 910.4L1348.4 910L1347.5 910.2L1346.6 909.9L1345.7 910.3L1344.8 910L1343.9 909.9L1343 909.6L1342.1 909.9L1341.2 909.9L1340.3 909.8L1339.4 909.6L1338.5 909.6L1337.6 909.7L1336.7 909.5L1335.8 910L1334.9 909.8L1334 909.8L1333.1 910.1L1332.2 910.4L1331.3 910.2L1330.4 910.4L1329.5 910.4L1328.6 909.8L1327.7 910.2L1326.8 910.1L1325.9 910L1325 910.1L1324.1 909.8L1323.2 910.4L1322.3 910.2L1321.4 910.5L1320.5 909.6L1319.6 910.3L1318.7 909.8L1317.8 909.8L1316.9 910.4L1316 910.3L1315.1 910.1L1314.2 910.2L1313.3 909.7L1312.4 909.8L1311.5 910.4L1310.6 909.8L1309.7 910.3L1308.8 910.1L1307.9 910.1L1307 910.2L1306.1 910.2L1305.2 910.3L1304.3 909.9L1303.4 909.9L1302.5 910.3L1301.6 910.1L1300.7 910.2L1299.8 909.6L1298.9 910L1298 910.2L1297.1 909.6L1296.2 909.5L1295.3 910L1294.4 909.7L1293.5 909.9L1292.6 910L1291.7 909.5L1290.8 910.1L1289.9 910.3L1289 910.1L1288.1 909.6L1287.2 909.6L1286.3 910.2L1285.4 910.1L1284.5 909.8L1283.6 909.6L1282.7 910L1281.8 910.2L1280.9 909.8L1280 909.9L1279.1 909.5L1278.2 910.1L1277.3 909.9L1276.4 909.9L1275.5 909.7L1274.6 910.1L1273.7 910L1272.8 910.4L1271.9 909.5L1271 910.4L1270.1 909.5L1269.2 909.8L1268.3 909.7L1267.4 909.8L1266.5 910L1265.6 909.5L1264.7 909.9L1263.8 910.2L1262.9 910.4L1262 910.1L1261.1 910L1260.2 910L1259.3 910.1L1258.4 910L1257.5 909.6L1256.6 909.6L1255.7 909.6L1254.8 910.1L1253.9 909.9L1253 909.5L1252.1 910.3L1251.2 909.9L1250.3 910L1249.4 910.2L1248.5 910.1L1247.6 909.7L1246.7 910L1245.8 909.9L1244.9 909.5L1244 909.6L1243.1 910.3L1242.2 909.8L1241.3 910.3L1240.4 909.6L1239.5 909.9L1238.6 909.6L1237.7 910L1236.8 909.7L1235.9 910.3L1235 909.5L1234.1 909.8L1233.2 909.5L1232.3 909.8L1231.4 909.6L1230.5 909.9L1229.6 910.2L1228.7 909.6L1227.8 910.4L1226.9 910.3L1226 909.6L1225.1 910.4L1224.2 909.8L1223.3 910.4L1222.4 909.9L1221.5 910.4L1220.6 910.1L1219.7 909.6L1218.8 909.8L1217.9 910.3L1217 909.5L1216.1 910.1L1215.2 909.5L1214.3 909.7L1213.4 909.7L1212.5 909.9L1211.6 910.3L1210.7 909.6L1209.8 909.7L1208.9 909.6L1208 910L1207.1 910.4L1206.2 910.1L1205.3 910.3L1204.4 910L1203.5 910.1L1202.6 910.2L1201.7 909.8L1200.8 910.4L1199.9 910.1L1199 910L1198.1 910.3L1197.2 909.7L1196.3 909.9L1195.4 909.7L1194.5 909.5L1193.6 909.8L1192.7 909.9L1191.8 909.7L1190.9 910.1L1190 910.2L1189.1 910.2L1188.2 909.7L1187.3 910.3L1186.4 909.7L1185.5 910.4L1184.6 909.7L1183.7 910L1182.8 909.6L1181.9 910.1L1181 910L1180.1 910.4L1179.2 910.1L1178.3 909.7L1177.4 910.4L1176.5 909.6L1175.6 910.3L1174.7 910.2L1173.8 909.8L1172.9 909.8L1172 910L1171.1 910.3L1170.2 910.1L1169.3 910L1168.4 909.9L1167.5 909.9L1166.6 910.4L1165.7 909.8L1164.8 909.8L1163.9 909.8L1163 909.8L1162.1 909.8L1161.2 910.4L1160.3 910.2L1159.4 909.6L1158.5 910.4L1157.6 909.6L1156.7 910.3L1155.8 910.4L1154.9 910.3L1154 909.6L1153.1 909.7L1152.2 910.1L1151.3 909.9L1150.4 910.1L1149.5 909.7L1148.6 909.5L1147.7 909.9L1146.8 909.8L1145.9 909.9L1145 909.7L1144.1 910.3L1143.2 910L1142.3 910.4L1141.4 910.3L1140.5 910.1L1139.6 909.5L1138.7 909.8L1137.8 910.2L1136.9 909.9L1136 910.3L1135.1 910L1134.2 910.4L1133.3 909.8L1132.4 910.2L1131.5 910.1L1130.6 910.3L1129.7 909.9L1128.8 909.9L1127.9 909.6L1127 909.5L1126.1 909.9L1125.2 909.7L1124.3 910L1123.4 909.9L1122.5 910.4L1121.6 909.8L1120.7 910.2L1119.8 909.6L1118.9 910.3L1118 910.2L1117.1 910.2L1116.2 909.8L1115.3 910.3L1114.4 910L1113.5 910L1112.6 910.4L1111.7 909.6L1110.8 910.3L1109.9 909.8L1109 909.8L1108.1 910L1107.2 909.8L1106.3 910.1L1105.4 910L1104.5 910L1103.6 909.7L1102.7 909.9L1101.8 909.8L1100.9 910.1L1100 909.7L1099.1 909.6L1098.2 909.6L1097.3 909.8L1096.4 909.8L1095.5 909.8L1094.6 910L1093.7 909.6L1092.8 909.9L1091.9 910.1L1091 910.1L1090.1 910.1L1089.2 909.9L1088.3 910.2L1087.4 909.7L1086.5 909.7L1085.6 909.5L1084.7 909.7L1083.8 909.9L1082.9 910.5L1082 910.1L1081.1 910L1080.2 909.7L1079.3 910.2L1078.4 910L1077.5 909.9L1076.6 910L1075.7 909.9L1074.8 910.3L1073.9 909.7L1073 909.9L1072.1 910.3L1071.2 910.4L1070.3 910.1L1069.4 909.7L1068.5 910L1067.6 909.5L1066.7 909.7L1065.8 910.2L1064.9 910.2L1064 910.2L1063.1 909.7L1062.2 909.9L1061.3 910L1060.4 910.5L1059.5 910.2L1058.6 910.3L1057.7 909.9L1056.8 909.5L1055.9 910.3L1055 910.3L1054.1 909.7L1053.2 909.5L1052.3 910Z" fill="#a6e784" fill-opacity="0.93"/><path d="M1525 906V721" stroke="#5f9c4e" stroke-width="1.6"/><path d="M1525.2 906V877" stroke="#8fd47c" stroke-width="2.4"/></g>
</svg>
<div class="tick" style="left:37.6px;top:109.3px">0.0 s</div><div class="tick" style="left:187.3px;top:109.3px">500 ms</div><div class="tick" style="left:337.0px;top:109.3px">1.00 s</div><div class="tick" style="left:486.7px;top:109.3px">1.5 s</div><div class="tick" style="left:636.4px;top:109.3px">2.0 s</div><div class="tick" style="left:786.1px;top:109.3px">2.5 s</div><div class="tick" style="left:935.8px;top:109.3px">3.0 s</div><div class="tick" style="left:1085.5px;top:109.3px">3.5 s</div><div class="tick" style="left:1235.2px;top:109.3px">4.0 s</div><div class="tick" style="left:1384.9px;top:109.3px">4.5 s</div>
<div id="ywrap"><div class="ylab" style="left:3.6px;top:43.5px">400 mA</div><div class="ylab" style="left:3.6px;top:148.2px">200 mA</div><div class="ylab" style="left:3.6px;top:252.6px">0.0 A</div><div class="ylab" style="left:3.6px;top:304.8px">4 V</div><div class="ylab" style="left:3.6px;top:421.2px">2 V</div><div class="ylab" style="left:3.6px;top:536.2px">0.0 V</div><div class="ylab" style="left:3.6px;top:679.1px">1 W</div><div class="ylab" style="left:3.6px;top:814.4px">0.0 W</div></div>
<div class="clabel" style="left:36.3px;top:135.4px;width:163.5px;background:#70ae9f;color:#000">Main current - Ace</div><div class="clabel" style="left:36.3px;top:414.1px;width:163.5px">Main voltage - Ace</div><div class="clabel" style="left:36.3px;top:693.1px;width:154.5px">Main power - Ace</div>
<div class="legend" style="left:1164.3px;top:136px;width:358.3px"><div class="caret"></div><div class="hd" style="left:36.7px">MIN</div><div class="hd" style="left:117.1px">AVG</div><div class="hd" style="left:197.5px">MAX</div><div class="hd" style="left:277.9px">ENERGY</div><div class="row" style="top:27.4px;width:347.5px"></div><div class="sq" style="top:35.6px;background:#aaea9e"></div><div class="v" style="left:36.7px;top:31.4px">-3.06 mA</div><div class="v" style="left:117.1px;top:31.4px">18.6 mA</div><div class="v" style="left:197.5px;top:31.4px">400 mA</div><div class="v" style="left:277.9px;top:31.4px">17.5 µWh</div><div class="sq" style="top:60.85px;background:#f5f558"></div><div class="v" style="left:36.7px;top:56.65px">-10.3 mA</div><div class="v" style="left:117.1px;top:56.65px">18.2 mA</div><div class="v" style="left:197.5px;top:56.65px">393 mA</div><div class="v" style="left:277.9px;top:56.65px">16.5 µWh</div><div class="sq" style="top:86.10000000000001px;background:#f7aa3c"></div><div class="v" style="left:36.7px;top:81.9px">-2.69 mA</div><div class="v" style="left:117.1px;top:81.9px">18.8 mA</div><div class="v" style="left:197.5px;top:81.9px">404 mA</div><div class="v" style="left:277.9px;top:81.9px">17.0 µWh</div><div class="selt">SELECTION</div></div><div class="legend" style="left:1271px;top:414.3px;width:251.6px"><div class="caret"></div><div class="hd" style="left:36.7px">MIN</div><div class="hd" style="left:108.3px">AVG</div><div class="hd" style="left:179.7px">MAX</div><div class="row" style="top:27.4px;width:240.79999999999998px"></div><div class="sq" style="top:35.6px;background:#aaea9e"></div><div class="v" style="left:36.7px;top:31.4px">5.50 mV</div><div class="v" style="left:108.3px;top:31.4px">3.72 V</div><div class="v" style="left:179.7px;top:31.4px">4.32 V</div><div class="sq" style="top:60.85px;background:#f5f558"></div><div class="v" style="left:36.7px;top:56.65px">2.10 mV</div><div class="v" style="left:108.3px;top:56.65px">2.65 V</div><div class="v" style="left:179.7px;top:56.65px">4.15 V</div><div class="sq" style="top:86.10000000000001px;background:#f7aa3c"></div><div class="v" style="left:36.7px;top:81.9px">3.57 mV</div><div class="v" style="left:108.3px;top:81.9px">3.11 V</div><div class="v" style="left:179.7px;top:81.9px">4.13 V</div><div class="selt">SELECTION</div></div><div class="legend" style="left:1243px;top:693.3px;width:279.8px"><div class="caret"></div><div class="hd" style="left:36.5px">MIN</div><div class="hd" style="left:117.5px">AVG</div><div class="hd" style="left:198.2px">MAX</div><div class="row" style="top:27.4px;width:269.0px"></div><div class="sq" style="top:35.6px;background:#aaea9e"></div><div class="v" style="left:36.5px;top:31.4px">-7.90 mW</div><div class="v" style="left:117.5px;top:31.4px">77.3 mW</div><div class="v" style="left:198.2px;top:31.4px">802 mW</div><div class="sq" style="top:60.85px;background:#f5f558"></div><div class="v" style="left:36.5px;top:56.65px">-4.60 mW</div><div class="v" style="left:117.5px;top:56.65px">72.5 mW</div><div class="v" style="left:198.2px;top:56.65px">787 mW</div><div class="sq" style="top:86.10000000000001px;background:#f7aa3c"></div><div class="v" style="left:36.5px;top:81.9px">-6.28 mW</div><div class="v" style="left:117.5px;top:81.9px">75.0 mW</div><div class="v" style="left:198.2px;top:81.9px">834 mW</div><div class="selt">SELECTION</div></div>
<div id="status"></div><div id="bottomline"></div><svg class="abs" style="left:0;top:1003px" width="8" height="8"><path d="M0 8V1A6 6 0 0 0 6 7H8V8Z" fill="#fff"/><path d="M0 1A6 6 0 0 0 6 7" fill="none" stroke="#aaa" stroke-width="0.8"/></svg><svg class="abs" style="left:1528px;top:1003px" width="8" height="8"><path d="M8 8V1A6 6 0 0 1 2 7H0V8Z" fill="#e8e8e8"/><path d="M8 1A6 6 0 0 1 2 7" fill="none" stroke="#aaa" stroke-width="0.8"/></svg><div class="st" style="left:14.5px">Press <b>H</b> to toggle the Quick Help.</div><div class="st" style="left:1153px">License:</div><div class="abs" style="left:1225.2px;top:986px;width:76.8px;height:17px;border-radius:3.5px;background:#f7b23b;color:#4f3c10;font-size:10.5px;line-height:17.4px;text-align:center;white-space:nowrap;-webkit-text-stroke:0.3px #4f3c10">PRO + BT + AT</div><div class="st" style="left:1329px">Core: running</div><div class="st" style="left:1461.5px;letter-spacing:-0.4px">TCP: on</div>
</div>
</body></html>
